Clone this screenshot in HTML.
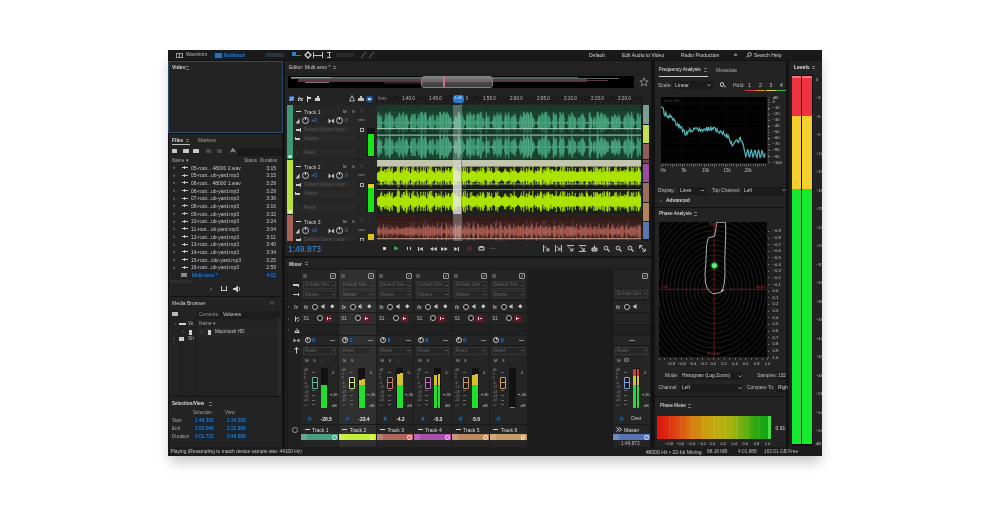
<!DOCTYPE html><html><head><meta charset="utf-8"><style>
html,body{margin:0;padding:0;background:#fff;width:991px;height:518px;overflow:hidden}
div{position:absolute}
.t{position:absolute;white-space:nowrap;font-family:"Liberation Sans",sans-serif}
</style></head><body>
<div id="app" style="left:0;top:0;width:991px;height:518px;will-change:transform;filter:blur(0.3px)"><div style="left:168.00px;top:50.00px;width:654.00px;height:406.00px;background:#121212;box-shadow:0 8px 12px -2px rgba(0,0,0,0.24), 0 0 0 0.8px rgba(255,255,255,0.9);"></div>
<div style="left:168.00px;top:50.00px;width:654.00px;height:10.00px;background:#1a1a1a;"></div>
<div style="left:168.00px;top:61.00px;width:115.00px;height:72.00px;background:#232323;border:1.3px solid #2e4a68;box-sizing:border-box;"></div>
<div style="left:169.00px;top:134.00px;width:113.00px;height:162.00px;background:#232323;"></div>
<div style="left:169.00px;top:297.00px;width:113.00px;height:99.00px;background:#232323;"></div>
<div style="left:169.00px;top:397.00px;width:113.00px;height:50.00px;background:#232323;"></div>
<div style="left:285.00px;top:61.00px;width:366.00px;height:195.00px;background:#232323;"></div>
<div style="left:285.00px;top:258.00px;width:366.00px;height:189.00px;background:#232323;"></div>
<div style="left:655.00px;top:61.00px;width:131.00px;height:146.00px;background:#232323;"></div>
<div style="left:655.00px;top:208.00px;width:131.00px;height:188.00px;background:#232323;"></div>
<div style="left:655.00px;top:397.00px;width:131.00px;height:50.00px;background:#232323;"></div>
<div style="left:789.00px;top:61.00px;width:33.00px;height:386.00px;background:#232323;"></div>
<div style="left:168.00px;top:447.00px;width:654.00px;height:9.00px;background:#1c1c1c;"></div>
<div style="left:176.00px;top:53.00px;width:7.00px;height:5.00px;background:transparent;border:1px solid #9a9a9a;box-sizing:border-box;"></div>
<div style="left:179.00px;top:53.00px;width:1.00px;height:5.00px;background:#9a9a9a;"></div>
<div class="t" style="left:186.00px;top:52.48px;font-size:4.7px;line-height:5.64px;color:#b8b8b8;">Waveform</div>
<div style="left:211.00px;top:51.00px;width:35.00px;height:8.00px;background:#0e2033;"></div>
<div style="left:215.00px;top:53.00px;width:7.00px;height:5.00px;background:#2f6fb3;"></div>
<div class="t" style="left:223.50px;top:52.30px;font-size:5px;line-height:6.00px;color:#3d8fe0;">Multitrack</div>
<div style="left:266.00px;top:53.00px;width:18.00px;height:4.00px;background:#2a3440;"></div>
<div style="left:292.00px;top:52.00px;width:4.00px;height:4.00px;background:#2f7fd0;"></div>
<div style="left:296.00px;top:55.00px;width:5.00px;height:1.00px;background:#2f7fd0;"></div>
<svg style="position:absolute;left:304px;top:51px" width="8" height="8"><path d="M1 4 L4 1 L7 4 L4 7 Z" fill="none" stroke="#d0d0d0" stroke-width="1.3"/></svg>
<div style="left:313.00px;top:52.00px;width:1.00px;height:6.00px;background:#c0c0c0;"></div>
<div style="left:322.00px;top:52.00px;width:1.00px;height:6.00px;background:#c0c0c0;"></div>
<div style="left:314.00px;top:55.00px;width:8.00px;height:1.00px;background:#c0c0c0;"></div>
<div style="left:328.50px;top:52.00px;width:1.00px;height:6.00px;background:#bdbdbd;"></div>
<div style="left:327.00px;top:52.00px;width:4.00px;height:1.00px;background:#bdbdbd;"></div>
<div style="left:327.00px;top:57.00px;width:4.00px;height:1.00px;background:#bdbdbd;"></div>
<div style="left:336.00px;top:53.00px;width:18.00px;height:4.00px;background:#2b2b2b;"></div>
<svg style="position:absolute;left:360px;top:51px" width="16" height="8"><path d="M1 7 L6 1 M9 7 L14 1" stroke="#4a4a4a" stroke-width="1.2"/></svg>
<div class="t" style="left:589.00px;top:52.00px;font-size:5px;line-height:6.00px;color:#d2d2d2;">Default</div>
<div class="t" style="left:622.00px;top:52.00px;font-size:5px;line-height:6.00px;color:#d2d2d2;">Edit Audio to Video</div>
<div class="t" style="left:681.00px;top:52.00px;font-size:5px;line-height:6.00px;color:#d2d2d2;">Radio Production</div>
<div class="t" style="left:733.80px;top:51.20px;font-size:6px;line-height:7.20px;color:#c8c8c8;font-weight:bold">&raquo;</div>
<svg style="position:absolute;left:746.00px;top:52.00px;overflow:visible" width="6" height="6" viewBox="0 0 6 6"><circle cx="3.6" cy="2.4" r="1.8" fill="none" stroke="#c8c8c8" stroke-width="0.9"/><path d="M2.3 3.7 L0.5 5.5" stroke="#c8c8c8" stroke-width="1"/></svg>
<div class="t" style="left:754.00px;top:52.00px;font-size:5px;line-height:6.00px;color:#d2d2d2;">Search Help</div>
<div class="t" style="left:172.00px;top:64.40px;font-size:5px;line-height:6.00px;color:#d8d8d8;font-weight:bold">Video</div>
<div style="left:186.00px;top:65.50px;width:3.00px;height:4.00px;background:transparent;border-top:1px solid #777;border-bottom:1px solid #777;box-sizing:border-box"></div>
<div class="t" style="left:172.00px;top:137.00px;font-size:5px;line-height:6.00px;color:#d8d8d8;font-weight:bold">Files</div>
<div style="left:172.00px;top:144.00px;width:18.00px;height:1.00px;background:#bdbdbd;"></div>
<div style="left:186.00px;top:138.50px;width:3.00px;height:3.50px;background:transparent;border-top:1px solid #777;border-bottom:1px solid #777;box-sizing:border-box"></div>
<div class="t" style="left:198.00px;top:137.00px;font-size:5px;line-height:6.00px;color:#a0a0a0;">Markers</div>
<div style="left:172.00px;top:149.20px;width:5.00px;height:3.80px;background:#c8c8c8;border-radius:0.5px"></div>
<div style="left:183.00px;top:149.20px;width:5.50px;height:3.80px;background:#c8c8c8;border-radius:0.5px"></div>
<div style="left:193.00px;top:149.20px;width:5.50px;height:3.80px;background:#c8c8c8;border-radius:0.5px"></div>
<div style="left:205.50px;top:149.20px;width:5.50px;height:3.80px;background:#4a4a4a;border-radius:0.5px"></div>
<div style="left:217.00px;top:149.20px;width:4.50px;height:3.80px;background:#4a4a4a;border-radius:0.5px"></div>
<svg style="position:absolute;left:230.00px;top:148.00px;overflow:visible" width="6" height="5" viewBox="0 0 6 5"><path d="M0.5 4.5 L3 0.5 L5.5 4.5 M1.5 3 H4.5" stroke="#bbb" stroke-width="0.9" fill="none"/></svg>
<div style="left:237.00px;top:147.50px;width:45.00px;height:8.00px;background:#1a1a1a;"></div>
<div class="t" style="left:172.00px;top:157.74px;font-size:4.6px;line-height:5.52px;color:#a8a8a8;">Name &#9662;</div>
<div class="t" style="left:244.00px;top:157.74px;font-size:4.6px;line-height:5.52px;color:#a8a8a8;">Status</div>
<div class="t" style="left:260.00px;top:157.74px;font-size:4.6px;line-height:5.52px;color:#a8a8a8;">Duration</div>
<div class="t" style="left:173.00px;top:163.90px;font-size:6px;line-height:7.20px;color:#c0c0c0;">&#8250;</div>
<div style="left:182.00px;top:167.10px;width:6.00px;height:0.90px;background:#c8c8c8;"></div>
<div style="left:183.50px;top:166.00px;width:0.90px;height:3.00px;background:#c8c8c8;"></div>
<div class="t" style="left:191.00px;top:164.50px;font-size:5.0px;line-height:6.00px;color:#c8c8c8;">05-root...  48000 2.wav</div>
<div class="t" style="left:266.30px;top:164.50px;font-size:5.0px;line-height:6.00px;color:#c8c8c8;">3:15</div>
<div class="t" style="left:173.00px;top:171.57px;font-size:6px;line-height:7.20px;color:#c0c0c0;">&#8250;</div>
<div style="left:182.00px;top:174.77px;width:6.00px;height:0.90px;background:#c8c8c8;"></div>
<div style="left:183.50px;top:173.67px;width:0.90px;height:3.00px;background:#c8c8c8;"></div>
<div class="t" style="left:191.00px;top:172.17px;font-size:5.0px;line-height:6.00px;color:#c8c8c8;">05-root...ub-yard.mp3</div>
<div class="t" style="left:266.30px;top:172.17px;font-size:5.0px;line-height:6.00px;color:#c8c8c8;">3:15</div>
<div class="t" style="left:173.00px;top:179.24px;font-size:6px;line-height:7.20px;color:#c0c0c0;">&#8250;</div>
<div style="left:182.00px;top:182.44px;width:6.00px;height:0.90px;background:#c8c8c8;"></div>
<div style="left:183.50px;top:181.34px;width:0.90px;height:3.00px;background:#c8c8c8;"></div>
<div class="t" style="left:191.00px;top:179.84px;font-size:5.0px;line-height:6.00px;color:#c8c8c8;">06-root...  48000 1.wav</div>
<div class="t" style="left:266.30px;top:179.84px;font-size:5.0px;line-height:6.00px;color:#c8c8c8;">3:29</div>
<div class="t" style="left:173.00px;top:186.91px;font-size:6px;line-height:7.20px;color:#c0c0c0;">&#8250;</div>
<div style="left:182.00px;top:190.11px;width:6.00px;height:0.90px;background:#c8c8c8;"></div>
<div style="left:183.50px;top:189.01px;width:0.90px;height:3.00px;background:#c8c8c8;"></div>
<div class="t" style="left:191.00px;top:187.51px;font-size:5.0px;line-height:6.00px;color:#c8c8c8;">06-root...ub-yard.mp3</div>
<div class="t" style="left:266.30px;top:187.51px;font-size:5.0px;line-height:6.00px;color:#c8c8c8;">3:29</div>
<div class="t" style="left:173.00px;top:194.58px;font-size:6px;line-height:7.20px;color:#c0c0c0;">&#8250;</div>
<div style="left:182.00px;top:197.78px;width:6.00px;height:0.90px;background:#c8c8c8;"></div>
<div style="left:183.50px;top:196.68px;width:0.90px;height:3.00px;background:#c8c8c8;"></div>
<div class="t" style="left:191.00px;top:195.18px;font-size:5.0px;line-height:6.00px;color:#c8c8c8;">07-root...ub-yard.mp3</div>
<div class="t" style="left:266.30px;top:195.18px;font-size:5.0px;line-height:6.00px;color:#c8c8c8;">3:36</div>
<div class="t" style="left:173.00px;top:202.25px;font-size:6px;line-height:7.20px;color:#c0c0c0;">&#8250;</div>
<div style="left:182.00px;top:205.45px;width:6.00px;height:0.90px;background:#c8c8c8;"></div>
<div style="left:183.50px;top:204.35px;width:0.90px;height:3.00px;background:#c8c8c8;"></div>
<div class="t" style="left:191.00px;top:202.85px;font-size:5.0px;line-height:6.00px;color:#c8c8c8;">08-root...ub-yard.mp3</div>
<div class="t" style="left:266.30px;top:202.85px;font-size:5.0px;line-height:6.00px;color:#c8c8c8;">3:16</div>
<div class="t" style="left:173.00px;top:209.92px;font-size:6px;line-height:7.20px;color:#c0c0c0;">&#8250;</div>
<div style="left:182.00px;top:213.12px;width:6.00px;height:0.90px;background:#c8c8c8;"></div>
<div style="left:183.50px;top:212.02px;width:0.90px;height:3.00px;background:#c8c8c8;"></div>
<div class="t" style="left:191.00px;top:210.52px;font-size:5.0px;line-height:6.00px;color:#c8c8c8;">09-root...ub-yard.mp3</div>
<div class="t" style="left:266.30px;top:210.52px;font-size:5.0px;line-height:6.00px;color:#c8c8c8;">3:32</div>
<div class="t" style="left:173.00px;top:217.59px;font-size:6px;line-height:7.20px;color:#c0c0c0;">&#8250;</div>
<div style="left:182.00px;top:220.79px;width:6.00px;height:0.90px;background:#c8c8c8;"></div>
<div style="left:183.50px;top:219.69px;width:0.90px;height:3.00px;background:#c8c8c8;"></div>
<div class="t" style="left:191.00px;top:218.19px;font-size:5.0px;line-height:6.00px;color:#c8c8c8;">10-root...ub-yard.mp3</div>
<div class="t" style="left:266.30px;top:218.19px;font-size:5.0px;line-height:6.00px;color:#c8c8c8;">3:24</div>
<div class="t" style="left:173.00px;top:225.26px;font-size:6px;line-height:7.20px;color:#c0c0c0;">&#8250;</div>
<div style="left:182.00px;top:228.46px;width:6.00px;height:0.90px;background:#c8c8c8;"></div>
<div style="left:183.50px;top:227.36px;width:0.90px;height:3.00px;background:#c8c8c8;"></div>
<div class="t" style="left:191.00px;top:225.86px;font-size:5.0px;line-height:6.00px;color:#c8c8c8;">11-root...ub-yard.mp3</div>
<div class="t" style="left:266.30px;top:225.86px;font-size:5.0px;line-height:6.00px;color:#c8c8c8;">3:04</div>
<div class="t" style="left:173.00px;top:232.93px;font-size:6px;line-height:7.20px;color:#c0c0c0;">&#8250;</div>
<div style="left:182.00px;top:236.13px;width:6.00px;height:0.90px;background:#c8c8c8;"></div>
<div style="left:183.50px;top:235.03px;width:0.90px;height:3.00px;background:#c8c8c8;"></div>
<div class="t" style="left:191.00px;top:233.53px;font-size:5.0px;line-height:6.00px;color:#c8c8c8;">12-root...ub-yard.mp3</div>
<div class="t" style="left:266.30px;top:233.53px;font-size:5.0px;line-height:6.00px;color:#c8c8c8;">3:11</div>
<div class="t" style="left:173.00px;top:240.60px;font-size:6px;line-height:7.20px;color:#c0c0c0;">&#8250;</div>
<div style="left:182.00px;top:243.80px;width:6.00px;height:0.90px;background:#c8c8c8;"></div>
<div style="left:183.50px;top:242.70px;width:0.90px;height:3.00px;background:#c8c8c8;"></div>
<div class="t" style="left:191.00px;top:241.20px;font-size:5.0px;line-height:6.00px;color:#c8c8c8;">13-root...ub-yard.mp3</div>
<div class="t" style="left:266.30px;top:241.20px;font-size:5.0px;line-height:6.00px;color:#c8c8c8;">3:40</div>
<div class="t" style="left:173.00px;top:248.27px;font-size:6px;line-height:7.20px;color:#c0c0c0;">&#8250;</div>
<div style="left:182.00px;top:251.47px;width:6.00px;height:0.90px;background:#c8c8c8;"></div>
<div style="left:183.50px;top:250.37px;width:0.90px;height:3.00px;background:#c8c8c8;"></div>
<div class="t" style="left:191.00px;top:248.87px;font-size:5.0px;line-height:6.00px;color:#c8c8c8;">14-root...ub-yard.mp3</div>
<div class="t" style="left:266.30px;top:248.87px;font-size:5.0px;line-height:6.00px;color:#c8c8c8;">3:34</div>
<div class="t" style="left:173.00px;top:255.94px;font-size:6px;line-height:7.20px;color:#c0c0c0;">&#8250;</div>
<div style="left:182.00px;top:259.14px;width:6.00px;height:0.90px;background:#c8c8c8;"></div>
<div style="left:183.50px;top:258.04px;width:0.90px;height:3.00px;background:#c8c8c8;"></div>
<div class="t" style="left:191.00px;top:256.54px;font-size:5.0px;line-height:6.00px;color:#c8c8c8;">15-root...ctic-yard.mp3</div>
<div class="t" style="left:266.30px;top:256.54px;font-size:5.0px;line-height:6.00px;color:#c8c8c8;">3:25</div>
<div class="t" style="left:173.00px;top:263.61px;font-size:6px;line-height:7.20px;color:#c0c0c0;">&#8250;</div>
<div style="left:182.00px;top:266.81px;width:6.00px;height:0.90px;background:#c8c8c8;"></div>
<div style="left:183.50px;top:265.71px;width:0.90px;height:3.00px;background:#c8c8c8;"></div>
<div class="t" style="left:191.00px;top:264.21px;font-size:5.0px;line-height:6.00px;color:#c8c8c8;">16-root...ub-yard.mp3</div>
<div class="t" style="left:266.30px;top:264.21px;font-size:5.0px;line-height:6.00px;color:#c8c8c8;">2:59</div>
<div style="left:181.00px;top:272.88px;width:6.00px;height:4.00px;background:#8a8a8a;"></div>
<div class="t" style="left:191.00px;top:271.88px;font-size:5.0px;line-height:6.00px;color:#3d8fe0;background:#10263d;padding:0 1px">Multi.sesx *</div>
<div class="t" style="left:265.50px;top:271.88px;font-size:5.0px;line-height:6.00px;color:#3d8fe0;background:#10263d;padding:0 1px">4:01</div>
<div style="left:170.00px;top:280.00px;width:22.00px;height:3.00px;background:#2e2e2e;"></div>
<div class="t" style="left:210.00px;top:286.60px;font-size:4px;line-height:4.80px;color:#555;">&#9654;</div>
<div style="left:221.00px;top:286.00px;width:6.00px;height:5.00px;background:transparent;border:1px solid #c8c8c8;border-top:none;box-sizing:border-box"></div>
<svg style="position:absolute;left:232px;top:285px" width="9" height="8"><path d="M1 3 H3 L6 0.5 V7.5 L3 5 H1 Z" fill="#d0d0d0"/><path d="M7 2 Q8.5 4 7 6" stroke="#d0d0d0" fill="none" stroke-width="0.8"/></svg>
<div class="t" style="left:172.00px;top:300.00px;font-size:5px;line-height:6.00px;color:#d0d0d0;">Media Browser</div>
<div style="left:270.00px;top:301.00px;width:4.00px;height:4.00px;background:#444;border-radius:50%"></div>
<div style="left:172.00px;top:312.00px;width:6.00px;height:4.00px;background:#b8b8b8;"></div>
<div style="left:197.00px;top:310.50px;width:83.00px;height:8.00px;background:#1d1d1d;"></div>
<div class="t" style="left:199.00px;top:311.68px;font-size:4.7px;line-height:5.64px;color:#9a9a9a;">Contents:</div>
<div class="t" style="left:223.00px;top:311.68px;font-size:4.7px;line-height:5.64px;color:#d0d0d0;">Volumes</div>
<div style="left:181.00px;top:318.00px;width:1.00px;height:78.00px;background:#1c1c1c;"></div>
<div style="left:195.00px;top:319.00px;width:1.00px;height:77.00px;background:#1c1c1c;"></div>
<div style="left:278.00px;top:318.00px;width:3.00px;height:78.00px;background:#2c2c2c;"></div>
<div class="t" style="left:173.00px;top:321.30px;font-size:4.5px;line-height:5.40px;color:#888;">&#8964;</div>
<div style="left:179.00px;top:323.00px;width:7.00px;height:2.00px;background:#cfcfcf;"></div>
<div class="t" style="left:188.00px;top:321.18px;font-size:4.7px;line-height:5.64px;color:#bbb;">Vo</div>
<div class="t" style="left:199.00px;top:321.18px;font-size:4.7px;line-height:5.64px;color:#a0a0a0;">Name &#9662;</div>
<div style="left:196.00px;top:328.00px;width:82.00px;height:8.00px;background:#262626;"></div>
<div class="t" style="left:182.00px;top:329.30px;font-size:4.5px;line-height:5.40px;color:#888;">&#8250;</div>
<div style="left:189.00px;top:330.00px;width:3.00px;height:5.00px;background:#d0d0d0;"></div>
<div class="t" style="left:201.00px;top:329.30px;font-size:4.5px;line-height:5.40px;color:#888;">&#8250;</div>
<div style="left:208.00px;top:330.00px;width:3.00px;height:5.00px;background:#d0d0d0;"></div>
<div class="t" style="left:215.00px;top:329.18px;font-size:4.7px;line-height:5.64px;color:#c4c4c4;">Macintosh HD</div>
<div class="t" style="left:173.00px;top:336.30px;font-size:4.5px;line-height:5.40px;color:#888;">&#8250;</div>
<div style="left:179.00px;top:337.00px;width:5.00px;height:4.00px;background:#c8c8c8;"></div>
<div class="t" style="left:188.00px;top:336.18px;font-size:4.7px;line-height:5.64px;color:#bbb;">Sh</div>
<div style="left:168.00px;top:396.00px;width:114.00px;height:1.00px;background:#151515;"></div>
<div class="t" style="left:172.00px;top:401.24px;font-size:4.6px;line-height:5.52px;color:#d8d8d8;font-weight:bold">Selection/View</div>
<div style="left:209.00px;top:402.20px;width:3.00px;height:3.50px;background:transparent;border-top:1px solid #777;border-bottom:1px solid #777;box-sizing:border-box"></div>
<div class="t" style="left:193.00px;top:410.24px;font-size:4.6px;line-height:5.52px;color:#a0a0a0;">Selection</div>
<div class="t" style="left:225.00px;top:410.24px;font-size:4.6px;line-height:5.52px;color:#a0a0a0;">View</div>
<div class="t" style="left:172.00px;top:417.74px;font-size:4.6px;line-height:5.52px;color:#a8a8a8;">Start</div>
<div class="t" style="left:194.00px;top:417.62px;font-size:4.8px;line-height:5.76px;color:#3d8fe0;background:#10263d;padding:0 1px">1:48.333</div>
<div class="t" style="left:226.00px;top:417.62px;font-size:4.8px;line-height:5.76px;color:#3d8fe0;background:#10263d;padding:0 1px">1:34.295</div>
<div class="t" style="left:172.00px;top:425.94px;font-size:4.6px;line-height:5.52px;color:#a8a8a8;">End</div>
<div class="t" style="left:194.00px;top:425.82px;font-size:4.8px;line-height:5.76px;color:#3d8fe0;background:#10263d;padding:0 1px">1:50.049</div>
<div class="t" style="left:226.00px;top:425.82px;font-size:4.8px;line-height:5.76px;color:#3d8fe0;background:#10263d;padding:0 1px">2:22.894</div>
<div class="t" style="left:172.00px;top:434.14px;font-size:4.6px;line-height:5.52px;color:#a8a8a8;">Duration</div>
<div class="t" style="left:194.00px;top:434.02px;font-size:4.8px;line-height:5.76px;color:#3d8fe0;background:#10263d;padding:0 1px">0:01.732</div>
<div class="t" style="left:226.00px;top:434.02px;font-size:4.8px;line-height:5.76px;color:#3d8fe0;background:#10263d;padding:0 1px">0:48.599</div>
<div class="t" style="left:170.50px;top:449.29px;font-size:4.85px;line-height:5.82px;color:#c8c8c8;">Playing (Resampling to match device sample rate: 44100 Hz)</div>
<div class="t" style="left:645.40px;top:448.88px;font-size:5.2px;line-height:6.24px;color:#c4c4c4;">48000 Hz &bull; 32-bit Mixing</div>
<div class="t" style="left:707.00px;top:449.12px;font-size:4.8px;line-height:5.76px;color:#bdbdbd;">88.18 MB</div>
<div class="t" style="left:738.00px;top:449.12px;font-size:4.8px;line-height:5.76px;color:#bdbdbd;">4:01.888</div>
<div class="t" style="left:764.00px;top:449.12px;font-size:4.8px;line-height:5.76px;color:#bdbdbd;">163.01 GB Free</div>
<div class="t" style="left:289.00px;top:64.30px;font-size:5px;line-height:6.00px;color:#c8c8c8;">Editor: Multi.sesx *</div>
<div style="left:333.00px;top:65.50px;width:3.00px;height:3.50px;background:transparent;border-top:1px solid #777;border-bottom:1px solid #777;box-sizing:border-box"></div>
<div style="left:285.00px;top:73.00px;width:366.00px;height:1.00px;background:#1c1c1c;"></div>
<div style="left:288.00px;top:76.00px;width:346.00px;height:12.00px;background:#000;"></div>
<div style="left:290.50px;top:77.00px;width:287.00px;height:2.40px;background:#56625a;"></div>
<div style="left:577.00px;top:77.60px;width:42.00px;height:1.00px;background:#5a645a;"></div>
<div style="left:298.00px;top:79.40px;width:289.00px;height:2.80px;background:#563a42;"></div>
<div style="left:587.00px;top:80.00px;width:21.00px;height:1.00px;background:#5a3a44;"></div>
<div style="left:291.00px;top:77.30px;width:40.00px;height:0.80px;background:#9a9a9a;"></div>
<div style="left:305.00px;top:82.20px;width:24.00px;height:0.90px;background:#8a7078;"></div>
<div style="left:384.00px;top:82.20px;width:40.00px;height:1.60px;background:#2a1a20;"></div>
<div style="left:421.00px;top:75.50px;width:72.00px;height:12.00px;background:linear-gradient(180deg,rgba(150,150,150,0.6),rgba(110,110,110,0.55));border:1px solid #808080;border-radius:3px;box-sizing:border-box"></div>
<div style="left:443.00px;top:76.00px;width:1.50px;height:11.00px;background:#d07080;"></div>
<svg style="position:absolute;left:639px;top:77px" width="10" height="10"><path d="M5 0.8 L6.2 3.8 L9.2 3.9 L6.8 5.9 L7.7 9 L5 7.3 L2.3 9 L3.2 5.9 L0.8 3.9 L3.8 3.8 Z" fill="none" stroke="#999" stroke-width="0.8"/></svg>
<div style="left:288.50px;top:95.80px;width:5.40px;height:5.60px;background:#1f5fa8;border-radius:1px"></div>
<svg style="position:absolute;left:288.50px;top:95.80px;overflow:visible" width="5.4" height="5.6" viewBox="0 0 5.4 5.6"><path d="M0.8 1.8 H4.6 M3.6 0.9 L4.6 1.8 L3.6 2.7 M4.6 3.8 H0.8 M1.8 2.9 L0.8 3.8 L1.8 4.7" stroke="#e8f0ff" stroke-width="0.7" fill="none"/></svg>
<div class="t" style="left:297.80px;top:94.78px;font-size:6.2px;line-height:7.44px;color:#e8e8e8;"><i><b>fx</b></i></div>
<div style="left:307.00px;top:96.00px;width:1.00px;height:6.00px;background:#d8d8d8;"></div>
<div style="left:308.00px;top:97.00px;width:3.00px;height:2.00px;background:#d8d8d8;"></div>
<div style="left:315.00px;top:98.00px;width:5.00px;height:3.00px;background:#d0d0d0;"></div>
<div style="left:317.00px;top:96.00px;width:2.00px;height:2.00px;background:#d0d0d0;"></div>
<svg style="position:absolute;left:349px;top:95px" width="6" height="7"><path d="M3 0.5 L5.5 6 H0.5 Z" fill="none" stroke="#bdbdbd" stroke-width="0.9"/></svg>
<div style="left:357.50px;top:98.00px;width:6.00px;height:3.00px;background:#bdbdbd;"></div>
<div style="left:359.50px;top:96.00px;width:2.00px;height:2.00px;background:#bdbdbd;"></div>
<div style="left:366.00px;top:95.50px;width:6.50px;height:6.50px;background:#1e5fa8;border-radius:50%"></div>
<div style="left:368.00px;top:97.50px;width:2.50px;height:2.50px;background:#e0e0e0;border-radius:50% 50% 0 0"></div>
<div style="left:376.00px;top:94.50px;width:266.00px;height:9.50px;background:#1d1d1d;"></div>
<div class="t" style="left:378.00px;top:96.30px;font-size:4.5px;line-height:5.40px;color:#9a9a9a;">hms</div>
<div class="t" style="left:402.00px;top:96.24px;font-size:4.6px;line-height:5.52px;color:#c0c0c0;">1:40.0</div>
<div class="t" style="left:429.00px;top:96.24px;font-size:4.6px;line-height:5.52px;color:#c0c0c0;">1:45.0</div>
<div class="t" style="left:483.00px;top:96.24px;font-size:4.6px;line-height:5.52px;color:#c0c0c0;">1:55.0</div>
<div class="t" style="left:510.00px;top:96.24px;font-size:4.6px;line-height:5.52px;color:#c0c0c0;">2:00.0</div>
<div class="t" style="left:537.00px;top:96.24px;font-size:4.6px;line-height:5.52px;color:#c0c0c0;">2:05.0</div>
<div class="t" style="left:564.00px;top:96.24px;font-size:4.6px;line-height:5.52px;color:#c0c0c0;">2:10.0</div>
<div class="t" style="left:591.00px;top:96.24px;font-size:4.6px;line-height:5.52px;color:#c0c0c0;">2:15.0</div>
<div class="t" style="left:618.00px;top:96.24px;font-size:4.6px;line-height:5.52px;color:#c0c0c0;">2:20.0</div>
<svg style="position:absolute;left:376px;top:101px" width="266" height="3"><rect x="3.0" y="0" width="0.6" height="3" fill="#3a3a3a"/><rect x="8.4" y="0" width="0.6" height="2" fill="#3a3a3a"/><rect x="13.8" y="0" width="0.6" height="2" fill="#3a3a3a"/><rect x="19.2" y="0" width="0.6" height="2" fill="#3a3a3a"/><rect x="24.6" y="0" width="0.6" height="2" fill="#3a3a3a"/><rect x="30.0" y="0" width="0.6" height="3" fill="#3a3a3a"/><rect x="35.4" y="0" width="0.6" height="2" fill="#3a3a3a"/><rect x="40.8" y="0" width="0.6" height="2" fill="#3a3a3a"/><rect x="46.2" y="0" width="0.6" height="2" fill="#3a3a3a"/><rect x="51.6" y="0" width="0.6" height="2" fill="#3a3a3a"/><rect x="57.0" y="0" width="0.6" height="3" fill="#3a3a3a"/><rect x="62.4" y="0" width="0.6" height="2" fill="#3a3a3a"/><rect x="67.8" y="0" width="0.6" height="2" fill="#3a3a3a"/><rect x="73.2" y="0" width="0.6" height="2" fill="#3a3a3a"/><rect x="78.6" y="0" width="0.6" height="2" fill="#3a3a3a"/><rect x="84.0" y="0" width="0.6" height="3" fill="#3a3a3a"/><rect x="89.4" y="0" width="0.6" height="2" fill="#3a3a3a"/><rect x="94.8" y="0" width="0.6" height="2" fill="#3a3a3a"/><rect x="100.2" y="0" width="0.6" height="2" fill="#3a3a3a"/><rect x="105.6" y="0" width="0.6" height="2" fill="#3a3a3a"/><rect x="111.0" y="0" width="0.6" height="3" fill="#3a3a3a"/><rect x="116.4" y="0" width="0.6" height="2" fill="#3a3a3a"/><rect x="121.8" y="0" width="0.6" height="2" fill="#3a3a3a"/><rect x="127.2" y="0" width="0.6" height="2" fill="#3a3a3a"/><rect x="132.6" y="0" width="0.6" height="2" fill="#3a3a3a"/><rect x="138.0" y="0" width="0.6" height="3" fill="#3a3a3a"/><rect x="143.4" y="0" width="0.6" height="2" fill="#3a3a3a"/><rect x="148.8" y="0" width="0.6" height="2" fill="#3a3a3a"/><rect x="154.2" y="0" width="0.6" height="2" fill="#3a3a3a"/><rect x="159.6" y="0" width="0.6" height="2" fill="#3a3a3a"/><rect x="165.0" y="0" width="0.6" height="3" fill="#3a3a3a"/><rect x="170.4" y="0" width="0.6" height="2" fill="#3a3a3a"/><rect x="175.8" y="0" width="0.6" height="2" fill="#3a3a3a"/><rect x="181.2" y="0" width="0.6" height="2" fill="#3a3a3a"/><rect x="186.6" y="0" width="0.6" height="2" fill="#3a3a3a"/><rect x="192.0" y="0" width="0.6" height="3" fill="#3a3a3a"/><rect x="197.4" y="0" width="0.6" height="2" fill="#3a3a3a"/><rect x="202.8" y="0" width="0.6" height="2" fill="#3a3a3a"/><rect x="208.2" y="0" width="0.6" height="2" fill="#3a3a3a"/><rect x="213.6" y="0" width="0.6" height="2" fill="#3a3a3a"/><rect x="219.0" y="0" width="0.6" height="3" fill="#3a3a3a"/><rect x="224.4" y="0" width="0.6" height="2" fill="#3a3a3a"/><rect x="229.8" y="0" width="0.6" height="2" fill="#3a3a3a"/><rect x="235.2" y="0" width="0.6" height="2" fill="#3a3a3a"/><rect x="240.6" y="0" width="0.6" height="2" fill="#3a3a3a"/><rect x="246.0" y="0" width="0.6" height="3" fill="#3a3a3a"/><rect x="251.4" y="0" width="0.6" height="2" fill="#3a3a3a"/><rect x="256.8" y="0" width="0.6" height="2" fill="#3a3a3a"/><rect x="262.2" y="0" width="0.6" height="2" fill="#3a3a3a"/></svg>
<div style="left:287.00px;top:104.50px;width:90.00px;height:54.00px;overflow:hidden;">
<div style="left:0.00px;top:0.00px;width:5.50px;height:54.00px;background:#3d9a75;"></div>
<div style="left:5.50px;top:0.00px;width:84.00px;height:54.00px;background:#262626;"></div>
<div style="left:9.00px;top:6.50px;width:5.00px;height:1.00px;background:#cfcfcf;"></div>
<div class="t" style="left:17.00px;top:4.00px;font-size:5px;line-height:6.00px;color:#d0d0d0;">Track 1</div>
<div class="t" style="left:56.00px;top:4.48px;font-size:4.2px;line-height:5.04px;color:#b0b0b0;">M</div>
<div class="t" style="left:65.00px;top:4.48px;font-size:4.2px;line-height:5.04px;color:#b0b0b0;">S</div>
<div class="t" style="left:73.00px;top:4.30px;font-size:4.5px;line-height:5.40px;color:#444;">R</div>
<div class="t" style="left:81.00px;top:4.30px;font-size:4.5px;line-height:5.40px;color:#444;">I</div>
<svg style="position:absolute;left:7.50px;top:13.00px;overflow:visible" width="5" height="6" viewBox="0 0 5 6"><path d="M0.5 5.5 L4.5 0.5 V5.5 Z" fill="#c8c8c8"/></svg>
<div style="left:14.60px;top:12.10px;width:7.80px;height:7.80px;background:transparent;border:1.4px solid #c4c4c4;border-radius:50%;box-sizing:border-box"></div>
<div style="left:18.10px;top:12.90px;width:0.90px;height:3.00px;background:#c8c8c8;"></div>
<div class="t" style="left:24.50px;top:13.12px;font-size:4.8px;line-height:5.76px;color:#3d8fe0;">+0</div>
<svg style="position:absolute;left:41.00px;top:13.00px;overflow:visible" width="6.5" height="6" viewBox="0 0 6.5 6"><path d="M0.5 0.5 L3.2 3 L0.5 5.5 Z M6 0.5 L3.3 3 L6 5.5 Z" fill="#c8c8c8"/></svg>
<div style="left:48.50px;top:12.10px;width:7.80px;height:7.80px;background:transparent;border:1.4px solid #c4c4c4;border-radius:50%;box-sizing:border-box"></div>
<div style="left:52.00px;top:12.90px;width:0.90px;height:3.00px;background:#c8c8c8;"></div>
<div class="t" style="left:58.00px;top:13.12px;font-size:4.8px;line-height:5.76px;color:#3d8fe0;">0</div>
<div class="t" style="left:71.00px;top:13.72px;font-size:3.8px;line-height:4.56px;color:#9a9a9a;">sets</div>
<div style="left:15.00px;top:21.80px;width:54.00px;height:7.00px;background:#292929;"></div>
<div style="left:8.50px;top:24.30px;width:4.50px;height:2.00px;background:#c8c8c8;"></div>
<div style="left:12.50px;top:23.50px;width:1.00px;height:3.60px;background:#c8c8c8;"></div>
<div class="t" style="left:17.00px;top:22.48px;font-size:4.7px;line-height:5.64px;color:#5a5a5a;">Default Stereo Input</div>
<div style="left:72.50px;top:23.10px;width:4.40px;height:4.40px;background:transparent;border:1px solid #aaa;box-sizing:border-box"></div>
<div style="left:15.00px;top:30.50px;width:54.00px;height:7.00px;background:#292929;"></div>
<div style="left:8.50px;top:33.00px;width:4.50px;height:2.00px;background:#c8c8c8;"></div>
<div style="left:8.00px;top:32.20px;width:1.00px;height:3.60px;background:#c8c8c8;"></div>
<div class="t" style="left:17.00px;top:31.18px;font-size:4.7px;line-height:5.64px;color:#5a5a5a;">Master</div>
<div style="left:15.00px;top:44.50px;width:54.00px;height:7.00px;background:#292929;"></div>
<div class="t" style="left:9.00px;top:45.30px;font-size:4.5px;line-height:5.40px;color:#666;">&#8250;</div>
<div class="t" style="left:17.00px;top:45.18px;font-size:4.7px;line-height:5.64px;color:#5a5a5a;">Read</div>
<div style="left:79.60px;top:23.50px;width:8.80px;height:29.00px;background:#151515;"></div>
<div style="left:81.00px;top:29.00px;width:6.00px;height:22.00px;background:#19e619;"></div>
</div>
<div style="left:287.00px;top:159.50px;width:90.00px;height:54.00px;overflow:hidden;">
<div style="left:0.00px;top:0.00px;width:5.50px;height:54.00px;background:#b5e23c;"></div>
<div style="left:5.50px;top:0.00px;width:84.00px;height:54.00px;background:#262626;"></div>
<div style="left:9.00px;top:6.50px;width:5.00px;height:1.00px;background:#cfcfcf;"></div>
<div class="t" style="left:17.00px;top:4.00px;font-size:5px;line-height:6.00px;color:#d0d0d0;">Track 2</div>
<div class="t" style="left:56.00px;top:4.48px;font-size:4.2px;line-height:5.04px;color:#b0b0b0;">M</div>
<div class="t" style="left:65.00px;top:4.48px;font-size:4.2px;line-height:5.04px;color:#b0b0b0;">S</div>
<div class="t" style="left:73.00px;top:4.30px;font-size:4.5px;line-height:5.40px;color:#444;">R</div>
<div class="t" style="left:81.00px;top:4.30px;font-size:4.5px;line-height:5.40px;color:#444;">I</div>
<svg style="position:absolute;left:7.50px;top:13.00px;overflow:visible" width="5" height="6" viewBox="0 0 5 6"><path d="M0.5 5.5 L4.5 0.5 V5.5 Z" fill="#c8c8c8"/></svg>
<div style="left:14.60px;top:12.10px;width:7.80px;height:7.80px;background:transparent;border:1.4px solid #c4c4c4;border-radius:50%;box-sizing:border-box"></div>
<div style="left:18.10px;top:12.90px;width:0.90px;height:3.00px;background:#c8c8c8;"></div>
<div class="t" style="left:24.50px;top:13.12px;font-size:4.8px;line-height:5.76px;color:#3d8fe0;">+0</div>
<svg style="position:absolute;left:41.00px;top:13.00px;overflow:visible" width="6.5" height="6" viewBox="0 0 6.5 6"><path d="M0.5 0.5 L3.2 3 L0.5 5.5 Z M6 0.5 L3.3 3 L6 5.5 Z" fill="#c8c8c8"/></svg>
<div style="left:48.50px;top:12.10px;width:7.80px;height:7.80px;background:transparent;border:1.4px solid #c4c4c4;border-radius:50%;box-sizing:border-box"></div>
<div style="left:52.00px;top:12.90px;width:0.90px;height:3.00px;background:#c8c8c8;"></div>
<div class="t" style="left:58.00px;top:13.12px;font-size:4.8px;line-height:5.76px;color:#3d8fe0;">0</div>
<div class="t" style="left:71.00px;top:13.72px;font-size:3.8px;line-height:4.56px;color:#9a9a9a;">sets</div>
<div style="left:15.00px;top:21.80px;width:54.00px;height:7.00px;background:#292929;"></div>
<div style="left:8.50px;top:24.30px;width:4.50px;height:2.00px;background:#c8c8c8;"></div>
<div style="left:12.50px;top:23.50px;width:1.00px;height:3.60px;background:#c8c8c8;"></div>
<div class="t" style="left:17.00px;top:22.48px;font-size:4.7px;line-height:5.64px;color:#5a5a5a;">Default Stereo Input</div>
<div style="left:72.50px;top:23.10px;width:4.40px;height:4.40px;background:transparent;border:1px solid #aaa;box-sizing:border-box"></div>
<div style="left:15.00px;top:30.50px;width:54.00px;height:7.00px;background:#292929;"></div>
<div style="left:8.50px;top:33.00px;width:4.50px;height:2.00px;background:#c8c8c8;"></div>
<div style="left:8.00px;top:32.20px;width:1.00px;height:3.60px;background:#c8c8c8;"></div>
<div class="t" style="left:17.00px;top:31.18px;font-size:4.7px;line-height:5.64px;color:#5a5a5a;">Master</div>
<div style="left:15.00px;top:44.50px;width:54.00px;height:7.00px;background:#292929;"></div>
<div class="t" style="left:9.00px;top:45.30px;font-size:4.5px;line-height:5.40px;color:#666;">&#8250;</div>
<div class="t" style="left:17.00px;top:45.18px;font-size:4.7px;line-height:5.64px;color:#5a5a5a;">Read</div>
<div style="left:79.60px;top:23.50px;width:8.80px;height:29.00px;background:#151515;"></div>
<div style="left:81.00px;top:24.00px;width:6.00px;height:4.00px;background:#e0d020;"></div>
<div style="left:81.00px;top:28.00px;width:6.00px;height:24.00px;background:#19e619;"></div>
</div>
<div style="left:287.00px;top:214.50px;width:90.00px;height:26.00px;overflow:hidden;">
<div style="left:0.00px;top:0.00px;width:5.50px;height:26.00px;background:#a8625a;"></div>
<div style="left:5.50px;top:0.00px;width:84.00px;height:26.00px;background:#262626;"></div>
<div style="left:9.00px;top:6.50px;width:5.00px;height:1.00px;background:#cfcfcf;"></div>
<div class="t" style="left:17.00px;top:4.00px;font-size:5px;line-height:6.00px;color:#d0d0d0;">Track 3</div>
<div class="t" style="left:56.00px;top:4.48px;font-size:4.2px;line-height:5.04px;color:#b0b0b0;">M</div>
<div class="t" style="left:65.00px;top:4.48px;font-size:4.2px;line-height:5.04px;color:#b0b0b0;">S</div>
<div class="t" style="left:73.00px;top:4.30px;font-size:4.5px;line-height:5.40px;color:#444;">R</div>
<div class="t" style="left:81.00px;top:4.30px;font-size:4.5px;line-height:5.40px;color:#444;">I</div>
<svg style="position:absolute;left:7.50px;top:13.00px;overflow:visible" width="5" height="6" viewBox="0 0 5 6"><path d="M0.5 5.5 L4.5 0.5 V5.5 Z" fill="#c8c8c8"/></svg>
<div style="left:14.60px;top:12.10px;width:7.80px;height:7.80px;background:transparent;border:1.4px solid #c4c4c4;border-radius:50%;box-sizing:border-box"></div>
<div style="left:18.10px;top:12.90px;width:0.90px;height:3.00px;background:#c8c8c8;"></div>
<div class="t" style="left:24.50px;top:13.12px;font-size:4.8px;line-height:5.76px;color:#3d8fe0;">+0</div>
<svg style="position:absolute;left:41.00px;top:13.00px;overflow:visible" width="6.5" height="6" viewBox="0 0 6.5 6"><path d="M0.5 0.5 L3.2 3 L0.5 5.5 Z M6 0.5 L3.3 3 L6 5.5 Z" fill="#c8c8c8"/></svg>
<div style="left:48.50px;top:12.10px;width:7.80px;height:7.80px;background:transparent;border:1.4px solid #c4c4c4;border-radius:50%;box-sizing:border-box"></div>
<div style="left:52.00px;top:12.90px;width:0.90px;height:3.00px;background:#c8c8c8;"></div>
<div class="t" style="left:58.00px;top:13.12px;font-size:4.8px;line-height:5.76px;color:#3d8fe0;">0</div>
<div class="t" style="left:71.00px;top:13.72px;font-size:3.8px;line-height:4.56px;color:#9a9a9a;">sets</div>
<div style="left:15.00px;top:21.80px;width:54.00px;height:7.00px;background:#292929;"></div>
<div style="left:8.50px;top:24.30px;width:4.50px;height:2.00px;background:#c8c8c8;"></div>
<div style="left:12.50px;top:23.50px;width:1.00px;height:3.60px;background:#c8c8c8;"></div>
<div class="t" style="left:17.00px;top:22.48px;font-size:4.7px;line-height:5.64px;color:#5a5a5a;">Default Stereo Input</div>
<div style="left:72.50px;top:23.10px;width:4.40px;height:4.40px;background:transparent;border:1px solid #aaa;box-sizing:border-box"></div>
<div style="left:15.00px;top:30.50px;width:54.00px;height:7.00px;background:#292929;"></div>
<div style="left:8.50px;top:33.00px;width:4.50px;height:2.00px;background:#c8c8c8;"></div>
<div style="left:8.00px;top:32.20px;width:1.00px;height:3.60px;background:#c8c8c8;"></div>
<div class="t" style="left:17.00px;top:31.18px;font-size:4.7px;line-height:5.64px;color:#5a5a5a;">Master</div>
<div style="left:79.60px;top:23.50px;width:8.80px;height:1.00px;background:#151515;"></div>
<div style="left:81.00px;top:19.00px;width:6.00px;height:6.00px;background:#e0c020;"></div>
</div>
<div style="left:288.00px;top:155.00px;width:3.50px;height:3.00px;background:#cfe8dc;border-radius:50%"></div>
<div style="left:288.00px;top:210.00px;width:3.50px;height:3.00px;background:#e8f0c0;border-radius:50%"></div>
<svg style="position:absolute;left:376.5px;top:104.5px" width="264.5" height="136" viewBox="0 0 264.5 136"><rect x="0" y="0" width="264.5" height="54.5" fill="#1b4231"/><path d="M0.25 13.2V22.4M0.75 9.8V25.8M1.25 10.1V25.5M1.75 7.4V28.2M2.25 12.5V23.1M2.75 13.3V22.3M3.25 10.4V25.2M3.75 12.1V23.5M4.25 11.0V24.6M4.75 11.6V24.0M5.25 17.1V18.5M5.75 17.1V18.5M6.25 17.1V18.5M6.75 17.1V18.5M7.25 17.1V18.5M7.75 14.3V21.3M8.25 9.2V26.4M8.75 11.0V24.6M9.25 7.6V28.0M9.75 10.6V25.0M10.25 13.3V22.3M10.75 9.7V25.9M11.25 10.7V24.9M11.75 8.5V27.1M12.25 7.8V27.8M12.75 6.4V29.2M13.25 10.9V24.7M13.75 10.2V25.4M14.25 12.8V22.8M14.75 10.1V25.5M15.25 11.0V24.6M15.75 10.8V24.8M16.25 13.4V22.2M16.75 16.2V19.4M17.25 17.1V18.5M17.75 17.1V18.5M18.25 13.5V22.1M18.75 13.3V22.3M19.25 12.6V23.0M19.75 11.5V24.1M20.25 14.1V21.5M20.75 12.4V23.2M21.25 11.5V24.1M21.75 8.7V26.9M22.25 7.6V28.0M22.75 8.9V26.7M23.25 11.4V24.2M23.75 12.5V23.1M24.25 11.7V23.9M24.75 10.1V25.5M25.25 8.8V26.8M25.75 10.7V24.9M26.25 6.4V29.2M26.75 7.5V28.1M27.25 11.2V24.4M27.75 12.1V23.5M28.25 12.1V23.5M28.75 10.5V25.1M29.25 9.2V26.4M29.75 9.3V26.3M30.25 11.2V24.4M30.75 13.3V22.3M31.25 15.2V20.4M31.75 17.1V18.5M32.25 17.1V18.5M32.75 17.1V18.5M33.25 17.1V18.5M33.75 12.9V22.7M34.25 11.6V24.0M34.75 8.9V26.7M35.25 8.9V26.7M35.75 10.6V25.0M36.25 13.3V22.3M36.75 9.5V26.1M37.25 9.1V26.5M37.75 8.8V26.8M38.25 8.8V26.8M38.75 13.3V22.3M39.25 15.5V20.1M39.75 17.1V18.5M40.25 13.4V22.2M40.75 13.2V22.4M41.25 9.0V26.6M41.75 8.9V26.7M42.25 11.6V24.0M42.75 12.9V22.7M43.25 10.5V25.1M43.75 7.8V27.8M44.25 6.4V29.2M44.75 8.0V27.6M45.25 6.4V29.2M45.75 10.0V25.6M46.25 10.6V25.0M46.75 10.1V25.5M47.25 7.7V27.9M47.75 8.3V27.3M48.25 8.3V27.3M48.75 7.1V28.5M49.25 10.6V25.0M49.75 12.7V22.9M50.25 15.3V20.3M50.75 17.1V18.5M51.25 17.1V18.5M51.75 14.3V21.3M52.25 11.6V24.0M52.75 12.9V22.7M53.25 10.5V25.1M53.75 11.9V23.7M54.25 13.1V22.5M54.75 11.8V23.8M55.25 9.2V26.4M55.75 10.2V25.4M56.25 10.4V25.2M56.75 12.8V22.8M57.25 14.9V20.7M57.75 17.1V18.5M58.25 17.1V18.5M58.75 15.5V20.1M59.25 11.3V24.3M59.75 9.9V25.7M60.25 10.2V25.4M60.75 12.2V23.4M61.25 13.3V22.3M61.75 12.3V23.3M62.25 10.1V25.5M62.75 6.9V28.7M63.25 6.4V29.2M63.75 8.6V27.0M64.25 9.5V26.1M64.75 9.7V25.9M65.25 12.1V23.5M65.75 9.8V25.8M66.25 6.8V28.8M66.75 6.4V29.2M67.25 6.4V29.2M67.75 9.1V26.5M68.25 8.0V27.6M68.75 9.6V26.0M69.25 9.0V26.6M69.75 7.5V28.1M70.25 6.4V29.2M70.75 9.4V26.2M71.25 11.2V24.4M71.75 9.1V26.5M72.25 12.6V23.0M72.75 12.6V23.0M73.25 13.8V21.8M73.75 12.3V23.3M74.25 14.2V21.4M74.75 17.1V18.5M75.25 17.1V18.5M75.75 17.1V18.5M76.25 17.1V18.5M76.75 17.1V18.5M77.25 15.9V19.7M77.75 13.3V22.3M78.25 11.6V24.0M78.75 10.5V25.1M79.25 12.1V23.5M79.75 13.1V22.5M80.25 13.3V22.3M80.75 9.7V25.9M81.25 6.7V28.9M81.75 6.4V29.2M82.25 7.3V28.3M82.75 10.5V25.1M83.25 11.6V24.0M83.75 11.1V24.5M84.25 10.9V24.7M84.75 10.4V25.2M85.25 8.0V27.6M85.75 12.1V23.5M86.25 12.4V23.2M86.75 14.2V21.4M87.25 15.0V20.6M87.75 15.1V20.5M88.25 17.1V18.5M88.75 17.1V18.5M89.25 13.9V21.7M89.75 10.0V25.6M90.25 8.5V27.1M90.75 10.3V25.3M91.25 11.8V23.8M91.75 11.1V24.5M92.25 10.5V25.1M92.75 9.9V25.7M93.25 6.4V29.2M93.75 8.6V27.0M94.25 10.0V25.6M94.75 9.9V25.7M95.25 11.2V24.4M95.75 11.0V24.6M96.25 8.9V26.7M96.75 8.8V26.8M97.25 9.3V26.3M97.75 11.4V24.2M98.25 15.6V20.0M98.75 17.1V18.5M99.25 15.4V20.2M99.75 10.0V25.6M100.25 10.0V25.6M100.75 8.6V27.0M101.25 9.1V26.5M101.75 9.6V26.0M102.25 12.9V22.7M102.75 9.4V26.2M103.25 6.4V29.2M103.75 6.4V29.2M104.25 7.4V28.2M104.75 10.0V25.6M105.25 13.2V22.4M105.75 12.5V23.1M106.25 13.1V22.5M106.75 14.0V21.6M107.25 17.1V18.5M107.75 17.1V18.5M108.25 14.3V21.3M108.75 11.9V23.7M109.25 7.6V28.0M109.75 11.6V24.0M110.25 12.9V22.7M110.75 11.6V24.0M111.25 12.4V23.2M111.75 12.7V22.9M112.25 10.6V25.0M112.75 17.1V18.5M113.25 17.1V18.5M113.75 17.1V18.5M114.25 17.1V18.5M114.75 17.1V18.5M115.25 17.1V18.5M115.75 15.2V20.4M116.25 11.3V24.3M116.75 10.9V24.7M117.25 9.0V26.6M117.75 13.4V22.2M118.25 13.9V21.7M118.75 10.8V24.8M119.25 11.8V23.8M119.75 9.6V26.0M120.25 6.9V28.7M120.75 8.8V26.8M121.25 9.9V25.7M121.75 11.0V24.6M122.25 11.2V24.4M122.75 10.0V25.6M123.25 7.6V28.0M123.75 8.1V27.5M124.25 10.5V25.1M124.75 10.6V25.0M125.25 14.9V20.7M125.75 16.0V19.6M126.25 17.1V18.5M126.75 17.1V18.5M127.25 17.1V18.5M127.75 12.6V23.0M128.25 9.7V25.9M128.75 9.3V26.3M129.25 10.7V24.9M129.75 10.4V25.2M130.25 11.9V23.7M130.75 10.4V25.2M131.25 8.1V27.5M131.75 6.4V29.2M132.25 10.5V25.1M132.75 17.1V18.5M133.25 17.1V18.5M133.75 13.0V22.6M134.25 12.6V23.0M134.75 11.5V24.1M135.25 10.5V25.1M135.75 12.2V23.4M136.25 14.2V21.4M136.75 10.8V24.8M137.25 9.4V26.2M137.75 9.7V25.9M138.25 8.7V26.9M138.75 12.7V22.9M139.25 14.5V21.1M139.75 17.1V18.5M140.25 17.1V18.5M140.75 17.1V18.5M141.25 17.1V18.5M141.75 17.1V18.5M142.25 14.8V20.8M142.75 13.0V22.6M143.25 11.0V24.6M143.75 9.4V26.2M144.25 11.8V23.8M144.75 12.7V22.9M145.25 12.5V23.1M145.75 11.5V24.1M146.25 6.4V29.2M146.75 7.8V27.8M147.25 9.7V25.9M147.75 8.2V27.4M148.25 9.7V25.9M148.75 12.4V23.2M149.25 10.2V25.4M149.75 7.8V27.8M150.25 6.4V29.2M150.75 7.3V28.3M151.25 8.7V26.9M151.75 9.2V26.4M152.25 13.4V22.2M152.75 10.3V25.3M153.25 9.1V26.5M153.75 7.0V28.6M154.25 6.4V29.2M154.75 9.4V26.2M155.25 9.9V25.7M155.75 12.4V23.2M156.25 13.3V22.3M156.75 14.0V21.6M157.25 14.0V21.6M157.75 17.1V18.5M158.25 17.1V18.5M158.75 17.1V18.5M159.25 17.1V18.5M159.75 17.1V18.5M160.25 17.1V18.5M160.75 15.1V20.5M161.25 12.3V23.3M161.75 12.2V23.4M162.25 10.2V25.4M162.75 11.0V24.6M163.25 11.6V24.0M163.75 12.0V23.6M164.25 9.5V26.1M164.75 9.0V26.6M165.25 6.4V29.2M165.75 9.4V26.2M166.25 9.2V26.4M166.75 10.2V25.4M167.25 11.4V24.2M167.75 8.2V27.4M168.25 7.3V28.3M168.75 6.4V29.2M169.25 8.0V27.6M169.75 6.7V28.9M170.25 10.2V25.4M170.75 13.8V21.8M171.25 12.2V23.4M171.75 10.4V25.2M172.25 11.6V24.0M172.75 13.3V22.3M173.25 13.7V21.9M173.75 17.1V18.5M174.25 17.1V18.5M174.75 17.1V18.5M175.25 17.1V18.5M175.75 14.7V20.9M176.25 7.6V28.0M176.75 8.2V27.4M177.25 10.5V25.1M177.75 9.4V26.2M178.25 11.2V24.4M178.75 9.5V26.1M179.25 8.7V26.9M179.75 12.0V23.6M180.25 17.1V18.5M180.75 17.1V18.5M181.25 17.1V18.5M181.75 17.1V18.5M182.25 13.3V22.3M182.75 11.7V23.9M183.25 6.4V29.2M183.75 9.6V26.0M184.25 10.4V25.2M184.75 10.6V25.0M185.25 8.5V27.1M185.75 7.8V27.8M186.25 7.7V27.9M186.75 10.9V24.7M187.25 12.2V23.4M187.75 17.1V18.5M188.25 17.1V18.5M188.75 17.1V18.5M189.25 17.1V18.5M189.75 17.1V18.5M190.25 17.1V18.5M190.75 15.7V19.9M191.25 12.4V23.2M191.75 10.6V25.0M192.25 9.2V26.4M192.75 12.5V23.1M193.25 11.5V24.1M193.75 12.1V23.5M194.25 10.3V25.3M194.75 7.0V28.6M195.25 9.3V26.3M195.75 8.0V27.6M196.25 11.2V24.4M196.75 10.8V24.8M197.25 12.3V23.3M197.75 13.3V22.3M198.25 12.1V23.5M198.75 13.4V22.2M199.25 17.1V18.5M199.75 17.1V18.5M200.25 17.1V18.5M200.75 15.2V20.4M201.25 12.0V23.6M201.75 12.1V23.5M202.25 12.7V22.9M202.75 13.1V22.5M203.25 12.8V22.8M203.75 10.1V25.5M204.25 11.3V24.3M204.75 9.7V25.9M205.25 8.5V27.1M205.75 8.3V27.3M206.25 10.5V25.1M206.75 12.3V23.3M207.25 12.5V23.1M207.75 12.4V23.2M208.25 14.4V21.2M208.75 17.1V18.5M209.25 17.1V18.5M209.75 17.1V18.5M210.25 17.1V18.5M210.75 17.1V18.5M211.25 17.1V18.5M211.75 17.1V18.5M212.25 8.9V26.7M212.75 9.3V26.3M213.25 6.4V29.2M213.75 11.8V23.8M214.25 13.3V22.3M214.75 12.8V22.8M215.25 17.1V18.5M215.75 17.1V18.5M216.25 15.0V20.6M216.75 13.8V21.8M217.25 11.1V24.5M217.75 13.2V22.4M218.25 13.3V22.3M218.75 14.0V21.6M219.25 13.2V22.4M219.75 9.8V25.8M220.25 6.4V29.2M220.75 6.4V29.2M221.25 8.0V27.6M221.75 11.9V23.7M222.25 12.3V23.3M222.75 12.2V23.4M223.25 11.0V24.6M223.75 8.1V27.5M224.25 8.7V26.9M224.75 8.2V27.4M225.25 8.8V26.8M225.75 13.4V22.2M226.25 13.6V22.0M226.75 11.2V24.4M227.25 10.4V25.2M227.75 9.3V26.3M228.25 10.2V25.4M228.75 10.8V24.8M229.25 13.0V22.6M229.75 13.1V22.5M230.25 13.9V21.7M230.75 12.4V23.2M231.25 12.4V23.2M231.75 15.2V20.4M232.25 17.1V18.5M232.75 17.1V18.5M233.25 17.1V18.5M233.75 17.1V18.5M234.25 13.5V22.1M234.75 10.9V24.7M235.25 12.2V23.4M235.75 11.7V23.9M236.25 11.9V23.7M236.75 12.7V22.9M237.25 12.1V23.5M237.75 9.5V26.1M238.25 9.5V26.1M238.75 10.8V24.8M239.25 12.1V23.5M239.75 12.3V23.3M240.25 13.8V21.8M240.75 13.7V21.9M241.25 9.9V25.7M241.75 11.4V24.2M242.25 11.5V24.1M242.75 11.4V24.2M243.25 13.9V21.7M243.75 15.7V19.9M244.25 17.1V18.5M244.75 17.1V18.5M245.25 17.1V18.5M245.75 17.1V18.5M246.25 17.1V18.5M246.75 13.6V22.0M247.25 12.4V23.2M247.75 12.2V23.4M248.25 10.8V24.8M248.75 12.7V22.9M249.25 13.1V22.5M249.75 10.3V25.3M250.25 8.0V27.6M250.75 9.4V26.2M251.25 6.4V29.2M251.75 10.2V25.4M252.25 9.8V25.8M252.75 12.5V23.1M253.25 12.0V23.6M253.75 12.0V23.6M254.25 10.8V24.8M254.75 6.4V29.2M255.25 9.4V26.2M255.75 11.9V23.7M256.25 13.2V22.4M256.75 13.8V21.8M257.25 15.6V20.0M257.75 17.1V18.5M258.25 17.1V18.5M258.75 17.1V18.5M259.25 17.1V18.5M259.75 14.5V21.1M260.25 9.2V26.4M260.75 8.0V27.6M261.25 8.1V27.5M261.75 12.1V23.5M262.25 11.1V24.5M262.75 12.6V23.0M263.25 9.6V26.0M263.75 9.4V26.2M264.25 10.2V25.4" stroke="#3f9b76" stroke-width="0.9" fill="none" opacity="1.0"/><path d="M0.25 37.4V46.6M0.75 34.0V50.0M1.25 34.3V49.7M1.75 31.6V52.4M2.25 36.7V47.3M2.75 37.5V46.5M3.25 34.6V49.4M3.75 36.3V47.7M4.25 35.2V48.8M4.75 35.8V48.2M5.25 41.3V42.7M5.75 41.3V42.7M6.25 41.3V42.7M6.75 41.3V42.7M7.25 41.3V42.7M7.75 38.5V45.5M8.25 33.4V50.6M8.75 35.2V48.8M9.25 31.8V52.2M9.75 34.8V49.2M10.25 37.5V46.5M10.75 33.9V50.1M11.25 34.9V49.1M11.75 32.7V51.3M12.25 32.0V52.0M12.75 30.6V53.4M13.25 35.1V48.9M13.75 34.4V49.6M14.25 37.0V47.0M14.75 34.3V49.7M15.25 35.2V48.8M15.75 35.0V49.0M16.25 37.6V46.4M16.75 40.4V43.6M17.25 41.3V42.7M17.75 41.3V42.7M18.25 37.7V46.3M18.75 37.5V46.5M19.25 36.8V47.2M19.75 35.7V48.3M20.25 38.3V45.7M20.75 36.6V47.4M21.25 35.7V48.3M21.75 32.9V51.1M22.25 31.8V52.2M22.75 33.1V50.9M23.25 35.6V48.4M23.75 36.7V47.3M24.25 35.9V48.1M24.75 34.3V49.7M25.25 33.0V51.0M25.75 34.9V49.1M26.25 30.6V53.4M26.75 31.7V52.3M27.25 35.4V48.6M27.75 36.3V47.7M28.25 36.3V47.7M28.75 34.7V49.3M29.25 33.4V50.6M29.75 33.5V50.5M30.25 35.4V48.6M30.75 37.5V46.5M31.25 39.4V44.6M31.75 41.3V42.7M32.25 41.3V42.7M32.75 41.3V42.7M33.25 41.3V42.7M33.75 37.1V46.9M34.25 35.8V48.2M34.75 33.1V50.9M35.25 33.1V50.9M35.75 34.8V49.2M36.25 37.5V46.5M36.75 33.7V50.3M37.25 33.3V50.7M37.75 33.0V51.0M38.25 33.0V51.0M38.75 37.5V46.5M39.25 39.7V44.3M39.75 41.3V42.7M40.25 37.6V46.4M40.75 37.4V46.6M41.25 33.2V50.8M41.75 33.1V50.9M42.25 35.8V48.2M42.75 37.1V46.9M43.25 34.7V49.3M43.75 32.0V52.0M44.25 30.6V53.4M44.75 32.2V51.8M45.25 30.6V53.4M45.75 34.2V49.8M46.25 34.8V49.2M46.75 34.3V49.7M47.25 31.9V52.1M47.75 32.5V51.5M48.25 32.5V51.5M48.75 31.3V52.7M49.25 34.8V49.2M49.75 36.9V47.1M50.25 39.5V44.5M50.75 41.3V42.7M51.25 41.3V42.7M51.75 38.5V45.5M52.25 35.8V48.2M52.75 37.1V46.9M53.25 34.7V49.3M53.75 36.1V47.9M54.25 37.3V46.7M54.75 36.0V48.0M55.25 33.4V50.6M55.75 34.4V49.6M56.25 34.6V49.4M56.75 37.0V47.0M57.25 39.1V44.9M57.75 41.3V42.7M58.25 41.3V42.7M58.75 39.7V44.3M59.25 35.5V48.5M59.75 34.1V49.9M60.25 34.4V49.6M60.75 36.4V47.6M61.25 37.5V46.5M61.75 36.5V47.5M62.25 34.3V49.7M62.75 31.1V52.9M63.25 30.6V53.4M63.75 32.8V51.2M64.25 33.7V50.3M64.75 33.9V50.1M65.25 36.3V47.7M65.75 34.0V50.0M66.25 31.0V53.0M66.75 30.6V53.4M67.25 30.6V53.4M67.75 33.3V50.7M68.25 32.2V51.8M68.75 33.8V50.2M69.25 33.2V50.8M69.75 31.7V52.3M70.25 30.6V53.4M70.75 33.6V50.4M71.25 35.4V48.6M71.75 33.3V50.7M72.25 36.8V47.2M72.75 36.8V47.2M73.25 38.0V46.0M73.75 36.5V47.5M74.25 38.4V45.6M74.75 41.3V42.7M75.25 41.3V42.7M75.75 41.3V42.7M76.25 41.3V42.7M76.75 41.3V42.7M77.25 40.1V43.9M77.75 37.5V46.5M78.25 35.8V48.2M78.75 34.7V49.3M79.25 36.3V47.7M79.75 37.3V46.7M80.25 37.5V46.5M80.75 33.9V50.1M81.25 30.9V53.1M81.75 30.6V53.4M82.25 31.5V52.5M82.75 34.7V49.3M83.25 35.8V48.2M83.75 35.3V48.7M84.25 35.1V48.9M84.75 34.6V49.4M85.25 32.2V51.8M85.75 36.3V47.7M86.25 36.6V47.4M86.75 38.4V45.6M87.25 39.2V44.8M87.75 39.3V44.7M88.25 41.3V42.7M88.75 41.3V42.7M89.25 38.1V45.9M89.75 34.2V49.8M90.25 32.7V51.3M90.75 34.5V49.5M91.25 36.0V48.0M91.75 35.3V48.7M92.25 34.7V49.3M92.75 34.1V49.9M93.25 30.6V53.4M93.75 32.8V51.2M94.25 34.2V49.8M94.75 34.1V49.9M95.25 35.4V48.6M95.75 35.2V48.8M96.25 33.1V50.9M96.75 33.0V51.0M97.25 33.5V50.5M97.75 35.6V48.4M98.25 39.8V44.2M98.75 41.3V42.7M99.25 39.6V44.4M99.75 34.2V49.8M100.25 34.2V49.8M100.75 32.8V51.2M101.25 33.3V50.7M101.75 33.8V50.2M102.25 37.1V46.9M102.75 33.6V50.4M103.25 30.6V53.4M103.75 30.6V53.4M104.25 31.6V52.4M104.75 34.2V49.8M105.25 37.4V46.6M105.75 36.7V47.3M106.25 37.3V46.7M106.75 38.2V45.8M107.25 41.3V42.7M107.75 41.3V42.7M108.25 38.5V45.5M108.75 36.1V47.9M109.25 31.8V52.2M109.75 35.8V48.2M110.25 37.1V46.9M110.75 35.8V48.2M111.25 36.6V47.4M111.75 36.9V47.1M112.25 34.8V49.2M112.75 41.3V42.7M113.25 41.3V42.7M113.75 41.3V42.7M114.25 41.3V42.7M114.75 41.3V42.7M115.25 41.3V42.7M115.75 39.4V44.6M116.25 35.5V48.5M116.75 35.1V48.9M117.25 33.2V50.8M117.75 37.6V46.4M118.25 38.1V45.9M118.75 35.0V49.0M119.25 36.0V48.0M119.75 33.8V50.2M120.25 31.1V52.9M120.75 33.0V51.0M121.25 34.1V49.9M121.75 35.2V48.8M122.25 35.4V48.6M122.75 34.2V49.8M123.25 31.8V52.2M123.75 32.3V51.7M124.25 34.7V49.3M124.75 34.8V49.2M125.25 39.1V44.9M125.75 40.2V43.8M126.25 41.3V42.7M126.75 41.3V42.7M127.25 41.3V42.7M127.75 36.8V47.2M128.25 33.9V50.1M128.75 33.5V50.5M129.25 34.9V49.1M129.75 34.6V49.4M130.25 36.1V47.9M130.75 34.6V49.4M131.25 32.3V51.7M131.75 30.6V53.4M132.25 34.7V49.3M132.75 41.3V42.7M133.25 41.3V42.7M133.75 37.2V46.8M134.25 36.8V47.2M134.75 35.7V48.3M135.25 34.7V49.3M135.75 36.4V47.6M136.25 38.4V45.6M136.75 35.0V49.0M137.25 33.6V50.4M137.75 33.9V50.1M138.25 32.9V51.1M138.75 36.9V47.1M139.25 38.7V45.3M139.75 41.3V42.7M140.25 41.3V42.7M140.75 41.3V42.7M141.25 41.3V42.7M141.75 41.3V42.7M142.25 39.0V45.0M142.75 37.2V46.8M143.25 35.2V48.8M143.75 33.6V50.4M144.25 36.0V48.0M144.75 36.9V47.1M145.25 36.7V47.3M145.75 35.7V48.3M146.25 30.6V53.4M146.75 32.0V52.0M147.25 33.9V50.1M147.75 32.4V51.6M148.25 33.9V50.1M148.75 36.6V47.4M149.25 34.4V49.6M149.75 32.0V52.0M150.25 30.6V53.4M150.75 31.5V52.5M151.25 32.9V51.1M151.75 33.4V50.6M152.25 37.6V46.4M152.75 34.5V49.5M153.25 33.3V50.7M153.75 31.2V52.8M154.25 30.6V53.4M154.75 33.6V50.4M155.25 34.1V49.9M155.75 36.6V47.4M156.25 37.5V46.5M156.75 38.2V45.8M157.25 38.2V45.8M157.75 41.3V42.7M158.25 41.3V42.7M158.75 41.3V42.7M159.25 41.3V42.7M159.75 41.3V42.7M160.25 41.3V42.7M160.75 39.3V44.7M161.25 36.5V47.5M161.75 36.4V47.6M162.25 34.4V49.6M162.75 35.2V48.8M163.25 35.8V48.2M163.75 36.2V47.8M164.25 33.7V50.3M164.75 33.2V50.8M165.25 30.6V53.4M165.75 33.6V50.4M166.25 33.4V50.6M166.75 34.4V49.6M167.25 35.6V48.4M167.75 32.4V51.6M168.25 31.5V52.5M168.75 30.6V53.4M169.25 32.2V51.8M169.75 30.9V53.1M170.25 34.4V49.6M170.75 38.0V46.0M171.25 36.4V47.6M171.75 34.6V49.4M172.25 35.8V48.2M172.75 37.5V46.5M173.25 37.9V46.1M173.75 41.3V42.7M174.25 41.3V42.7M174.75 41.3V42.7M175.25 41.3V42.7M175.75 38.9V45.1M176.25 31.8V52.2M176.75 32.4V51.6M177.25 34.7V49.3M177.75 33.6V50.4M178.25 35.4V48.6M178.75 33.7V50.3M179.25 32.9V51.1M179.75 36.2V47.8M180.25 41.3V42.7M180.75 41.3V42.7M181.25 41.3V42.7M181.75 41.3V42.7M182.25 37.5V46.5M182.75 35.9V48.1M183.25 30.6V53.4M183.75 33.8V50.2M184.25 34.6V49.4M184.75 34.8V49.2M185.25 32.7V51.3M185.75 32.0V52.0M186.25 31.9V52.1M186.75 35.1V48.9M187.25 36.4V47.6M187.75 41.3V42.7M188.25 41.3V42.7M188.75 41.3V42.7M189.25 41.3V42.7M189.75 41.3V42.7M190.25 41.3V42.7M190.75 39.9V44.1M191.25 36.6V47.4M191.75 34.8V49.2M192.25 33.4V50.6M192.75 36.7V47.3M193.25 35.7V48.3M193.75 36.3V47.7M194.25 34.5V49.5M194.75 31.2V52.8M195.25 33.5V50.5M195.75 32.2V51.8M196.25 35.4V48.6M196.75 35.0V49.0M197.25 36.5V47.5M197.75 37.5V46.5M198.25 36.3V47.7M198.75 37.6V46.4M199.25 41.3V42.7M199.75 41.3V42.7M200.25 41.3V42.7M200.75 39.4V44.6M201.25 36.2V47.8M201.75 36.3V47.7M202.25 36.9V47.1M202.75 37.3V46.7M203.25 37.0V47.0M203.75 34.3V49.7M204.25 35.5V48.5M204.75 33.9V50.1M205.25 32.7V51.3M205.75 32.5V51.5M206.25 34.7V49.3M206.75 36.5V47.5M207.25 36.7V47.3M207.75 36.6V47.4M208.25 38.6V45.4M208.75 41.3V42.7M209.25 41.3V42.7M209.75 41.3V42.7M210.25 41.3V42.7M210.75 41.3V42.7M211.25 41.3V42.7M211.75 41.3V42.7M212.25 33.1V50.9M212.75 33.5V50.5M213.25 30.6V53.4M213.75 36.0V48.0M214.25 37.5V46.5M214.75 37.0V47.0M215.25 41.3V42.7M215.75 41.3V42.7M216.25 39.2V44.8M216.75 38.0V46.0M217.25 35.3V48.7M217.75 37.4V46.6M218.25 37.5V46.5M218.75 38.2V45.8M219.25 37.4V46.6M219.75 34.0V50.0M220.25 30.6V53.4M220.75 30.6V53.4M221.25 32.2V51.8M221.75 36.1V47.9M222.25 36.5V47.5M222.75 36.4V47.6M223.25 35.2V48.8M223.75 32.3V51.7M224.25 32.9V51.1M224.75 32.4V51.6M225.25 33.0V51.0M225.75 37.6V46.4M226.25 37.8V46.2M226.75 35.4V48.6M227.25 34.6V49.4M227.75 33.5V50.5M228.25 34.4V49.6M228.75 35.0V49.0M229.25 37.2V46.8M229.75 37.3V46.7M230.25 38.1V45.9M230.75 36.6V47.4M231.25 36.6V47.4M231.75 39.4V44.6M232.25 41.3V42.7M232.75 41.3V42.7M233.25 41.3V42.7M233.75 41.3V42.7M234.25 37.7V46.3M234.75 35.1V48.9M235.25 36.4V47.6M235.75 35.9V48.1M236.25 36.1V47.9M236.75 36.9V47.1M237.25 36.3V47.7M237.75 33.7V50.3M238.25 33.7V50.3M238.75 35.0V49.0M239.25 36.3V47.7M239.75 36.5V47.5M240.25 38.0V46.0M240.75 37.9V46.1M241.25 34.1V49.9M241.75 35.6V48.4M242.25 35.7V48.3M242.75 35.6V48.4M243.25 38.1V45.9M243.75 39.9V44.1M244.25 41.3V42.7M244.75 41.3V42.7M245.25 41.3V42.7M245.75 41.3V42.7M246.25 41.3V42.7M246.75 37.8V46.2M247.25 36.6V47.4M247.75 36.4V47.6M248.25 35.0V49.0M248.75 36.9V47.1M249.25 37.3V46.7M249.75 34.5V49.5M250.25 32.2V51.8M250.75 33.6V50.4M251.25 30.6V53.4M251.75 34.4V49.6M252.25 34.0V50.0M252.75 36.7V47.3M253.25 36.2V47.8M253.75 36.2V47.8M254.25 35.0V49.0M254.75 30.6V53.4M255.25 33.6V50.4M255.75 36.1V47.9M256.25 37.4V46.6M256.75 38.0V46.0M257.25 39.8V44.2M257.75 41.3V42.7M258.25 41.3V42.7M258.75 41.3V42.7M259.25 41.3V42.7M259.75 38.7V45.3M260.25 33.4V50.6M260.75 32.2V51.8M261.25 32.3V51.7M261.75 36.3V47.7M262.25 35.3V48.7M262.75 36.8V47.2M263.25 33.8V50.2M263.75 33.6V50.4M264.25 34.4V49.6" stroke="#3f9b76" stroke-width="0.9" fill="none" opacity="1.0"/><path d="M0.25 17.8V17.8M2.35 10.2V25.4M4.45 17.8V17.8M6.55 17.8V17.8M8.65 17.8V17.8M10.75 17.8V17.8M12.85 6.2V29.4M14.95 17.8V17.8M17.05 17.8V17.8M19.15 17.8V17.8M21.25 17.8V17.8M23.35 17.8V17.8M25.45 17.8V17.8M27.55 17.8V17.8M29.65 9.5V26.1M31.75 17.8V17.8M33.85 11.8V23.8M35.95 17.8V17.8M38.05 17.8V17.8M40.15 17.8V17.8M42.25 17.8V17.8M44.35 6.2V29.4M46.45 17.8V17.8M48.55 6.4V29.2M50.65 17.8V17.8M52.75 10.2V25.4M54.85 17.8V17.8M56.95 17.8V17.8M59.05 17.8V17.8M61.15 17.8V17.8M63.25 6.2V29.4M65.35 10.0V25.6M67.45 17.8V17.8M69.55 8.4V27.2M71.65 9.4V26.2M73.75 11.8V23.8M75.85 17.8V17.8M77.95 11.8V23.8M80.05 12.6V23.0M82.15 6.8V28.8M84.25 10.7V24.9M86.35 17.8V17.8M88.45 17.8V17.8M90.55 8.2V27.4M92.65 6.2V29.4M94.75 17.8V17.8M96.85 17.8V17.8M98.95 17.8V17.8M101.05 8.4V27.2M103.15 17.8V17.8M105.25 17.8V17.8M107.35 17.8V17.8M109.45 7.4V28.2M111.55 17.8V17.8M113.65 17.8V17.8M115.75 15.5V20.1M117.85 11.6V24.0M119.95 17.8V17.8M122.05 11.7V23.9M124.15 17.8V17.8M126.25 17.8V17.8M128.35 6.2V29.4M130.45 17.8V17.8M132.55 17.8V17.8M134.65 17.8V17.8M136.75 11.3V24.3M138.85 12.5V23.1M140.95 17.8V17.8M143.05 17.8V17.8M145.15 11.9V23.7M147.25 6.2V29.4M149.35 7.9V27.7M151.45 7.8V27.8M153.55 6.6V29.0M155.65 12.7V22.9M157.75 17.8V17.8M159.85 17.8V17.8M161.95 9.8V25.8M164.05 17.8V17.8M166.15 17.8V17.8M168.25 6.2V29.4M170.35 17.8V17.8M172.45 17.8V17.8M174.55 17.8V17.8M176.65 6.2V29.4M178.75 10.4V25.2M180.85 17.8V17.8M182.95 7.0V28.6M185.05 10.0V25.6M187.15 17.8V17.8M189.25 17.8V17.8M191.35 17.8V17.8M193.45 12.0V23.6M195.55 17.8V17.8M197.65 12.5V23.1M199.75 17.8V17.8M201.85 17.8V17.8M203.95 17.8V17.8M206.05 9.1V26.5M208.15 17.8V17.8M210.25 17.8V17.8M212.35 7.7V27.9M214.45 12.2V23.4M216.55 13.2V22.4M218.65 17.8V17.8M220.75 6.3V29.3M222.85 10.7V24.9M224.95 7.0V28.6M227.05 9.1V26.5M229.15 11.7V23.9M231.25 17.8V17.8M233.35 17.8V17.8M235.45 11.2V24.4M237.55 9.4V26.2M239.65 11.1V24.5M241.75 9.2V26.4M243.85 17.8V17.8M245.95 17.8V17.8M248.05 9.7V25.9M250.15 17.8V17.8M252.25 17.8V17.8M254.35 6.5V29.1M256.45 14.0V21.6M258.55 17.8V17.8M260.65 17.8V17.8M262.75 17.8V17.8" stroke="#7cc9a6" stroke-width="0.5" fill="none" opacity="0.7"/><path d="M0.25 42.0V42.0M2.35 34.4V49.6M4.45 42.0V42.0M6.55 42.0V42.0M8.65 42.0V42.0M10.75 42.0V42.0M12.85 30.4V53.6M14.95 42.0V42.0M17.05 42.0V42.0M19.15 42.0V42.0M21.25 42.0V42.0M23.35 42.0V42.0M25.45 42.0V42.0M27.55 42.0V42.0M29.65 33.7V50.3M31.75 42.0V42.0M33.85 36.0V48.0M35.95 42.0V42.0M38.05 42.0V42.0M40.15 42.0V42.0M42.25 42.0V42.0M44.35 30.4V53.6M46.45 42.0V42.0M48.55 30.6V53.4M50.65 42.0V42.0M52.75 34.4V49.6M54.85 42.0V42.0M56.95 42.0V42.0M59.05 42.0V42.0M61.15 42.0V42.0M63.25 30.4V53.6M65.35 34.2V49.8M67.45 42.0V42.0M69.55 32.6V51.4M71.65 33.6V50.4M73.75 36.0V48.0M75.85 42.0V42.0M77.95 36.0V48.0M80.05 36.8V47.2M82.15 31.0V53.0M84.25 34.9V49.1M86.35 42.0V42.0M88.45 42.0V42.0M90.55 32.4V51.6M92.65 30.4V53.6M94.75 42.0V42.0M96.85 42.0V42.0M98.95 42.0V42.0M101.05 32.6V51.4M103.15 42.0V42.0M105.25 42.0V42.0M107.35 42.0V42.0M109.45 31.6V52.4M111.55 42.0V42.0M113.65 42.0V42.0M115.75 39.7V44.3M117.85 35.8V48.2M119.95 42.0V42.0M122.05 35.9V48.1M124.15 42.0V42.0M126.25 42.0V42.0M128.35 30.4V53.6M130.45 42.0V42.0M132.55 42.0V42.0M134.65 42.0V42.0M136.75 35.5V48.5M138.85 36.7V47.3M140.95 42.0V42.0M143.05 42.0V42.0M145.15 36.1V47.9M147.25 30.4V53.6M149.35 32.1V51.9M151.45 32.0V52.0M153.55 30.8V53.2M155.65 36.9V47.1M157.75 42.0V42.0M159.85 42.0V42.0M161.95 34.0V50.0M164.05 42.0V42.0M166.15 42.0V42.0M168.25 30.4V53.6M170.35 42.0V42.0M172.45 42.0V42.0M174.55 42.0V42.0M176.65 30.4V53.6M178.75 34.6V49.4M180.85 42.0V42.0M182.95 31.2V52.8M185.05 34.2V49.8M187.15 42.0V42.0M189.25 42.0V42.0M191.35 42.0V42.0M193.45 36.2V47.8M195.55 42.0V42.0M197.65 36.7V47.3M199.75 42.0V42.0M201.85 42.0V42.0M203.95 42.0V42.0M206.05 33.3V50.7M208.15 42.0V42.0M210.25 42.0V42.0M212.35 31.9V52.1M214.45 36.4V47.6M216.55 37.4V46.6M218.65 42.0V42.0M220.75 30.5V53.5M222.85 34.9V49.1M224.95 31.2V52.8M227.05 33.3V50.7M229.15 35.9V48.1M231.25 42.0V42.0M233.35 42.0V42.0M235.45 35.4V48.6M237.55 33.6V50.4M239.65 35.3V48.7M241.75 33.4V50.6M243.85 42.0V42.0M245.95 42.0V42.0M248.05 33.9V50.1M250.15 42.0V42.0M252.25 42.0V42.0M254.35 30.7V53.3M256.45 38.2V45.8M258.55 42.0V42.0M260.65 42.0V42.0M262.75 42.0V42.0" stroke="#7cc9a6" stroke-width="0.5" fill="none" opacity="0.7"/><rect x="0" y="0" width="264.5" height="6.5" fill="#183b2b"/><rect x="0" y="23.8" width="264.5" height="6.0" fill="#0f2a1e" opacity="0.45"/><rect x="0" y="17.5" width="264.5" height="0.6" fill="#7fc0a0" opacity="0.5"/><rect x="0" y="41.8" width="264.5" height="0.6" fill="#7fc0a0" opacity="0.5"/><rect x="0" y="23.1" width="264.5" height="1.0" fill="#a8d0b8"/><rect x="0" y="29.6" width="264.5" height="1.0" fill="#b0d4c0"/><rect x="0" y="55" width="264.5" height="54" fill="#1c2119"/><path d="M0.25 68.5V74.5M0.75 67.8V75.2M1.25 67.6V75.4M1.75 66.4V76.6M2.25 67.0V76.0M2.75 66.9V76.1M3.25 65.7V77.3M3.75 62.9V80.1M4.25 66.3V76.7M4.75 61.6V81.4M5.25 66.0V77.0M5.75 66.0V77.0M6.25 65.9V77.1M6.75 66.7V76.3M7.25 67.7V75.3M7.75 64.0V79.0M8.25 64.6V78.4M8.75 68.4V74.6M9.25 67.0V76.0M9.75 63.9V79.1M10.25 67.2V75.8M10.75 62.9V80.1M11.25 66.7V76.3M11.75 63.8V79.2M12.25 61.8V81.2M12.75 61.5V81.5M13.25 66.4V76.6M13.75 65.6V77.4M14.25 66.8V76.2M14.75 63.5V79.5M15.25 62.2V80.8M15.75 67.8V75.2M16.25 68.6V74.4M16.75 68.5V74.5M17.25 67.4V75.6M17.75 66.9V76.1M18.25 66.3V76.7M18.75 66.9V76.1M19.25 66.7V76.3M19.75 65.8V77.2M20.25 62.4V80.6M20.75 60.1V82.9M21.25 65.7V77.3M21.75 60.6V82.4M22.25 61.2V81.8M22.75 66.8V76.2M23.25 67.5V75.5M23.75 67.9V75.1M24.25 67.8V75.2M24.75 64.3V78.7M25.25 68.1V74.9M25.75 65.5V77.5M26.25 62.2V80.8M26.75 63.7V79.3M27.25 61.9V81.1M27.75 66.0V77.0M28.25 65.5V77.5M28.75 65.2V77.8M29.25 60.2V82.8M29.75 60.3V82.7M30.25 63.1V79.9M30.75 66.2V76.8M31.25 66.0V77.0M31.75 67.2V75.8M32.25 62.7V80.3M32.75 67.9V75.1M33.25 68.8V74.2M33.75 68.0V75.0M34.25 67.7V75.3M34.75 63.7V79.3M35.25 61.7V81.3M35.75 65.7V77.3M36.25 66.5V76.5M36.75 60.9V82.1M37.25 65.7V77.3M37.75 65.8V77.2M38.25 65.6V77.4M38.75 66.7V76.3M39.25 66.8V76.2M39.75 66.8V76.2M40.25 61.7V81.3M40.75 68.3V74.7M41.25 64.6V78.4M41.75 68.2V74.8M42.25 67.8V75.2M42.75 67.6V75.4M43.25 66.6V76.4M43.75 61.9V81.1M44.25 65.9V77.1M44.75 66.5V76.5M45.25 65.5V77.5M45.75 66.1V76.9M46.25 61.9V81.1M46.75 65.6V77.4M47.25 65.6V77.4M47.75 66.6V76.4M48.25 61.9V81.1M48.75 67.1V75.9M49.25 67.9V75.1M49.75 68.5V74.5M50.25 68.4V74.6M50.75 62.5V80.5M51.25 67.3V75.7M51.75 64.3V78.7M52.25 61.4V81.6M52.75 63.6V79.4M53.25 61.1V81.9M53.75 65.4V77.6M54.25 65.8V77.2M54.75 60.8V82.2M55.25 65.4V77.6M55.75 66.3V76.7M56.25 66.5V76.5M56.75 67.1V75.9M57.25 67.3V75.7M57.75 67.9V75.1M58.25 68.5V74.5M58.75 63.1V79.9M59.25 62.7V80.3M59.75 66.5V76.5M60.25 66.2V76.8M60.75 66.3V76.7M61.25 66.4V76.6M61.75 63.4V79.6M62.25 65.9V77.1M62.75 65.7V77.3M63.25 65.5V77.5M63.75 66.6V76.4M64.25 61.3V81.7M64.75 66.6V76.4M65.25 67.6V75.4M65.75 68.0V75.0M66.25 65.0V78.0M66.75 68.1V74.9M67.25 67.3V75.7M67.75 67.5V75.5M68.25 66.2V76.8M68.75 62.5V80.5M69.25 65.5V77.5M69.75 65.6V77.4M70.25 65.3V77.7M70.75 66.4V76.6M71.25 63.0V80.0M71.75 62.9V80.1M72.25 66.3V76.7M72.75 66.4V76.6M73.25 67.6V75.4M73.75 67.5V75.5M74.25 64.1V78.9M74.75 64.6V78.4M75.25 63.1V79.9M75.75 61.7V81.3M76.25 66.9V76.1M76.75 63.1V79.9M77.25 63.1V79.9M77.75 66.2V76.8M78.25 65.9V77.1M78.75 65.3V77.7M79.25 62.7V80.3M79.75 65.9V77.1M80.25 66.5V76.5M80.75 66.0V77.0M81.25 66.3V76.7M81.75 66.9V76.1M82.25 67.5V75.5M82.75 68.4V74.6M83.25 68.3V74.7M83.75 62.4V80.6M84.25 67.0V76.0M84.75 66.9V76.1M85.25 66.1V76.9M85.75 66.9V76.1M86.25 62.7V80.3M86.75 61.3V81.7M87.25 66.2V76.8M87.75 65.9V77.1M88.25 60.4V82.6M88.75 66.9V76.1M89.25 67.2V75.8M89.75 67.0V76.0M90.25 62.8V80.2M90.75 68.1V74.9M91.25 68.9V74.1M91.75 68.1V74.9M92.25 67.8V75.2M92.75 67.6V75.4M93.25 62.6V80.4M93.75 67.0V76.0M94.25 66.7V76.3M94.75 62.0V81.0M95.25 65.8V77.2M95.75 65.9V77.1M96.25 65.8V77.2M96.75 66.2V76.8M97.25 66.3V76.7M97.75 66.5V76.5M98.25 67.0V76.0M98.75 67.6V75.4M99.25 65.6V77.4M99.75 68.2V74.8M100.25 68.0V75.0M100.75 63.8V79.2M101.25 66.5V76.5M101.75 65.8V77.2M102.25 66.9V76.1M102.75 66.1V76.9M103.25 62.2V80.8M103.75 65.5V77.5M104.25 66.1V76.9M104.75 66.2V76.8M105.25 63.0V80.0M105.75 62.8V80.2M106.25 61.8V81.2M106.75 67.5V75.5M107.25 64.8V78.2M107.75 68.2V74.8M108.25 68.6V74.4M108.75 68.1V74.9M109.25 66.9V76.1M109.75 67.3V75.7M110.25 61.9V81.1M110.75 65.8V77.2M111.25 66.2V76.8M111.75 63.1V79.9M112.25 61.9V81.1M112.75 66.0V77.0M113.25 66.3V76.7M113.75 65.7V77.3M114.25 66.8V76.2M114.75 62.9V80.1M115.25 67.2V75.8M115.75 68.1V74.9M116.25 68.4V74.6M116.75 68.0V75.0M117.25 66.9V76.1M117.75 67.5V75.5M118.25 67.2V75.8M118.75 62.2V80.8M119.25 63.2V79.8M119.75 66.3V76.7M120.25 65.8V77.2M120.75 61.4V81.6M121.25 66.0V77.0M121.75 65.8V77.2M122.25 66.0V77.0M122.75 66.4V76.6M123.25 66.7V76.3M123.75 67.5V75.5M124.25 68.5V74.5M124.75 68.0V75.0M125.25 68.1V74.9M125.75 66.7V76.3M126.25 67.3V75.7M126.75 66.9V76.1M127.25 66.0V77.0M127.75 63.8V79.2M128.25 66.3V76.7M128.75 63.6V79.4M129.25 66.4V76.6M129.75 65.9V77.1M130.25 66.6V76.4M130.75 66.8V76.2M131.25 67.0V76.0M131.75 66.9V76.1M132.25 68.0V75.0M132.75 68.4V74.6M133.25 63.4V79.6M133.75 67.2V75.8M134.25 67.5V75.5M134.75 63.6V79.4M135.25 66.1V76.9M135.75 66.0V77.0M136.25 66.7V76.3M136.75 65.3V77.7M137.25 61.3V81.7M137.75 66.0V77.0M138.25 65.6V77.4M138.75 66.5V76.5M139.25 66.3V76.7M139.75 67.1V75.9M140.25 67.9V75.1M140.75 68.4V74.6M141.25 68.7V74.3M141.75 68.0V75.0M142.25 66.9V76.1M142.75 67.0V76.0M143.25 66.4V76.6M143.75 65.5V77.5M144.25 62.6V80.4M144.75 65.8V77.2M145.25 66.0V77.0M145.75 66.3V76.7M146.25 65.3V77.7M146.75 61.1V81.9M147.25 67.0V76.0M147.75 66.6V76.4M148.25 66.9V76.1M148.75 68.2V74.8M149.25 63.2V79.8M149.75 64.4V78.6M150.25 67.4V75.6M150.75 67.4V75.6M151.25 63.8V79.2M151.75 65.9V77.1M152.25 61.5V81.5M152.75 65.7V77.3M153.25 65.8V77.2M153.75 65.6V77.4M154.25 65.3V77.7M154.75 66.1V76.9M155.25 65.6V77.4M155.75 60.8V82.2M156.25 66.9V76.1M156.75 67.8V75.2M157.25 68.3V74.7M157.75 68.8V74.2M158.25 65.2V77.8M158.75 67.4V75.6M159.25 66.4V76.6M159.75 66.4V76.6M160.25 66.6V76.4M160.75 63.4V79.6M161.25 65.8V77.2M161.75 66.3V76.7M162.25 65.6V77.4M162.75 65.6V77.4M163.25 62.8V80.2M163.75 61.3V81.7M164.25 62.1V80.9M164.75 63.3V79.7M165.25 67.6V75.4M165.75 68.7V74.3M166.25 68.4V74.6M166.75 64.7V78.3M167.25 63.7V79.3M167.75 66.3V76.7M168.25 66.3V76.7M168.75 66.1V76.9M169.25 62.6V80.4M169.75 65.2V77.8M170.25 65.4V77.6M170.75 62.4V80.6M171.25 63.0V80.0M171.75 61.5V81.5M172.25 66.8V76.2M172.75 64.9V78.1M173.25 63.9V79.1M173.75 67.7V75.3M174.25 68.7V74.3M174.75 64.5V78.5M175.25 63.8V79.2M175.75 64.3V78.7M176.25 66.1V76.9M176.75 66.5V76.5M177.25 66.8V76.2M177.75 65.9V77.1M178.25 65.9V77.1M178.75 65.1V77.9M179.25 61.0V82.0M179.75 66.6V76.4M180.25 66.9V76.1M180.75 66.1V76.9M181.25 66.4V76.6M181.75 66.4V76.6M182.25 66.8V76.2M182.75 65.0V78.0M183.25 64.1V78.9M183.75 61.7V81.3M184.25 66.8V76.2M184.75 66.4V76.6M185.25 65.8V77.2M185.75 61.2V81.8M186.25 61.6V81.4M186.75 67.0V76.0M187.25 66.7V76.3M187.75 61.7V81.3M188.25 66.7V76.3M188.75 66.0V77.0M189.25 66.7V76.3M189.75 66.2V76.8M190.25 66.9V76.1M190.75 62.7V80.3M191.25 67.1V75.9M191.75 66.9V76.1M192.25 66.4V76.6M192.75 63.2V79.8M193.25 66.1V76.9M193.75 66.4V76.6M194.25 66.3V76.7M194.75 66.0V77.0M195.25 61.6V81.4M195.75 66.3V76.7M196.25 66.7V76.3M196.75 65.9V77.1M197.25 66.2V76.8M197.75 67.0V76.0M198.25 63.0V80.0M198.75 66.9V76.1M199.25 67.6V75.4M199.75 66.8V76.2M200.25 67.4V75.6M200.75 67.1V75.9M201.25 66.6V76.4M201.75 66.9V76.1M202.25 67.0V76.0M202.75 62.9V80.1M203.25 66.4V76.6M203.75 65.5V77.5M204.25 66.7V76.3M204.75 62.4V80.6M205.25 66.7V76.3M205.75 63.7V79.3M206.25 66.6V76.4M206.75 66.7V76.3M207.25 66.6V76.4M207.75 66.7V76.3M208.25 67.3V75.7M208.75 66.7V76.3M209.25 62.2V80.8M209.75 61.1V81.9M210.25 63.1V79.9M210.75 64.1V78.9M211.25 66.6V76.4M211.75 66.6V76.4M212.25 66.0V77.0M212.75 66.9V76.1M213.25 66.1V76.9M213.75 67.2V75.8M214.25 64.5V78.5M214.75 66.5V76.5M215.25 67.1V75.9M215.75 67.6V75.4M216.25 67.3V75.7M216.75 62.1V80.9M217.25 66.4V76.6M217.75 67.0V76.0M218.25 62.1V80.9M218.75 63.5V79.5M219.25 66.7V76.3M219.75 62.7V80.3M220.25 62.1V80.9M220.75 65.7V77.3M221.25 66.1V76.9M221.75 63.8V79.2M222.25 66.7V76.3M222.75 64.2V78.8M223.25 63.5V79.5M223.75 63.5V79.5M224.25 67.5V75.5M224.75 67.1V75.9M225.25 62.4V80.6M225.75 67.3V75.7M226.25 67.1V75.9M226.75 62.8V80.2M227.25 61.2V81.8M227.75 66.5V76.5M228.25 66.6V76.4M228.75 66.3V76.7M229.25 66.5V76.5M229.75 61.9V81.1M230.25 62.4V80.6M230.75 60.9V82.1M231.25 66.3V76.7M231.75 67.0V76.0M232.25 62.9V80.1M232.75 62.0V81.0M233.25 67.6V75.4M233.75 67.1V75.9M234.25 66.5V76.5M234.75 66.0V77.0M235.25 66.6V76.4M235.75 66.0V77.0M236.25 65.6V77.4M236.75 66.1V76.9M237.25 66.5V76.5M237.75 63.1V79.9M238.25 62.3V80.7M238.75 67.1V75.9M239.25 61.8V81.2M239.75 66.9V76.1M240.25 67.5V75.5M240.75 64.5V78.5M241.25 66.6V76.4M241.75 67.2V75.8M242.25 66.9V76.1M242.75 66.1V76.9M243.25 62.6V80.4M243.75 65.9V77.1M244.25 66.0V77.0M244.75 67.0V76.0M245.25 65.6V77.4M245.75 66.4V76.6M246.25 65.8V77.2M246.75 66.2V76.8M247.25 64.1V78.9M247.75 67.3V75.7M248.25 66.9V76.1M248.75 64.8V78.2M249.25 64.7V78.3M249.75 66.6V76.4M250.25 61.9V81.1M250.75 64.6V78.4M251.25 60.7V82.3M251.75 67.0V76.0M252.25 66.2V76.8M252.75 66.6V76.4M253.25 66.5V76.5M253.75 66.9V76.1M254.25 62.2V80.8M254.75 65.7V77.3M255.25 62.8V80.2M255.75 66.8V76.2M256.25 66.6V76.4M256.75 62.2V80.8M257.25 67.2V75.8M257.75 67.4V75.6M258.25 67.4V75.6M258.75 66.4V76.6M259.25 62.2V80.8M259.75 67.2V75.8M260.25 65.9V77.1M260.75 65.9V77.1M261.25 61.8V81.2M261.75 61.4V81.6M262.25 65.7V77.3M262.75 63.3V79.7M263.25 66.3V76.7M263.75 66.4V76.6M264.25 66.2V76.8" stroke="#b6f000" stroke-width="0.9" fill="none" opacity="1.0"/><path d="M0.25 93.5V99.5M0.75 92.8V100.2M1.25 92.6V100.4M1.75 91.4V101.6M2.25 92.0V101.0M2.75 91.9V101.1M3.25 90.7V102.3M3.75 87.9V105.1M4.25 91.3V101.7M4.75 86.6V106.4M5.25 91.0V102.0M5.75 91.0V102.0M6.25 90.9V102.1M6.75 91.7V101.3M7.25 92.7V100.3M7.75 89.0V104.0M8.25 89.6V103.4M8.75 93.4V99.6M9.25 92.0V101.0M9.75 88.9V104.1M10.25 92.2V100.8M10.75 87.9V105.1M11.25 91.7V101.3M11.75 88.8V104.2M12.25 86.8V106.2M12.75 86.5V106.5M13.25 91.4V101.6M13.75 90.6V102.4M14.25 91.8V101.2M14.75 88.5V104.5M15.25 87.2V105.8M15.75 92.8V100.2M16.25 93.6V99.4M16.75 93.5V99.5M17.25 92.4V100.6M17.75 91.9V101.1M18.25 91.3V101.7M18.75 91.9V101.1M19.25 91.7V101.3M19.75 90.8V102.2M20.25 87.4V105.6M20.75 85.1V107.9M21.25 90.7V102.3M21.75 85.6V107.4M22.25 86.2V106.8M22.75 91.8V101.2M23.25 92.5V100.5M23.75 92.9V100.1M24.25 92.8V100.2M24.75 89.3V103.7M25.25 93.1V99.9M25.75 90.5V102.5M26.25 87.2V105.8M26.75 88.7V104.3M27.25 86.9V106.1M27.75 91.0V102.0M28.25 90.5V102.5M28.75 90.2V102.8M29.25 85.2V107.8M29.75 85.3V107.7M30.25 88.1V104.9M30.75 91.2V101.8M31.25 91.0V102.0M31.75 92.2V100.8M32.25 87.7V105.3M32.75 92.9V100.1M33.25 93.8V99.2M33.75 93.0V100.0M34.25 92.7V100.3M34.75 88.7V104.3M35.25 86.7V106.3M35.75 90.7V102.3M36.25 91.5V101.5M36.75 85.9V107.1M37.25 90.7V102.3M37.75 90.8V102.2M38.25 90.6V102.4M38.75 91.7V101.3M39.25 91.8V101.2M39.75 91.8V101.2M40.25 86.7V106.3M40.75 93.3V99.7M41.25 89.6V103.4M41.75 93.2V99.8M42.25 92.8V100.2M42.75 92.6V100.4M43.25 91.6V101.4M43.75 86.9V106.1M44.25 90.9V102.1M44.75 91.5V101.5M45.25 90.5V102.5M45.75 91.1V101.9M46.25 86.9V106.1M46.75 90.6V102.4M47.25 90.6V102.4M47.75 91.6V101.4M48.25 86.9V106.1M48.75 92.1V100.9M49.25 92.9V100.1M49.75 93.5V99.5M50.25 93.4V99.6M50.75 87.5V105.5M51.25 92.3V100.7M51.75 89.3V103.7M52.25 86.4V106.6M52.75 88.6V104.4M53.25 86.1V106.9M53.75 90.4V102.6M54.25 90.8V102.2M54.75 85.8V107.2M55.25 90.4V102.6M55.75 91.3V101.7M56.25 91.5V101.5M56.75 92.1V100.9M57.25 92.3V100.7M57.75 92.9V100.1M58.25 93.5V99.5M58.75 88.1V104.9M59.25 87.7V105.3M59.75 91.5V101.5M60.25 91.2V101.8M60.75 91.3V101.7M61.25 91.4V101.6M61.75 88.4V104.6M62.25 90.9V102.1M62.75 90.7V102.3M63.25 90.5V102.5M63.75 91.6V101.4M64.25 86.3V106.7M64.75 91.6V101.4M65.25 92.6V100.4M65.75 93.0V100.0M66.25 90.0V103.0M66.75 93.1V99.9M67.25 92.3V100.7M67.75 92.5V100.5M68.25 91.2V101.8M68.75 87.5V105.5M69.25 90.5V102.5M69.75 90.6V102.4M70.25 90.3V102.7M70.75 91.4V101.6M71.25 88.0V105.0M71.75 87.9V105.1M72.25 91.3V101.7M72.75 91.4V101.6M73.25 92.6V100.4M73.75 92.5V100.5M74.25 89.1V103.9M74.75 89.6V103.4M75.25 88.1V104.9M75.75 86.7V106.3M76.25 91.9V101.1M76.75 88.1V104.9M77.25 88.1V104.9M77.75 91.2V101.8M78.25 90.9V102.1M78.75 90.3V102.7M79.25 87.7V105.3M79.75 90.9V102.1M80.25 91.5V101.5M80.75 91.0V102.0M81.25 91.3V101.7M81.75 91.9V101.1M82.25 92.5V100.5M82.75 93.4V99.6M83.25 93.3V99.7M83.75 87.4V105.6M84.25 92.0V101.0M84.75 91.9V101.1M85.25 91.1V101.9M85.75 91.9V101.1M86.25 87.7V105.3M86.75 86.3V106.7M87.25 91.2V101.8M87.75 90.9V102.1M88.25 85.4V107.6M88.75 91.9V101.1M89.25 92.2V100.8M89.75 92.0V101.0M90.25 87.8V105.2M90.75 93.1V99.9M91.25 93.9V99.1M91.75 93.1V99.9M92.25 92.8V100.2M92.75 92.6V100.4M93.25 87.6V105.4M93.75 92.0V101.0M94.25 91.7V101.3M94.75 87.0V106.0M95.25 90.8V102.2M95.75 90.9V102.1M96.25 90.8V102.2M96.75 91.2V101.8M97.25 91.3V101.7M97.75 91.5V101.5M98.25 92.0V101.0M98.75 92.6V100.4M99.25 90.6V102.4M99.75 93.2V99.8M100.25 93.0V100.0M100.75 88.8V104.2M101.25 91.5V101.5M101.75 90.8V102.2M102.25 91.9V101.1M102.75 91.1V101.9M103.25 87.2V105.8M103.75 90.5V102.5M104.25 91.1V101.9M104.75 91.2V101.8M105.25 88.0V105.0M105.75 87.8V105.2M106.25 86.8V106.2M106.75 92.5V100.5M107.25 89.8V103.2M107.75 93.2V99.8M108.25 93.6V99.4M108.75 93.1V99.9M109.25 91.9V101.1M109.75 92.3V100.7M110.25 86.9V106.1M110.75 90.8V102.2M111.25 91.2V101.8M111.75 88.1V104.9M112.25 86.9V106.1M112.75 91.0V102.0M113.25 91.3V101.7M113.75 90.7V102.3M114.25 91.8V101.2M114.75 87.9V105.1M115.25 92.2V100.8M115.75 93.1V99.9M116.25 93.4V99.6M116.75 93.0V100.0M117.25 91.9V101.1M117.75 92.5V100.5M118.25 92.2V100.8M118.75 87.2V105.8M119.25 88.2V104.8M119.75 91.3V101.7M120.25 90.8V102.2M120.75 86.4V106.6M121.25 91.0V102.0M121.75 90.8V102.2M122.25 91.0V102.0M122.75 91.4V101.6M123.25 91.7V101.3M123.75 92.5V100.5M124.25 93.5V99.5M124.75 93.0V100.0M125.25 93.1V99.9M125.75 91.7V101.3M126.25 92.3V100.7M126.75 91.9V101.1M127.25 91.0V102.0M127.75 88.8V104.2M128.25 91.3V101.7M128.75 88.6V104.4M129.25 91.4V101.6M129.75 90.9V102.1M130.25 91.6V101.4M130.75 91.8V101.2M131.25 92.0V101.0M131.75 91.9V101.1M132.25 93.0V100.0M132.75 93.4V99.6M133.25 88.4V104.6M133.75 92.2V100.8M134.25 92.5V100.5M134.75 88.6V104.4M135.25 91.1V101.9M135.75 91.0V102.0M136.25 91.7V101.3M136.75 90.3V102.7M137.25 86.3V106.7M137.75 91.0V102.0M138.25 90.6V102.4M138.75 91.5V101.5M139.25 91.3V101.7M139.75 92.1V100.9M140.25 92.9V100.1M140.75 93.4V99.6M141.25 93.7V99.3M141.75 93.0V100.0M142.25 91.9V101.1M142.75 92.0V101.0M143.25 91.4V101.6M143.75 90.5V102.5M144.25 87.6V105.4M144.75 90.8V102.2M145.25 91.0V102.0M145.75 91.3V101.7M146.25 90.3V102.7M146.75 86.1V106.9M147.25 92.0V101.0M147.75 91.6V101.4M148.25 91.9V101.1M148.75 93.2V99.8M149.25 88.2V104.8M149.75 89.4V103.6M150.25 92.4V100.6M150.75 92.4V100.6M151.25 88.8V104.2M151.75 90.9V102.1M152.25 86.5V106.5M152.75 90.7V102.3M153.25 90.8V102.2M153.75 90.6V102.4M154.25 90.3V102.7M154.75 91.1V101.9M155.25 90.6V102.4M155.75 85.8V107.2M156.25 91.9V101.1M156.75 92.8V100.2M157.25 93.3V99.7M157.75 93.8V99.2M158.25 90.2V102.8M158.75 92.4V100.6M159.25 91.4V101.6M159.75 91.4V101.6M160.25 91.6V101.4M160.75 88.4V104.6M161.25 90.8V102.2M161.75 91.3V101.7M162.25 90.6V102.4M162.75 90.6V102.4M163.25 87.8V105.2M163.75 86.3V106.7M164.25 87.1V105.9M164.75 88.3V104.7M165.25 92.6V100.4M165.75 93.7V99.3M166.25 93.4V99.6M166.75 89.7V103.3M167.25 88.7V104.3M167.75 91.3V101.7M168.25 91.3V101.7M168.75 91.1V101.9M169.25 87.6V105.4M169.75 90.2V102.8M170.25 90.4V102.6M170.75 87.4V105.6M171.25 88.0V105.0M171.75 86.5V106.5M172.25 91.8V101.2M172.75 89.9V103.1M173.25 88.9V104.1M173.75 92.7V100.3M174.25 93.7V99.3M174.75 89.5V103.5M175.25 88.8V104.2M175.75 89.3V103.7M176.25 91.1V101.9M176.75 91.5V101.5M177.25 91.8V101.2M177.75 90.9V102.1M178.25 90.9V102.1M178.75 90.1V102.9M179.25 86.0V107.0M179.75 91.6V101.4M180.25 91.9V101.1M180.75 91.1V101.9M181.25 91.4V101.6M181.75 91.4V101.6M182.25 91.8V101.2M182.75 90.0V103.0M183.25 89.1V103.9M183.75 86.7V106.3M184.25 91.8V101.2M184.75 91.4V101.6M185.25 90.8V102.2M185.75 86.2V106.8M186.25 86.6V106.4M186.75 92.0V101.0M187.25 91.7V101.3M187.75 86.7V106.3M188.25 91.7V101.3M188.75 91.0V102.0M189.25 91.7V101.3M189.75 91.2V101.8M190.25 91.9V101.1M190.75 87.7V105.3M191.25 92.1V100.9M191.75 91.9V101.1M192.25 91.4V101.6M192.75 88.2V104.8M193.25 91.1V101.9M193.75 91.4V101.6M194.25 91.3V101.7M194.75 91.0V102.0M195.25 86.6V106.4M195.75 91.3V101.7M196.25 91.7V101.3M196.75 90.9V102.1M197.25 91.2V101.8M197.75 92.0V101.0M198.25 88.0V105.0M198.75 91.9V101.1M199.25 92.6V100.4M199.75 91.8V101.2M200.25 92.4V100.6M200.75 92.1V100.9M201.25 91.6V101.4M201.75 91.9V101.1M202.25 92.0V101.0M202.75 87.9V105.1M203.25 91.4V101.6M203.75 90.5V102.5M204.25 91.7V101.3M204.75 87.4V105.6M205.25 91.7V101.3M205.75 88.7V104.3M206.25 91.6V101.4M206.75 91.7V101.3M207.25 91.6V101.4M207.75 91.7V101.3M208.25 92.3V100.7M208.75 91.7V101.3M209.25 87.2V105.8M209.75 86.1V106.9M210.25 88.1V104.9M210.75 89.1V103.9M211.25 91.6V101.4M211.75 91.6V101.4M212.25 91.0V102.0M212.75 91.9V101.1M213.25 91.1V101.9M213.75 92.2V100.8M214.25 89.5V103.5M214.75 91.5V101.5M215.25 92.1V100.9M215.75 92.6V100.4M216.25 92.3V100.7M216.75 87.1V105.9M217.25 91.4V101.6M217.75 92.0V101.0M218.25 87.1V105.9M218.75 88.5V104.5M219.25 91.7V101.3M219.75 87.7V105.3M220.25 87.1V105.9M220.75 90.7V102.3M221.25 91.1V101.9M221.75 88.8V104.2M222.25 91.7V101.3M222.75 89.2V103.8M223.25 88.5V104.5M223.75 88.5V104.5M224.25 92.5V100.5M224.75 92.1V100.9M225.25 87.4V105.6M225.75 92.3V100.7M226.25 92.1V100.9M226.75 87.8V105.2M227.25 86.2V106.8M227.75 91.5V101.5M228.25 91.6V101.4M228.75 91.3V101.7M229.25 91.5V101.5M229.75 86.9V106.1M230.25 87.4V105.6M230.75 85.9V107.1M231.25 91.3V101.7M231.75 92.0V101.0M232.25 87.9V105.1M232.75 87.0V106.0M233.25 92.6V100.4M233.75 92.1V100.9M234.25 91.5V101.5M234.75 91.0V102.0M235.25 91.6V101.4M235.75 91.0V102.0M236.25 90.6V102.4M236.75 91.1V101.9M237.25 91.5V101.5M237.75 88.1V104.9M238.25 87.3V105.7M238.75 92.1V100.9M239.25 86.8V106.2M239.75 91.9V101.1M240.25 92.5V100.5M240.75 89.5V103.5M241.25 91.6V101.4M241.75 92.2V100.8M242.25 91.9V101.1M242.75 91.1V101.9M243.25 87.6V105.4M243.75 90.9V102.1M244.25 91.0V102.0M244.75 92.0V101.0M245.25 90.6V102.4M245.75 91.4V101.6M246.25 90.8V102.2M246.75 91.2V101.8M247.25 89.1V103.9M247.75 92.3V100.7M248.25 91.9V101.1M248.75 89.8V103.2M249.25 89.7V103.3M249.75 91.6V101.4M250.25 86.9V106.1M250.75 89.6V103.4M251.25 85.7V107.3M251.75 92.0V101.0M252.25 91.2V101.8M252.75 91.6V101.4M253.25 91.5V101.5M253.75 91.9V101.1M254.25 87.2V105.8M254.75 90.7V102.3M255.25 87.8V105.2M255.75 91.8V101.2M256.25 91.6V101.4M256.75 87.2V105.8M257.25 92.2V100.8M257.75 92.4V100.6M258.25 92.4V100.6M258.75 91.4V101.6M259.25 87.2V105.8M259.75 92.2V100.8M260.25 90.9V102.1M260.75 90.9V102.1M261.25 86.8V106.2M261.75 86.4V106.6M262.25 90.7V102.3M262.75 88.3V104.7M263.25 91.3V101.7M263.75 91.4V101.6M264.25 91.2V101.8" stroke="#b6f000" stroke-width="0.9" fill="none" opacity="1.0"/><rect x="0" y="55" width="264.5" height="6.6" fill="#c2c6ad"/><rect x="0" y="79.2" width="264.5" height="5.0" fill="#14180f" opacity="0.55"/><rect x="0" y="78.6" width="264.5" height="0.8" fill="#c8d8a8" opacity="0.8"/><rect x="0" y="84.2" width="264.5" height="0.8" fill="#8a9aa8" opacity="0.9"/><rect x="0" y="110" width="264.5" height="25" fill="#3a201e"/><rect x="0" y="110" width="264.5" height="6" fill="#331b1a"/><path d="M0.25 123.7V129.3M0.75 123.7V129.3M1.25 123.9V129.1M1.75 122.1V130.9M2.25 123.3V129.7M2.75 124.8V128.2M3.25 123.2V129.8M3.75 126.0V127.0M4.25 124.5V128.5M4.75 125.5V127.5M5.25 123.5V129.5M5.75 122.4V130.6M6.25 119.2V133.8M6.75 121.7V131.3M7.25 124.1V128.9M7.75 125.6V127.4M8.25 122.3V130.7M8.75 124.4V128.6M9.25 122.3V130.7M9.75 125.3V127.7M10.25 123.9V129.1M10.75 120.3V132.7M11.25 124.6V128.4M11.75 125.7V127.3M12.25 124.5V128.5M12.75 123.2V129.8M13.25 124.4V128.6M13.75 125.2V127.8M14.25 124.4V128.6M14.75 124.7V128.3M15.25 122.0V131.0M15.75 122.8V130.2M16.25 124.7V128.3M16.75 125.4V127.6M17.25 122.3V130.7M17.75 125.1V127.9M18.25 125.1V127.9M18.75 124.4V128.6M19.25 123.7V129.3M19.75 120.7V132.3M20.25 123.8V129.2M20.75 123.0V130.0M21.25 125.4V127.6M21.75 123.0V130.0M22.25 123.4V129.6M22.75 125.7V127.3M23.25 124.9V128.1M23.75 123.9V129.1M24.25 122.8V130.2M24.75 124.0V129.0M25.25 123.0V130.0M25.75 124.9V128.1M26.25 123.0V130.0M26.75 123.2V129.8M27.25 124.1V128.9M27.75 123.4V129.6M28.25 122.0V131.0M28.75 122.0V131.0M29.25 121.5V131.5M29.75 122.7V130.3M30.25 123.2V129.8M30.75 123.3V129.7M31.25 122.2V130.8M31.75 123.9V129.1M32.25 123.7V129.3M32.75 122.0V131.0M33.25 120.8V132.2M33.75 124.2V128.8M34.25 124.2V128.8M34.75 123.1V129.9M35.25 122.5V130.5M35.75 122.5V130.5M36.25 125.8V127.2M36.75 122.4V130.6M37.25 122.7V130.3M37.75 122.4V130.6M38.25 124.0V129.0M38.75 124.4V128.6M39.25 124.4V128.6M39.75 123.6V129.4M40.25 122.3V130.7M40.75 124.9V128.1M41.25 125.2V127.8M41.75 121.8V131.2M42.25 120.7V132.3M42.75 123.0V130.0M43.25 125.3V127.7M43.75 123.2V129.8M44.25 123.1V129.9M44.75 125.8V127.2M45.25 122.1V130.9M45.75 125.5V127.5M46.25 121.6V131.4M46.75 118.6V134.4M47.25 122.7V130.3M47.75 125.2V127.8M48.25 123.5V129.5M48.75 121.8V131.2M49.25 122.4V130.6M49.75 121.7V131.3M50.25 125.6V127.4M50.75 120.0V133.0M51.25 119.4V133.6M51.75 122.2V130.8M52.25 122.7V130.3M52.75 124.9V128.1M53.25 121.8V131.2M53.75 121.8V131.2M54.25 125.3V127.7M54.75 122.2V130.8M55.25 123.5V129.5M55.75 119.8V133.2M56.25 123.3V129.7M56.75 122.6V130.4M57.25 121.6V131.4M57.75 121.6V131.4M58.25 122.7V130.3M58.75 123.0V130.0M59.25 124.6V128.4M59.75 123.9V129.1M60.25 117.7V135.3M60.75 122.0V131.0M61.25 123.8V129.2M61.75 123.3V129.7M62.25 125.3V127.7M62.75 122.5V130.5M63.25 121.9V131.1M63.75 124.1V128.9M64.25 122.2V130.8M64.75 118.0V135.0M65.25 122.2V130.8M65.75 125.2V127.8M66.25 125.2V127.8M66.75 125.1V127.9M67.25 124.8V128.2M67.75 124.1V128.9M68.25 124.7V128.3M68.75 123.3V129.7M69.25 117.6V135.4M69.75 120.4V132.6M70.25 121.6V131.4M70.75 124.5V128.5M71.25 124.9V128.1M71.75 124.7V128.3M72.25 123.0V130.0M72.75 122.2V130.8M73.25 123.4V129.6M73.75 119.3V133.7M74.25 122.6V130.4M74.75 120.9V132.1M75.25 124.8V128.2M75.75 121.9V131.1M76.25 122.9V130.1M76.75 124.9V128.1M77.25 124.2V128.8M77.75 122.2V130.8M78.25 119.9V133.1M78.75 120.4V132.6M79.25 122.4V130.6M79.75 123.0V130.0M80.25 124.0V129.0M80.75 121.9V131.1M81.25 121.4V131.6M81.75 121.9V131.1M82.25 120.9V132.1M82.75 121.2V131.8M83.25 120.6V132.4M83.75 121.1V131.9M84.25 125.1V127.9M84.75 123.4V129.6M85.25 125.0V128.0M85.75 124.9V128.1M86.25 123.9V129.1M86.75 122.8V130.2M87.25 120.5V132.5M87.75 123.5V129.5M88.25 120.9V132.1M88.75 125.9V127.1M89.25 124.8V128.2M89.75 123.1V129.9M90.25 122.6V130.4M90.75 123.3V129.7M91.25 124.1V128.9M91.75 118.1V134.9M92.25 121.8V131.2M92.75 124.7V128.3M93.25 123.4V129.6M93.75 125.9V127.1M94.25 125.9V127.1M94.75 123.1V129.9M95.25 122.9V130.1M95.75 121.7V131.3M96.25 118.2V134.8M96.75 121.6V131.4M97.25 122.8V130.2M97.75 122.3V130.7M98.25 122.7V130.3M98.75 125.2V127.8M99.25 124.9V128.1M99.75 124.7V128.3M100.25 122.6V130.4M100.75 118.8V134.2M101.25 120.2V132.8M101.75 121.0V132.0M102.25 124.8V128.2M102.75 123.3V129.7M103.25 122.8V130.2M103.75 122.3V130.7M104.25 123.5V129.5M104.75 122.6V130.4M105.25 120.0V133.0M105.75 120.4V132.6M106.25 123.2V129.8M106.75 123.5V129.5M107.25 123.7V129.3M107.75 121.3V131.7M108.25 124.6V128.4M108.75 124.6V128.4M109.25 121.1V131.9M109.75 120.4V132.6M110.25 123.1V129.9M110.75 122.1V130.9M111.25 125.5V127.5M111.75 124.5V128.5M112.25 124.7V128.3M112.75 123.2V129.8M113.25 123.7V129.3M113.75 120.0V133.0M114.25 118.9V134.1M114.75 121.9V131.1M115.25 121.7V131.3M115.75 122.7V130.3M116.25 121.5V131.5M116.75 122.9V130.1M117.25 124.6V128.4M117.75 124.7V128.3M118.25 124.6V128.4M118.75 117.5V135.5M119.25 123.0V130.0M119.75 123.9V129.1M120.25 122.9V130.1M120.75 123.6V129.4M121.25 125.3V127.7M121.75 125.0V128.0M122.25 121.6V131.4M122.75 120.6V132.4M123.25 116.6V136.4M123.75 123.2V129.8M124.25 125.3V127.7M124.75 121.0V132.0M125.25 125.7V127.3M125.75 124.6V128.4M126.25 125.8V127.2M126.75 124.2V128.8M127.25 121.4V131.6M127.75 121.0V132.0M128.25 122.1V130.9M128.75 124.0V129.0M129.25 125.7V127.3M129.75 122.8V130.2M130.25 124.0V129.0M130.75 125.5V127.5M131.25 123.0V130.0M131.75 120.1V132.9M132.25 118.5V134.5M132.75 119.6V133.4M133.25 124.8V128.2M133.75 121.8V131.2M134.25 125.8V127.2M134.75 124.0V129.0M135.25 122.5V130.5M135.75 125.2V127.8M136.25 123.9V129.1M136.75 118.6V134.4M137.25 122.9V130.1M137.75 123.0V130.0M138.25 121.6V131.4M138.75 125.4V127.6M139.25 121.7V131.3M139.75 122.9V130.1M140.25 125.5V127.5M140.75 122.4V130.6M141.25 119.9V133.1M141.75 121.3V131.7M142.25 121.6V131.4M142.75 123.5V129.5M143.25 122.7V130.3M143.75 121.0V132.0M144.25 122.5V130.5M144.75 122.8V130.2M145.25 122.2V130.8M145.75 120.3V132.7M146.25 119.3V133.7M146.75 123.6V129.4M147.25 124.4V128.6M147.75 125.0V128.0M148.25 121.7V131.3M148.75 124.1V128.9M149.25 123.3V129.7M149.75 122.0V131.0M150.25 121.3V131.7M150.75 121.9V131.1M151.25 123.3V129.7M151.75 124.9V128.1M152.25 124.9V128.1M152.75 122.4V130.6M153.25 123.0V130.0M153.75 125.1V127.9M154.25 120.2V132.8M154.75 120.4V132.6M155.25 119.3V133.7M155.75 121.6V131.4M156.25 125.1V127.9M156.75 124.0V129.0M157.25 123.7V129.3M157.75 123.1V129.9M158.25 124.4V128.6M158.75 121.3V131.7M159.25 117.2V135.8M159.75 120.5V132.5M160.25 125.5V127.5M160.75 122.7V130.3M161.25 122.8V130.2M161.75 124.3V128.7M162.25 122.4V130.6M162.75 124.9V128.1M163.25 120.7V132.3M163.75 119.9V133.1M164.25 120.8V132.2M164.75 125.5V127.5M165.25 122.4V130.6M165.75 125.8V127.2M166.25 123.1V129.9M166.75 122.2V130.8M167.25 123.0V130.0M167.75 123.6V129.4M168.25 122.0V131.0M168.75 121.4V131.6M169.25 123.6V129.4M169.75 121.4V131.6M170.25 124.9V128.1M170.75 124.7V128.3M171.25 125.3V127.7M171.75 122.2V130.8M172.25 122.5V130.5M172.75 122.1V130.9M173.25 123.2V129.8M173.75 121.7V131.3M174.25 125.2V127.8M174.75 124.9V128.1M175.25 124.6V128.4M175.75 125.6V127.4M176.25 121.4V131.6M176.75 122.5V130.5M177.25 120.6V132.4M177.75 121.3V131.7M178.25 123.0V130.0M178.75 121.3V131.7M179.25 121.6V131.4M179.75 124.3V128.7M180.25 124.2V128.8M180.75 124.7V128.3M181.25 120.9V132.1M181.75 120.3V132.7M182.25 120.2V132.8M182.75 124.6V128.4M183.25 122.2V130.8M183.75 124.1V128.9M184.25 123.5V129.5M184.75 122.6V130.4M185.25 121.2V131.8M185.75 121.5V131.5M186.25 119.2V133.8M186.75 124.3V128.7M187.25 125.5V127.5M187.75 123.9V129.1M188.25 123.9V129.1M188.75 121.4V131.6M189.25 123.2V129.8M189.75 121.2V131.8M190.25 121.6V131.4M190.75 121.6V131.4M191.25 121.2V131.8M191.75 122.8V130.2M192.25 121.9V131.1M192.75 124.1V128.9M193.25 121.9V131.1M193.75 123.0V130.0M194.25 123.0V130.0M194.75 120.8V132.2M195.25 122.2V130.8M195.75 123.2V129.8M196.25 123.9V129.1M196.75 121.4V131.6M197.25 124.9V128.1M197.75 123.8V129.2M198.25 122.5V130.5M198.75 122.6V130.4M199.25 123.2V129.8M199.75 118.6V134.4M200.25 124.5V128.5M200.75 125.6V127.4M201.25 123.0V130.0M201.75 124.4V128.6M202.25 124.8V128.2M202.75 125.8V127.2M203.25 125.3V127.7M203.75 120.0V133.0M204.25 120.8V132.2M204.75 122.2V130.8M205.25 123.4V129.6M205.75 122.6V130.4M206.25 122.4V130.6M206.75 125.0V128.0M207.25 121.5V131.5M207.75 121.6V131.4M208.25 122.7V130.3M208.75 118.7V134.3M209.25 122.7V130.3M209.75 123.1V129.9M210.25 121.5V131.5M210.75 124.7V128.3M211.25 123.9V129.1M211.75 125.6V127.4M212.25 122.1V130.9M212.75 123.4V129.6M213.25 118.4V134.6M213.75 123.0V130.0M214.25 125.7V127.3M214.75 121.9V131.1M215.25 125.4V127.6M215.75 124.4V128.6M216.25 123.8V129.2M216.75 124.4V128.6M217.25 120.9V132.1M217.75 122.1V130.9M218.25 121.4V131.6M218.75 124.0V129.0M219.25 124.1V128.9M219.75 125.1V127.9M220.25 121.1V131.9M220.75 124.7V128.3M221.25 122.3V130.7M221.75 124.4V128.6M222.25 118.5V134.5M222.75 123.5V129.5M223.25 123.8V129.2M223.75 123.1V129.9M224.25 124.0V129.0M224.75 123.3V129.7M225.25 125.0V128.0M225.75 124.9V128.1M226.25 124.7V128.3M226.75 121.2V131.8M227.25 122.4V130.6M227.75 123.5V129.5M228.25 125.6V127.4M228.75 123.1V129.9M229.25 123.5V129.5M229.75 121.9V131.1M230.25 123.3V129.7M230.75 120.3V132.7M231.25 118.1V134.9M231.75 121.3V131.7M232.25 124.5V128.5M232.75 124.1V128.9M233.25 125.0V128.0M233.75 124.0V129.0M234.25 122.8V130.2M234.75 121.6V131.4M235.25 122.7V130.3M235.75 119.0V134.0M236.25 122.9V130.1M236.75 125.0V128.0M237.25 123.5V129.5M237.75 122.9V130.1M238.25 123.7V129.3M238.75 124.5V128.5M239.25 124.5V128.5M239.75 122.3V130.7M240.25 120.6V132.4M240.75 123.3V129.7M241.25 124.8V128.2M241.75 124.0V129.0M242.25 123.7V129.3M242.75 124.8V128.2M243.25 122.2V130.8M243.75 121.7V131.3M244.25 121.4V131.6M244.75 121.1V131.9M245.25 119.6V133.4M245.75 123.2V129.8M246.25 121.3V131.7M246.75 125.0V128.0M247.25 125.6V127.4M247.75 125.8V127.2M248.25 122.8V130.2M248.75 124.5V128.5M249.25 122.1V130.9M249.75 119.8V133.2M250.25 124.9V128.1M250.75 124.4V128.6M251.25 124.7V128.3M251.75 124.5V128.5M252.25 122.7V130.3M252.75 123.9V129.1M253.25 122.5V130.5M253.75 121.8V131.2M254.25 122.5V130.5M254.75 120.9V132.1M255.25 123.1V129.9M255.75 123.4V129.6M256.25 122.4V130.6M256.75 121.2V131.8M257.25 123.2V129.8M257.75 122.9V130.1M258.25 122.5V130.5M258.75 120.7V132.3M259.25 124.9V128.1M259.75 126.0V127.0M260.25 121.8V131.2M260.75 124.9V128.1M261.25 121.1V131.9M261.75 125.4V127.6M262.25 120.5V132.5M262.75 119.9V133.1M263.25 120.3V132.7M263.75 122.4V130.6M264.25 121.4V131.6" stroke="#a65a4f" stroke-width="0.9" fill="none" opacity="1.0"/><path d="M0.25 126.5V126.5M2.55 119.4V133.6M4.85 126.5V126.5M7.15 126.5V126.5M9.45 126.5V126.5M11.75 126.5V126.5M14.05 119.9V133.1M16.35 126.5V126.5M18.65 126.5V126.5M20.95 126.5V126.5M23.25 126.5V126.5M25.55 126.5V126.5M27.85 126.5V126.5M30.15 126.5V126.5M32.45 126.5V126.5M34.75 117.3V135.7M37.05 117.8V135.2M39.35 126.5V126.5M41.65 126.5V126.5M43.95 126.5V126.5M46.25 126.5V126.5M48.55 115.1V137.9M50.85 126.5V126.5M53.15 119.4V133.6M55.45 126.5V126.5M57.75 126.5V126.5M60.05 126.5V126.5M62.35 126.5V126.5M64.65 126.5V126.5M66.95 126.5V126.5M69.25 118.4V134.6M71.55 117.5V135.5M73.85 126.5V126.5M76.15 126.5V126.5M78.45 119.4V133.6M80.75 118.7V134.3M83.05 119.4V133.6M85.35 116.5V136.5M87.65 123.9V129.1M89.95 116.7V136.3M92.25 117.0V136.0M94.55 126.5V126.5M96.85 115.7V137.3M99.15 126.5V126.5M101.45 118.6V134.4M103.75 126.5V126.5M106.05 126.5V126.5M108.35 126.5V126.5M110.65 120.3V132.7M112.95 126.5V126.5M115.25 126.5V126.5M117.55 126.5V126.5M119.85 114.9V138.1M122.15 126.5V126.5M124.45 118.7V134.3M126.75 126.5V126.5M129.05 115.4V137.6M131.35 126.5V126.5M133.65 123.0V130.0M135.95 126.5V126.5M138.25 126.5V126.5M140.55 126.5V126.5M142.85 126.5V126.5M145.15 126.5V126.5M147.45 126.5V126.5M149.75 114.9V138.1M152.05 119.3V133.7M154.35 115.0V138.0M156.65 126.5V126.5M158.95 126.5V126.5M161.25 120.6V132.4M163.55 120.5V132.5M165.85 114.9V138.1M168.15 115.2V137.8M170.45 120.0V133.0M172.75 119.7V133.3M175.05 126.5V126.5M177.35 114.9V138.1M179.65 126.5V126.5M181.95 126.5V126.5M184.25 117.3V135.7M186.55 126.5V126.5M188.85 126.5V126.5M191.15 126.5V126.5M193.45 120.7V132.3M195.75 115.1V137.9M198.05 120.7V132.3M200.35 126.5V126.5M202.65 119.6V133.4M204.95 126.5V126.5M207.25 126.5V126.5M209.55 126.5V126.5M211.85 123.2V129.8M214.15 126.5V126.5M216.45 122.4V130.6M218.75 126.5V126.5M221.05 126.5V126.5M223.35 126.5V126.5M225.65 119.3V133.7M227.95 126.5V126.5M230.25 126.5V126.5M232.55 126.5V126.5M234.85 119.9V133.1M237.15 120.1V132.9M239.45 126.5V126.5M241.75 117.9V135.1M244.05 126.5V126.5M246.35 126.5V126.5M248.65 119.9V133.1M250.95 114.9V138.1M253.25 126.5V126.5M255.55 126.5V126.5M257.85 126.5V126.5M260.15 118.7V134.3M262.45 120.4V132.6" stroke="#d09888" stroke-width="0.5" fill="none" opacity="0.5"/><rect x="0" y="133.2" width="264.5" height="1.0" fill="#c8a090"/></svg>
<div style="left:452.50px;top:104.50px;width:9.50px;height:136.00px;background:rgba(230,230,230,0.3);"></div>
<div style="left:452.50px;top:166.00px;width:9.50px;height:47.50px;background:rgba(236,236,230,0.72);"></div>
<div style="left:460.80px;top:94.00px;width:0.70px;height:146.00px;background:rgba(190,60,60,0.6);"></div>
<div style="left:453.00px;top:95.00px;width:11.00px;height:7.50px;background:#2a7bd0;border-radius:3px"></div>
<div class="t" style="left:454.50px;top:96.40px;font-size:4px;line-height:4.80px;color:#cfe4f8;">1:49</div>
<div class="t" style="left:465.80px;top:96.30px;font-size:4.5px;line-height:5.40px;color:#a8a8a8;">0</div>
<div style="left:641.50px;top:104.50px;width:9.00px;height:136.00px;background:#1a1a1a;"></div>
<div style="left:642.70px;top:104.50px;width:6.30px;height:19.40px;background:#7d9d8e;"></div>
<div style="left:642.70px;top:124.50px;width:6.30px;height:18.90px;background:#c4e04c;"></div>
<div style="left:642.70px;top:144.00px;width:6.30px;height:15.40px;background:#8e5e5e;"></div>
<div style="left:642.70px;top:160.00px;width:6.30px;height:3.40px;background:#6a4a4a;"></div>
<div style="left:642.70px;top:164.00px;width:6.30px;height:18.40px;background:#9c4d9c;"></div>
<div style="left:642.70px;top:183.00px;width:6.30px;height:19.40px;background:#9a6e5c;"></div>
<div style="left:642.70px;top:203.00px;width:6.30px;height:18.40px;background:#b08460;"></div>
<div style="left:642.70px;top:222.00px;width:6.30px;height:17.40px;background:#5a78ae;"></div>
<div class="t" style="left:288.00px;top:243.90px;font-size:8.5px;line-height:10.20px;color:#3d8fe0;">1:49.873</div>
<div style="left:383.00px;top:246.90px;width:3.20px;height:3.20px;background:#cfcfcf;"></div>
<svg style="position:absolute;left:393.50px;top:246.30px;overflow:visible" width="5" height="4.4" viewBox="0 0 5 4.4"><path d="M0.3 0 L4.6 2.2 L0.3 4.4 Z" fill="#34c040"/></svg>
<div style="left:407.00px;top:246.70px;width:1.30px;height:3.60px;background:#cfcfcf;"></div>
<div style="left:409.60px;top:246.70px;width:1.30px;height:3.60px;background:#cfcfcf;"></div>
<svg style="position:absolute;left:418.00px;top:246.50px;overflow:visible" width="5" height="4" viewBox="0 0 5 4"><rect x="0" y="0" width="1.1" height="4" fill="#cfcfcf"/><path d="M4.8 0 L1.4 2 L4.8 4 Z" fill="#cfcfcf"/></svg>
<svg style="position:absolute;left:430.00px;top:246.50px;overflow:visible" width="7" height="4" viewBox="0 0 7 4"><path d="M3.3 0 L0 2 L3.3 4 Z M6.8 0 L3.5 2 L6.8 4 Z" fill="#cfcfcf"/></svg>
<svg style="position:absolute;left:441.00px;top:246.50px;overflow:visible" width="7" height="4" viewBox="0 0 7 4"><path d="M0 0 L3.3 2 L0 4 Z M3.5 0 L6.8 2 L3.5 4 Z" fill="#cfcfcf"/></svg>
<svg style="position:absolute;left:454.00px;top:246.50px;overflow:visible" width="5" height="4" viewBox="0 0 5 4"><path d="M0.2 0 L3.6 2 L0.2 4 Z" fill="#cfcfcf"/><rect x="3.9" y="0" width="1.1" height="4" fill="#cfcfcf"/></svg>
<div style="left:466.50px;top:246.00px;width:5.00px;height:5.00px;background:#5a2830;border-radius:50%"></div>
<svg style="position:absolute;left:477.50px;top:246.00px;overflow:visible" width="7" height="5" viewBox="0 0 7 5"><path d="M1 1 H6 V4 H1 Z" fill="none" stroke="#d0d0d0" stroke-width="1"/><rect x="2" y="0" width="3" height="1.5" fill="#d0d0d0"/></svg>
<div style="left:490.00px;top:248.00px;width:6.00px;height:1.00px;background:#444;"></div>
<svg style="position:absolute;left:543.00px;top:245.00px;overflow:visible" width="7" height="7" viewBox="0 0 7 7"><path d="M0.6 0 V7 M2 1.5 L5.5 5.5 M5.8 3 V5.8 H3" stroke="#c8c8c8" stroke-width="1" fill="none"/></svg>
<svg style="position:absolute;left:555.05px;top:245.00px;overflow:visible" width="7" height="7" viewBox="0 0 7 7"><path d="M0.6 0 V7 M6.4 0 V7 M2 1.5 L4.8 4.8 M5 2.8 V5 H2.8" stroke="#c8c8c8" stroke-width="1" fill="none"/></svg>
<svg style="position:absolute;left:567.10px;top:245.00px;overflow:visible" width="7" height="7" viewBox="0 0 7 7"><path d="M0 0.6 H7 M1.5 2 L5.5 5.8 M5.8 3 V5.8 H3" stroke="#c8c8c8" stroke-width="1" fill="none"/></svg>
<svg style="position:absolute;left:579.15px;top:245.00px;overflow:visible" width="7" height="7" viewBox="0 0 7 7"><path d="M0 0.6 H7 M0 6.4 H7 M1.5 2 L5 5 M5.2 3 V5.2 H3" stroke="#c8c8c8" stroke-width="1" fill="none"/></svg>
<svg style="position:absolute;left:591.20px;top:245.00px;overflow:visible" width="7" height="7" viewBox="0 0 7 7"><path d="M3.5 0.5 V3 M1 3 H6 V6 H1 Z" stroke="#c8c8c8" stroke-width="1" fill="#888"/></svg>
<svg style="position:absolute;left:603.25px;top:245.00px;overflow:visible" width="7" height="7" viewBox="0 0 7 7"><circle cx="3" cy="3" r="1.9" fill="none" stroke="#c8c8c8" stroke-width="1"/><path d="M4.4 4.4 L6.5 6.5" stroke="#c8c8c8" stroke-width="1.2"/></svg>
<svg style="position:absolute;left:615.30px;top:245.00px;overflow:visible" width="7" height="7" viewBox="0 0 7 7"><circle cx="3" cy="3" r="1.9" fill="none" stroke="#c8c8c8" stroke-width="1"/><path d="M4.4 4.4 L6.5 6.5" stroke="#c8c8c8" stroke-width="1.2"/></svg>
<svg style="position:absolute;left:627.35px;top:245.00px;overflow:visible" width="7" height="7" viewBox="0 0 7 7"><circle cx="3" cy="3" r="1.9" fill="none" stroke="#c8c8c8" stroke-width="1"/><path d="M4.4 4.4 L6.5 6.5" stroke="#c8c8c8" stroke-width="1.2"/></svg>
<svg style="position:absolute;left:639.40px;top:245.00px;overflow:visible" width="7" height="7" viewBox="0 0 7 7"><path d="M0.6 0.6 L6 6 M0.6 0.6 H3.5 M0.6 0.6 V3.5 M6.2 6.2 H3.5 M6.2 6.2 V3.5" stroke="#c8c8c8" stroke-width="1" fill="none"/></svg>
<div style="left:285.00px;top:256.00px;width:366.00px;height:2.00px;background:#121212;"></div>
<div class="t" style="left:289.00px;top:260.50px;font-size:5px;line-height:6.00px;color:#d0d0d0;font-weight:bold">Mixer</div>
<div style="left:305.00px;top:261.80px;width:3.00px;height:3.50px;background:transparent;border-top:1px solid #777;border-bottom:1px solid #777;box-sizing:border-box"></div>
<div style="left:285.00px;top:269.50px;width:366.00px;height:177.50px;background:#1c1c1c;"></div>
<div style="left:285.00px;top:267.80px;width:366.00px;height:1.60px;background:#181818;"></div>
<div style="left:611.50px;top:270.00px;width:1.50px;height:177.00px;background:#141414;"></div>
<div style="left:285.00px;top:270.00px;width:16.00px;height:177.00px;background:#202020;"></div>
<div style="left:286.50px;top:270.00px;width:0.80px;height:177.00px;background:#161616;"></div>
<div style="left:293.00px;top:284.20px;width:5.00px;height:1.60px;background:#c8c8c8;"></div>
<div style="left:297.50px;top:283.50px;width:1.00px;height:3.00px;background:#c8c8c8;"></div>
<div style="left:293.00px;top:293.60px;width:5.00px;height:1.60px;background:#c8c8c8;"></div>
<div style="left:297.50px;top:292.90px;width:1.00px;height:3.00px;background:#c8c8c8;"></div>
<div class="t" style="left:287.50px;top:304.00px;font-size:4.5px;line-height:5.40px;color:#888;">&#8250;</div>
<div class="t" style="left:287.50px;top:315.60px;font-size:4.5px;line-height:5.40px;color:#888;">&#8250;</div>
<div class="t" style="left:287.50px;top:327.30px;font-size:4.5px;line-height:5.40px;color:#888;">&#8250;</div>
<div class="t" style="left:294.00px;top:303.70px;font-size:5px;line-height:6.00px;color:#d0d0d0;"><i>fx</i></div>
<svg style="position:absolute;left:293.50px;top:315.50px;overflow:visible" width="6" height="6" viewBox="0 0 6 6"><path d="M1.5 0.5 V5.5 M1.5 3 L5 1.5 M3.5 5.5 L5.5 3.5" stroke="#c8c8c8" stroke-width="1" fill="none"/></svg>
<svg style="position:absolute;left:293.50px;top:327.50px;overflow:visible" width="6" height="5" viewBox="0 0 6 5"><path d="M0.5 4.5 H5.5 M1.5 4.5 V2.5 M3 4.5 V0.5 M4.5 4.5 V2" stroke="#c8c8c8" stroke-width="1" fill="none"/></svg>
<svg style="position:absolute;left:292.50px;top:337.50px;overflow:visible" width="7" height="5" viewBox="0 0 7 5"><path d="M0.5 0.5 L3.5 2.5 L0.5 4.5 Z M6.5 0.5 L3.5 2.5 L6.5 4.5 Z" fill="#aaa"/></svg>
<div class="t" style="left:288.00px;top:347.60px;font-size:4.5px;line-height:5.40px;color:#aaa;">&#8592;</div>
<svg style="position:absolute;left:294.00px;top:347.00px;overflow:visible" width="5" height="7" viewBox="0 0 5 7"><path d="M2.5 0.5 V6.5 M0.5 2.5 L2.5 0.5 L4.5 2.5" stroke="#d0d0d0" stroke-width="1" fill="none"/></svg>
<div style="left:292.00px;top:427.00px;width:5.50px;height:5.50px;background:transparent;border:1px solid #999;border-radius:50%;box-sizing:border-box"></div>
<div style="left:301.00px;top:270.00px;width:36.95px;height:177.00px;background:#252525;"></div>
<div style="left:303.00px;top:273.60px;width:4.00px;height:4.00px;background:#555;border-radius:0.5px"></div>
<div style="left:330.00px;top:272.80px;width:6.00px;height:6.00px;background:transparent;border:1px solid #999;border-radius:1px;box-sizing:border-box"></div>
<svg style="position:absolute;left:331.00px;top:273.80px;overflow:visible" width="4" height="4" viewBox="0 0 4 4"><path d="M0.5 3.5 L3.5 0.5" stroke="#aaa" stroke-width="0.8"/></svg>
<div style="left:303.00px;top:281.00px;width:32.75px;height:8.00px;background:#262626;border:0.8px solid #363636;box-sizing:border-box"></div>
<div class="t" style="left:305.00px;top:282.24px;font-size:4.6px;line-height:5.52px;color:#606060;">Default Ster</div>
<div style="left:331.75px;top:284.70px;width:2.50px;height:0.80px;background:#555;"></div>
<div style="left:303.00px;top:290.40px;width:32.75px;height:8.00px;background:#262626;border:0.8px solid #363636;box-sizing:border-box"></div>
<div class="t" style="left:305.00px;top:291.64px;font-size:4.6px;line-height:5.52px;color:#606060;">Master</div>
<div style="left:331.75px;top:294.10px;width:2.50px;height:0.80px;background:#555;"></div>
<div style="left:301.00px;top:300.30px;width:36.95px;height:0.80px;background:#1a1a1a;"></div>
<div class="t" style="left:304.00px;top:303.58px;font-size:5.2px;line-height:6.24px;color:#e0e0e0;"><i>fx</i></div>
<div style="left:311.80px;top:303.70px;width:6.00px;height:6.00px;background:#121212;border:1px solid #c0c0c0;border-radius:50%;box-sizing:border-box"></div>
<svg style="position:absolute;left:320.50px;top:304.20px;overflow:visible" width="5" height="5" viewBox="0 0 5 5"><path d="M0.3 2.5 L2.3 1 V4 Z M3.2 0.3 V4.7" stroke="#ccc" stroke-width="0.8" fill="#ccc"/></svg>
<svg style="position:absolute;left:329.50px;top:304.40px;overflow:visible" width="5" height="5" viewBox="0 0 5 5"><path d="M2.3 0.2 L4.4 2.3 L2.3 4.4 L0.2 2.3 Z" fill="#cfcfcf"/></svg>
<div style="left:301.00px;top:312.20px;width:36.95px;height:0.80px;background:#1a1a1a;"></div>
<div class="t" style="left:303.50px;top:315.54px;font-size:4.6px;line-height:5.52px;color:#bdbdbd;">S1</div>
<div style="left:317.00px;top:315.30px;width:6.00px;height:6.00px;background:#121212;border:1px solid #c0c0c0;border-radius:50%;box-sizing:border-box"></div>
<div style="left:325.00px;top:314.90px;width:7.00px;height:6.80px;background:#6e1626;border-radius:1.5px"></div>
<div style="left:327.00px;top:316.50px;width:1.00px;height:3.60px;background:#f0d0d0;"></div>
<div style="left:328.50px;top:317.50px;width:2.00px;height:1.60px;background:#f0d0d0;"></div>
<div style="left:301.00px;top:324.20px;width:36.95px;height:0.80px;background:#1a1a1a;"></div>
<div style="left:301.00px;top:325.00px;width:36.95px;height:10.30px;background:#212121;"></div>
<div style="left:301.00px;top:335.30px;width:36.95px;height:0.80px;background:#1a1a1a;"></div>
<div style="left:304.50px;top:337.30px;width:6.20px;height:6.20px;background:transparent;border:1.1px solid #c8c8c8;border-radius:50%;box-sizing:border-box"></div>
<div style="left:307.20px;top:337.90px;width:0.80px;height:2.40px;background:#c8c8c8;"></div>
<div style="left:311.50px;top:337.50px;width:4.00px;height:5.60px;background:#17324f;border-radius:1px"></div>
<div class="t" style="left:312.30px;top:337.60px;font-size:4.5px;line-height:5.40px;color:#3d8fe0;">0</div>
<div style="left:330.00px;top:339.70px;width:5.00px;height:1.20px;background:#888;"></div>
<div style="left:301.00px;top:345.30px;width:36.95px;height:0.80px;background:#1a1a1a;"></div>
<div style="left:303.00px;top:346.50px;width:32.75px;height:8.00px;background:#262626;border:0.8px solid #363636;box-sizing:border-box"></div>
<div class="t" style="left:305.00px;top:347.74px;font-size:4.6px;line-height:5.52px;color:#606060;">Read</div>
<div style="left:331.75px;top:350.20px;width:2.50px;height:0.80px;background:#555;"></div>
<div class="t" style="left:305.00px;top:357.72px;font-size:4.3px;line-height:5.16px;color:#aaa;">M</div>
<div class="t" style="left:313.00px;top:357.72px;font-size:4.3px;line-height:5.16px;color:#aaa;">S</div>
<div class="t" style="left:321.00px;top:357.72px;font-size:4.3px;line-height:5.16px;color:#3a3a3a;">R</div>
<div class="t" style="left:328.00px;top:357.72px;font-size:4.3px;line-height:5.16px;color:#3a3a3a;">I</div>
<div class="t" style="left:304.00px;top:368.58px;font-size:3.2px;line-height:3.84px;color:#8a8a8a;">dB</div>
<div class="t" style="left:304.00px;top:372.98px;font-size:3.2px;line-height:3.84px;color:#8a8a8a;">0</div>
<div class="t" style="left:304.00px;top:377.38px;font-size:3.2px;line-height:3.84px;color:#8a8a8a;">6</div>
<div class="t" style="left:304.00px;top:381.78px;font-size:3.2px;line-height:3.84px;color:#8a8a8a;">-6</div>
<div class="t" style="left:304.00px;top:386.18px;font-size:3.2px;line-height:3.84px;color:#8a8a8a;">-12</div>
<div class="t" style="left:304.00px;top:390.58px;font-size:3.2px;line-height:3.84px;color:#8a8a8a;">-18</div>
<div class="t" style="left:304.00px;top:394.98px;font-size:3.2px;line-height:3.84px;color:#8a8a8a;">-24</div>
<div class="t" style="left:304.00px;top:399.38px;font-size:3.2px;line-height:3.84px;color:#8a8a8a;">-42</div>
<div class="t" style="left:304.00px;top:403.78px;font-size:3.2px;line-height:3.84px;color:#8a8a8a;">-&infin;</div>
<div style="left:312.00px;top:372.00px;width:3.00px;height:0.50px;background:#666;"></div>
<div style="left:312.00px;top:376.60px;width:3.00px;height:0.50px;background:#666;"></div>
<div style="left:312.00px;top:381.20px;width:3.00px;height:0.50px;background:#666;"></div>
<div style="left:312.00px;top:385.80px;width:3.00px;height:0.50px;background:#666;"></div>
<div style="left:312.00px;top:390.40px;width:3.00px;height:0.50px;background:#666;"></div>
<div style="left:312.00px;top:395.00px;width:3.00px;height:0.50px;background:#666;"></div>
<div style="left:312.00px;top:399.60px;width:3.00px;height:0.50px;background:#666;"></div>
<div style="left:312.00px;top:404.20px;width:3.00px;height:0.50px;background:#666;"></div>
<div style="left:311.50px;top:376.50px;width:6.20px;height:12.20px;background:#1a1a1a;border:1px solid #5fb898;border-radius:1px;box-sizing:border-box"></div>
<div style="left:312.50px;top:382.30px;width:4.20px;height:0.70px;background:#5fb898;"></div>
<div style="left:320.70px;top:368.40px;width:7.00px;height:39.80px;background:#121212;"></div>
<div style="left:321.20px;top:385.00px;width:2.90px;height:23.00px;background:#1fe02c;"></div>
<div style="left:324.30px;top:384.50px;width:2.90px;height:23.50px;background:#1fe02c;"></div>
<div class="t" style="left:332.00px;top:370.42px;font-size:4.3px;line-height:5.16px;color:#b8b8b8;">0</div>
<div style="left:329.50px;top:394.30px;width:2.00px;height:0.60px;background:#999;"></div>
<div class="t" style="left:331.50px;top:391.92px;font-size:4.3px;line-height:5.16px;color:#b8b8b8;">-36</div>
<div class="t" style="left:331.50px;top:403.42px;font-size:4.3px;line-height:5.16px;color:#b8b8b8;">dB</div>
<div style="left:307.30px;top:415.60px;width:4.60px;height:6.00px;background:#173552;border-radius:50%"></div>
<div class="t" style="left:308.40px;top:416.02px;font-size:4.3px;line-height:5.16px;color:#5aa0e0;">0</div>
<div class="t" style="left:320.50px;top:415.60px;font-size:5px;line-height:6.00px;color:#e8e8e8;font-weight:bold">-20.5</div>
<div style="left:301.00px;top:423.80px;width:36.95px;height:0.80px;background:#181818;"></div>
<div style="left:304.50px;top:429.30px;width:5.00px;height:1.00px;background:#cfcfcf;"></div>
<div class="t" style="left:312.00px;top:426.80px;font-size:5px;line-height:6.00px;color:#dedede;">Track 1</div>
<div style="left:301.00px;top:434.30px;width:36.95px;height:5.80px;background:#4a9d82;"></div>
<div style="left:301.00px;top:434.30px;width:6.00px;height:5.80px;background:rgba(255,255,255,0.15);"></div>
<div style="left:331.95px;top:434.80px;width:4.80px;height:4.80px;background:#4a9d82;border-radius:50%;border:0.9px solid rgba(255,255,255,0.6);box-sizing:border-box;filter:saturate(1.5) brightness(1.1)"></div>
<div style="left:338.75px;top:270.00px;width:36.95px;height:177.00px;background:#303030;"></div>
<div style="left:340.75px;top:273.60px;width:4.00px;height:4.00px;background:#555;border-radius:0.5px"></div>
<div style="left:367.75px;top:272.80px;width:6.00px;height:6.00px;background:transparent;border:1px solid #999;border-radius:1px;box-sizing:border-box"></div>
<svg style="position:absolute;left:368.75px;top:273.80px;overflow:visible" width="4" height="4" viewBox="0 0 4 4"><path d="M0.5 3.5 L3.5 0.5" stroke="#aaa" stroke-width="0.8"/></svg>
<div style="left:340.75px;top:281.00px;width:32.75px;height:8.00px;background:#2a2a2a;border:0.8px solid #363636;box-sizing:border-box"></div>
<div class="t" style="left:342.75px;top:282.24px;font-size:4.6px;line-height:5.52px;color:#6a6a6a;">Default Ster</div>
<div style="left:369.50px;top:284.70px;width:2.50px;height:0.80px;background:#555;"></div>
<div style="left:340.75px;top:290.40px;width:32.75px;height:8.00px;background:#2a2a2a;border:0.8px solid #363636;box-sizing:border-box"></div>
<div class="t" style="left:342.75px;top:291.64px;font-size:4.6px;line-height:5.52px;color:#6a6a6a;">Master</div>
<div style="left:369.50px;top:294.10px;width:2.50px;height:0.80px;background:#555;"></div>
<div style="left:338.75px;top:300.30px;width:36.95px;height:0.80px;background:#1a1a1a;"></div>
<div class="t" style="left:341.75px;top:303.58px;font-size:5.2px;line-height:6.24px;color:#e0e0e0;"><i>fx</i></div>
<div style="left:349.55px;top:303.70px;width:6.00px;height:6.00px;background:#121212;border:1px solid #c0c0c0;border-radius:50%;box-sizing:border-box"></div>
<svg style="position:absolute;left:358.25px;top:304.20px;overflow:visible" width="5" height="5" viewBox="0 0 5 5"><path d="M0.3 2.5 L2.3 1 V4 Z M3.2 0.3 V4.7" stroke="#ccc" stroke-width="0.8" fill="#ccc"/></svg>
<svg style="position:absolute;left:367.25px;top:304.40px;overflow:visible" width="5" height="5" viewBox="0 0 5 5"><path d="M2.3 0.2 L4.4 2.3 L2.3 4.4 L0.2 2.3 Z" fill="#cfcfcf"/></svg>
<div style="left:338.75px;top:312.20px;width:36.95px;height:0.80px;background:#1a1a1a;"></div>
<div class="t" style="left:341.25px;top:315.54px;font-size:4.6px;line-height:5.52px;color:#bdbdbd;">S1</div>
<div style="left:354.75px;top:315.30px;width:6.00px;height:6.00px;background:#121212;border:1px solid #c0c0c0;border-radius:50%;box-sizing:border-box"></div>
<div style="left:362.75px;top:314.90px;width:7.00px;height:6.80px;background:#6e1626;border-radius:1.5px"></div>
<div style="left:364.75px;top:316.50px;width:1.00px;height:3.60px;background:#f0d0d0;"></div>
<div style="left:366.25px;top:317.50px;width:2.00px;height:1.60px;background:#f0d0d0;"></div>
<div style="left:338.75px;top:324.20px;width:36.95px;height:0.80px;background:#1a1a1a;"></div>
<div style="left:338.75px;top:325.00px;width:36.95px;height:10.30px;background:#2c2c2c;"></div>
<div style="left:338.75px;top:335.30px;width:36.95px;height:0.80px;background:#1a1a1a;"></div>
<div style="left:342.25px;top:337.30px;width:6.20px;height:6.20px;background:transparent;border:1.1px solid #c8c8c8;border-radius:50%;box-sizing:border-box"></div>
<div style="left:344.95px;top:337.90px;width:0.80px;height:2.40px;background:#c8c8c8;"></div>
<div style="left:349.25px;top:337.50px;width:4.00px;height:5.60px;background:#17324f;border-radius:1px"></div>
<div class="t" style="left:350.05px;top:337.60px;font-size:4.5px;line-height:5.40px;color:#3d8fe0;">0</div>
<div style="left:367.75px;top:339.70px;width:5.00px;height:1.20px;background:#888;"></div>
<div style="left:338.75px;top:345.30px;width:36.95px;height:0.80px;background:#1a1a1a;"></div>
<div style="left:340.75px;top:346.50px;width:32.75px;height:8.00px;background:#2a2a2a;border:0.8px solid #363636;box-sizing:border-box"></div>
<div class="t" style="left:342.75px;top:347.74px;font-size:4.6px;line-height:5.52px;color:#606060;">Read</div>
<div style="left:369.50px;top:350.20px;width:2.50px;height:0.80px;background:#555;"></div>
<div class="t" style="left:342.75px;top:357.72px;font-size:4.3px;line-height:5.16px;color:#aaa;">M</div>
<div class="t" style="left:350.75px;top:357.72px;font-size:4.3px;line-height:5.16px;color:#aaa;">S</div>
<div class="t" style="left:358.75px;top:357.72px;font-size:4.3px;line-height:5.16px;color:#3a3a3a;">R</div>
<div class="t" style="left:365.75px;top:357.72px;font-size:4.3px;line-height:5.16px;color:#3a3a3a;">I</div>
<div class="t" style="left:341.75px;top:368.58px;font-size:3.2px;line-height:3.84px;color:#8a8a8a;">dB</div>
<div class="t" style="left:341.75px;top:372.98px;font-size:3.2px;line-height:3.84px;color:#8a8a8a;">0</div>
<div class="t" style="left:341.75px;top:377.38px;font-size:3.2px;line-height:3.84px;color:#8a8a8a;">6</div>
<div class="t" style="left:341.75px;top:381.78px;font-size:3.2px;line-height:3.84px;color:#8a8a8a;">-6</div>
<div class="t" style="left:341.75px;top:386.18px;font-size:3.2px;line-height:3.84px;color:#8a8a8a;">-12</div>
<div class="t" style="left:341.75px;top:390.58px;font-size:3.2px;line-height:3.84px;color:#8a8a8a;">-18</div>
<div class="t" style="left:341.75px;top:394.98px;font-size:3.2px;line-height:3.84px;color:#8a8a8a;">-24</div>
<div class="t" style="left:341.75px;top:399.38px;font-size:3.2px;line-height:3.84px;color:#8a8a8a;">-42</div>
<div class="t" style="left:341.75px;top:403.78px;font-size:3.2px;line-height:3.84px;color:#8a8a8a;">-&infin;</div>
<div style="left:349.75px;top:372.00px;width:3.00px;height:0.50px;background:#666;"></div>
<div style="left:349.75px;top:376.60px;width:3.00px;height:0.50px;background:#666;"></div>
<div style="left:349.75px;top:381.20px;width:3.00px;height:0.50px;background:#666;"></div>
<div style="left:349.75px;top:385.80px;width:3.00px;height:0.50px;background:#666;"></div>
<div style="left:349.75px;top:390.40px;width:3.00px;height:0.50px;background:#666;"></div>
<div style="left:349.75px;top:395.00px;width:3.00px;height:0.50px;background:#666;"></div>
<div style="left:349.75px;top:399.60px;width:3.00px;height:0.50px;background:#666;"></div>
<div style="left:349.75px;top:404.20px;width:3.00px;height:0.50px;background:#666;"></div>
<div style="left:349.25px;top:376.50px;width:6.20px;height:12.20px;background:#1a1a1a;border:1px solid #d0e880;border-radius:1px;box-sizing:border-box"></div>
<div style="left:350.25px;top:382.30px;width:4.20px;height:0.70px;background:#d0e880;"></div>
<div style="left:358.45px;top:368.40px;width:7.00px;height:39.80px;background:#121212;"></div>
<div style="left:358.95px;top:380.00px;width:2.90px;height:28.00px;background:#1fe02c;"></div>
<div style="left:358.95px;top:380.00px;width:2.90px;height:5.00px;background:#d8c22a;"></div>
<div style="left:362.05px;top:379.00px;width:2.90px;height:29.00px;background:#1fe02c;"></div>
<div style="left:362.05px;top:379.00px;width:2.90px;height:6.00px;background:#d8c22a;"></div>
<div class="t" style="left:369.75px;top:370.42px;font-size:4.3px;line-height:5.16px;color:#b8b8b8;">0</div>
<div style="left:367.25px;top:394.30px;width:2.00px;height:0.60px;background:#999;"></div>
<div class="t" style="left:369.25px;top:391.92px;font-size:4.3px;line-height:5.16px;color:#b8b8b8;">-36</div>
<div class="t" style="left:369.25px;top:403.42px;font-size:4.3px;line-height:5.16px;color:#b8b8b8;">dB</div>
<div style="left:345.05px;top:415.60px;width:4.60px;height:6.00px;background:#173552;border-radius:50%"></div>
<div class="t" style="left:346.15px;top:416.02px;font-size:4.3px;line-height:5.16px;color:#5aa0e0;">0</div>
<div class="t" style="left:358.25px;top:415.60px;font-size:5px;line-height:6.00px;color:#e8e8e8;font-weight:bold">-23.4</div>
<div style="left:338.75px;top:423.80px;width:36.95px;height:0.80px;background:#181818;"></div>
<div style="left:342.25px;top:429.30px;width:5.00px;height:1.00px;background:#cfcfcf;"></div>
<div class="t" style="left:349.75px;top:426.80px;font-size:5px;line-height:6.00px;color:#dedede;">Track 2</div>
<div style="left:338.75px;top:434.30px;width:36.95px;height:5.80px;background:#c0ee3a;"></div>
<div style="left:338.75px;top:434.30px;width:6.00px;height:5.80px;background:rgba(255,255,255,0.15);"></div>
<div style="left:369.70px;top:434.80px;width:4.80px;height:4.80px;background:#c0ee3a;border-radius:50%;border:0.9px solid rgba(255,255,255,0.6);box-sizing:border-box;filter:saturate(1.5) brightness(1.1)"></div>
<div style="left:376.50px;top:270.00px;width:36.95px;height:177.00px;background:#252525;"></div>
<div style="left:378.50px;top:273.60px;width:4.00px;height:4.00px;background:#555;border-radius:0.5px"></div>
<div style="left:405.50px;top:272.80px;width:6.00px;height:6.00px;background:transparent;border:1px solid #999;border-radius:1px;box-sizing:border-box"></div>
<svg style="position:absolute;left:406.50px;top:273.80px;overflow:visible" width="4" height="4" viewBox="0 0 4 4"><path d="M0.5 3.5 L3.5 0.5" stroke="#aaa" stroke-width="0.8"/></svg>
<div style="left:378.50px;top:281.00px;width:32.75px;height:8.00px;background:#262626;border:0.8px solid #363636;box-sizing:border-box"></div>
<div class="t" style="left:380.50px;top:282.24px;font-size:4.6px;line-height:5.52px;color:#606060;">Default Ster</div>
<div style="left:407.25px;top:284.70px;width:2.50px;height:0.80px;background:#555;"></div>
<div style="left:378.50px;top:290.40px;width:32.75px;height:8.00px;background:#262626;border:0.8px solid #363636;box-sizing:border-box"></div>
<div class="t" style="left:380.50px;top:291.64px;font-size:4.6px;line-height:5.52px;color:#606060;">Master</div>
<div style="left:407.25px;top:294.10px;width:2.50px;height:0.80px;background:#555;"></div>
<div style="left:376.50px;top:300.30px;width:36.95px;height:0.80px;background:#1a1a1a;"></div>
<div class="t" style="left:379.50px;top:303.58px;font-size:5.2px;line-height:6.24px;color:#e0e0e0;"><i>fx</i></div>
<div style="left:387.30px;top:303.70px;width:6.00px;height:6.00px;background:#121212;border:1px solid #c0c0c0;border-radius:50%;box-sizing:border-box"></div>
<svg style="position:absolute;left:396.00px;top:304.20px;overflow:visible" width="5" height="5" viewBox="0 0 5 5"><path d="M0.3 2.5 L2.3 1 V4 Z M3.2 0.3 V4.7" stroke="#ccc" stroke-width="0.8" fill="#ccc"/></svg>
<svg style="position:absolute;left:405.00px;top:304.40px;overflow:visible" width="5" height="5" viewBox="0 0 5 5"><path d="M2.3 0.2 L4.4 2.3 L2.3 4.4 L0.2 2.3 Z" fill="#cfcfcf"/></svg>
<div style="left:376.50px;top:312.20px;width:36.95px;height:0.80px;background:#1a1a1a;"></div>
<div class="t" style="left:379.00px;top:315.54px;font-size:4.6px;line-height:5.52px;color:#bdbdbd;">S1</div>
<div style="left:392.50px;top:315.30px;width:6.00px;height:6.00px;background:#121212;border:1px solid #c0c0c0;border-radius:50%;box-sizing:border-box"></div>
<div style="left:400.50px;top:314.90px;width:7.00px;height:6.80px;background:#6e1626;border-radius:1.5px"></div>
<div style="left:402.50px;top:316.50px;width:1.00px;height:3.60px;background:#f0d0d0;"></div>
<div style="left:404.00px;top:317.50px;width:2.00px;height:1.60px;background:#f0d0d0;"></div>
<div style="left:376.50px;top:324.20px;width:36.95px;height:0.80px;background:#1a1a1a;"></div>
<div style="left:376.50px;top:325.00px;width:36.95px;height:10.30px;background:#212121;"></div>
<div style="left:376.50px;top:335.30px;width:36.95px;height:0.80px;background:#1a1a1a;"></div>
<div style="left:380.00px;top:337.30px;width:6.20px;height:6.20px;background:transparent;border:1.1px solid #c8c8c8;border-radius:50%;box-sizing:border-box"></div>
<div style="left:382.70px;top:337.90px;width:0.80px;height:2.40px;background:#c8c8c8;"></div>
<div style="left:387.00px;top:337.50px;width:4.00px;height:5.60px;background:#17324f;border-radius:1px"></div>
<div class="t" style="left:387.80px;top:337.60px;font-size:4.5px;line-height:5.40px;color:#3d8fe0;">0</div>
<div style="left:405.50px;top:339.70px;width:5.00px;height:1.20px;background:#888;"></div>
<div style="left:376.50px;top:345.30px;width:36.95px;height:0.80px;background:#1a1a1a;"></div>
<div style="left:378.50px;top:346.50px;width:32.75px;height:8.00px;background:#262626;border:0.8px solid #363636;box-sizing:border-box"></div>
<div class="t" style="left:380.50px;top:347.74px;font-size:4.6px;line-height:5.52px;color:#606060;">Read</div>
<div style="left:407.25px;top:350.20px;width:2.50px;height:0.80px;background:#555;"></div>
<div class="t" style="left:380.50px;top:357.72px;font-size:4.3px;line-height:5.16px;color:#aaa;">M</div>
<div class="t" style="left:388.50px;top:357.72px;font-size:4.3px;line-height:5.16px;color:#aaa;">S</div>
<div class="t" style="left:396.50px;top:357.72px;font-size:4.3px;line-height:5.16px;color:#3a3a3a;">R</div>
<div class="t" style="left:403.50px;top:357.72px;font-size:4.3px;line-height:5.16px;color:#3a3a3a;">I</div>
<div class="t" style="left:379.50px;top:368.58px;font-size:3.2px;line-height:3.84px;color:#8a8a8a;">dB</div>
<div class="t" style="left:379.50px;top:372.98px;font-size:3.2px;line-height:3.84px;color:#8a8a8a;">0</div>
<div class="t" style="left:379.50px;top:377.38px;font-size:3.2px;line-height:3.84px;color:#8a8a8a;">6</div>
<div class="t" style="left:379.50px;top:381.78px;font-size:3.2px;line-height:3.84px;color:#8a8a8a;">-6</div>
<div class="t" style="left:379.50px;top:386.18px;font-size:3.2px;line-height:3.84px;color:#8a8a8a;">-12</div>
<div class="t" style="left:379.50px;top:390.58px;font-size:3.2px;line-height:3.84px;color:#8a8a8a;">-18</div>
<div class="t" style="left:379.50px;top:394.98px;font-size:3.2px;line-height:3.84px;color:#8a8a8a;">-24</div>
<div class="t" style="left:379.50px;top:399.38px;font-size:3.2px;line-height:3.84px;color:#8a8a8a;">-42</div>
<div class="t" style="left:379.50px;top:403.78px;font-size:3.2px;line-height:3.84px;color:#8a8a8a;">-&infin;</div>
<div style="left:387.50px;top:372.00px;width:3.00px;height:0.50px;background:#666;"></div>
<div style="left:387.50px;top:376.60px;width:3.00px;height:0.50px;background:#666;"></div>
<div style="left:387.50px;top:381.20px;width:3.00px;height:0.50px;background:#666;"></div>
<div style="left:387.50px;top:385.80px;width:3.00px;height:0.50px;background:#666;"></div>
<div style="left:387.50px;top:390.40px;width:3.00px;height:0.50px;background:#666;"></div>
<div style="left:387.50px;top:395.00px;width:3.00px;height:0.50px;background:#666;"></div>
<div style="left:387.50px;top:399.60px;width:3.00px;height:0.50px;background:#666;"></div>
<div style="left:387.50px;top:404.20px;width:3.00px;height:0.50px;background:#666;"></div>
<div style="left:387.00px;top:376.50px;width:6.20px;height:12.20px;background:#1a1a1a;border:1px solid #c07a6c;border-radius:1px;box-sizing:border-box"></div>
<div style="left:388.00px;top:382.30px;width:4.20px;height:0.70px;background:#c07a6c;"></div>
<div style="left:396.20px;top:368.40px;width:7.00px;height:39.80px;background:#121212;"></div>
<div style="left:396.70px;top:374.00px;width:2.90px;height:34.00px;background:#1fe02c;"></div>
<div style="left:396.70px;top:374.00px;width:2.90px;height:11.00px;background:#d8c22a;"></div>
<div style="left:399.80px;top:373.00px;width:2.90px;height:35.00px;background:#1fe02c;"></div>
<div style="left:399.80px;top:373.00px;width:2.90px;height:12.00px;background:#d8c22a;"></div>
<div class="t" style="left:407.50px;top:370.42px;font-size:4.3px;line-height:5.16px;color:#b8b8b8;">0</div>
<div style="left:405.00px;top:394.30px;width:2.00px;height:0.60px;background:#999;"></div>
<div class="t" style="left:407.00px;top:391.92px;font-size:4.3px;line-height:5.16px;color:#b8b8b8;">-36</div>
<div class="t" style="left:407.00px;top:403.42px;font-size:4.3px;line-height:5.16px;color:#b8b8b8;">dB</div>
<div style="left:382.80px;top:415.60px;width:4.60px;height:6.00px;background:#173552;border-radius:50%"></div>
<div class="t" style="left:383.90px;top:416.02px;font-size:4.3px;line-height:5.16px;color:#5aa0e0;">0</div>
<div class="t" style="left:396.00px;top:415.60px;font-size:5px;line-height:6.00px;color:#e8e8e8;font-weight:bold">-4.2</div>
<div style="left:376.50px;top:423.80px;width:36.95px;height:0.80px;background:#181818;"></div>
<div style="left:380.00px;top:429.30px;width:5.00px;height:1.00px;background:#cfcfcf;"></div>
<div class="t" style="left:387.50px;top:426.80px;font-size:5px;line-height:6.00px;color:#dedede;">Track 3</div>
<div style="left:376.50px;top:434.30px;width:36.95px;height:5.80px;background:#b0665b;"></div>
<div style="left:376.50px;top:434.30px;width:6.00px;height:5.80px;background:rgba(255,255,255,0.15);"></div>
<div style="left:407.45px;top:434.80px;width:4.80px;height:4.80px;background:#b0665b;border-radius:50%;border:0.9px solid rgba(255,255,255,0.6);box-sizing:border-box;filter:saturate(1.5) brightness(1.1)"></div>
<div style="left:414.25px;top:270.00px;width:36.95px;height:177.00px;background:#252525;"></div>
<div style="left:416.25px;top:273.60px;width:4.00px;height:4.00px;background:#555;border-radius:0.5px"></div>
<div style="left:443.25px;top:272.80px;width:6.00px;height:6.00px;background:transparent;border:1px solid #999;border-radius:1px;box-sizing:border-box"></div>
<svg style="position:absolute;left:444.25px;top:273.80px;overflow:visible" width="4" height="4" viewBox="0 0 4 4"><path d="M0.5 3.5 L3.5 0.5" stroke="#aaa" stroke-width="0.8"/></svg>
<div style="left:416.25px;top:281.00px;width:32.75px;height:8.00px;background:#262626;border:0.8px solid #363636;box-sizing:border-box"></div>
<div class="t" style="left:418.25px;top:282.24px;font-size:4.6px;line-height:5.52px;color:#606060;">Default Ster</div>
<div style="left:445.00px;top:284.70px;width:2.50px;height:0.80px;background:#555;"></div>
<div style="left:416.25px;top:290.40px;width:32.75px;height:8.00px;background:#262626;border:0.8px solid #363636;box-sizing:border-box"></div>
<div class="t" style="left:418.25px;top:291.64px;font-size:4.6px;line-height:5.52px;color:#606060;">Master</div>
<div style="left:445.00px;top:294.10px;width:2.50px;height:0.80px;background:#555;"></div>
<div style="left:414.25px;top:300.30px;width:36.95px;height:0.80px;background:#1a1a1a;"></div>
<div class="t" style="left:417.25px;top:303.58px;font-size:5.2px;line-height:6.24px;color:#e0e0e0;"><i>fx</i></div>
<div style="left:425.05px;top:303.70px;width:6.00px;height:6.00px;background:#121212;border:1px solid #c0c0c0;border-radius:50%;box-sizing:border-box"></div>
<svg style="position:absolute;left:433.75px;top:304.20px;overflow:visible" width="5" height="5" viewBox="0 0 5 5"><path d="M0.3 2.5 L2.3 1 V4 Z M3.2 0.3 V4.7" stroke="#ccc" stroke-width="0.8" fill="#ccc"/></svg>
<svg style="position:absolute;left:442.75px;top:304.40px;overflow:visible" width="5" height="5" viewBox="0 0 5 5"><path d="M2.3 0.2 L4.4 2.3 L2.3 4.4 L0.2 2.3 Z" fill="#cfcfcf"/></svg>
<div style="left:414.25px;top:312.20px;width:36.95px;height:0.80px;background:#1a1a1a;"></div>
<div class="t" style="left:416.75px;top:315.54px;font-size:4.6px;line-height:5.52px;color:#bdbdbd;">S1</div>
<div style="left:430.25px;top:315.30px;width:6.00px;height:6.00px;background:#121212;border:1px solid #c0c0c0;border-radius:50%;box-sizing:border-box"></div>
<div style="left:438.25px;top:314.90px;width:7.00px;height:6.80px;background:#6e1626;border-radius:1.5px"></div>
<div style="left:440.25px;top:316.50px;width:1.00px;height:3.60px;background:#f0d0d0;"></div>
<div style="left:441.75px;top:317.50px;width:2.00px;height:1.60px;background:#f0d0d0;"></div>
<div style="left:414.25px;top:324.20px;width:36.95px;height:0.80px;background:#1a1a1a;"></div>
<div style="left:414.25px;top:325.00px;width:36.95px;height:10.30px;background:#212121;"></div>
<div style="left:414.25px;top:335.30px;width:36.95px;height:0.80px;background:#1a1a1a;"></div>
<div style="left:417.75px;top:337.30px;width:6.20px;height:6.20px;background:transparent;border:1.1px solid #c8c8c8;border-radius:50%;box-sizing:border-box"></div>
<div style="left:420.45px;top:337.90px;width:0.80px;height:2.40px;background:#c8c8c8;"></div>
<div style="left:424.75px;top:337.50px;width:4.00px;height:5.60px;background:#17324f;border-radius:1px"></div>
<div class="t" style="left:425.55px;top:337.60px;font-size:4.5px;line-height:5.40px;color:#3d8fe0;">0</div>
<div style="left:443.25px;top:339.70px;width:5.00px;height:1.20px;background:#888;"></div>
<div style="left:414.25px;top:345.30px;width:36.95px;height:0.80px;background:#1a1a1a;"></div>
<div style="left:416.25px;top:346.50px;width:32.75px;height:8.00px;background:#262626;border:0.8px solid #363636;box-sizing:border-box"></div>
<div class="t" style="left:418.25px;top:347.74px;font-size:4.6px;line-height:5.52px;color:#606060;">Read</div>
<div style="left:445.00px;top:350.20px;width:2.50px;height:0.80px;background:#555;"></div>
<div class="t" style="left:418.25px;top:357.72px;font-size:4.3px;line-height:5.16px;color:#aaa;">M</div>
<div class="t" style="left:426.25px;top:357.72px;font-size:4.3px;line-height:5.16px;color:#aaa;">S</div>
<div class="t" style="left:434.25px;top:357.72px;font-size:4.3px;line-height:5.16px;color:#3a3a3a;">R</div>
<div class="t" style="left:441.25px;top:357.72px;font-size:4.3px;line-height:5.16px;color:#3a3a3a;">I</div>
<div class="t" style="left:417.25px;top:368.58px;font-size:3.2px;line-height:3.84px;color:#8a8a8a;">dB</div>
<div class="t" style="left:417.25px;top:372.98px;font-size:3.2px;line-height:3.84px;color:#8a8a8a;">0</div>
<div class="t" style="left:417.25px;top:377.38px;font-size:3.2px;line-height:3.84px;color:#8a8a8a;">6</div>
<div class="t" style="left:417.25px;top:381.78px;font-size:3.2px;line-height:3.84px;color:#8a8a8a;">-6</div>
<div class="t" style="left:417.25px;top:386.18px;font-size:3.2px;line-height:3.84px;color:#8a8a8a;">-12</div>
<div class="t" style="left:417.25px;top:390.58px;font-size:3.2px;line-height:3.84px;color:#8a8a8a;">-18</div>
<div class="t" style="left:417.25px;top:394.98px;font-size:3.2px;line-height:3.84px;color:#8a8a8a;">-24</div>
<div class="t" style="left:417.25px;top:399.38px;font-size:3.2px;line-height:3.84px;color:#8a8a8a;">-42</div>
<div class="t" style="left:417.25px;top:403.78px;font-size:3.2px;line-height:3.84px;color:#8a8a8a;">-&infin;</div>
<div style="left:425.25px;top:372.00px;width:3.00px;height:0.50px;background:#666;"></div>
<div style="left:425.25px;top:376.60px;width:3.00px;height:0.50px;background:#666;"></div>
<div style="left:425.25px;top:381.20px;width:3.00px;height:0.50px;background:#666;"></div>
<div style="left:425.25px;top:385.80px;width:3.00px;height:0.50px;background:#666;"></div>
<div style="left:425.25px;top:390.40px;width:3.00px;height:0.50px;background:#666;"></div>
<div style="left:425.25px;top:395.00px;width:3.00px;height:0.50px;background:#666;"></div>
<div style="left:425.25px;top:399.60px;width:3.00px;height:0.50px;background:#666;"></div>
<div style="left:425.25px;top:404.20px;width:3.00px;height:0.50px;background:#666;"></div>
<div style="left:424.75px;top:376.50px;width:6.20px;height:12.20px;background:#1a1a1a;border:1px solid #c070c0;border-radius:1px;box-sizing:border-box"></div>
<div style="left:425.75px;top:382.30px;width:4.20px;height:0.70px;background:#c070c0;"></div>
<div style="left:433.95px;top:368.40px;width:7.00px;height:39.80px;background:#121212;"></div>
<div style="left:434.45px;top:375.00px;width:2.90px;height:33.00px;background:#1fe02c;"></div>
<div style="left:434.45px;top:375.00px;width:2.90px;height:10.00px;background:#d8c22a;"></div>
<div style="left:437.55px;top:374.00px;width:2.90px;height:34.00px;background:#1fe02c;"></div>
<div style="left:437.55px;top:374.00px;width:2.90px;height:11.00px;background:#d8c22a;"></div>
<div class="t" style="left:445.25px;top:370.42px;font-size:4.3px;line-height:5.16px;color:#b8b8b8;">0</div>
<div style="left:442.75px;top:394.30px;width:2.00px;height:0.60px;background:#999;"></div>
<div class="t" style="left:444.75px;top:391.92px;font-size:4.3px;line-height:5.16px;color:#b8b8b8;">-36</div>
<div class="t" style="left:444.75px;top:403.42px;font-size:4.3px;line-height:5.16px;color:#b8b8b8;">dB</div>
<div style="left:420.55px;top:415.60px;width:4.60px;height:6.00px;background:#173552;border-radius:50%"></div>
<div class="t" style="left:421.65px;top:416.02px;font-size:4.3px;line-height:5.16px;color:#5aa0e0;">0</div>
<div class="t" style="left:433.75px;top:415.60px;font-size:5px;line-height:6.00px;color:#e8e8e8;font-weight:bold">-5.3</div>
<div style="left:414.25px;top:423.80px;width:36.95px;height:0.80px;background:#181818;"></div>
<div style="left:417.75px;top:429.30px;width:5.00px;height:1.00px;background:#cfcfcf;"></div>
<div class="t" style="left:425.25px;top:426.80px;font-size:5px;line-height:6.00px;color:#dedede;">Track 4</div>
<div style="left:414.25px;top:434.30px;width:36.95px;height:5.80px;background:#a84fa8;"></div>
<div style="left:414.25px;top:434.30px;width:6.00px;height:5.80px;background:rgba(255,255,255,0.15);"></div>
<div style="left:445.20px;top:434.80px;width:4.80px;height:4.80px;background:#a84fa8;border-radius:50%;border:0.9px solid rgba(255,255,255,0.6);box-sizing:border-box;filter:saturate(1.5) brightness(1.1)"></div>
<div style="left:452.00px;top:270.00px;width:36.95px;height:177.00px;background:#252525;"></div>
<div style="left:454.00px;top:273.60px;width:4.00px;height:4.00px;background:#555;border-radius:0.5px"></div>
<div style="left:481.00px;top:272.80px;width:6.00px;height:6.00px;background:transparent;border:1px solid #999;border-radius:1px;box-sizing:border-box"></div>
<svg style="position:absolute;left:482.00px;top:273.80px;overflow:visible" width="4" height="4" viewBox="0 0 4 4"><path d="M0.5 3.5 L3.5 0.5" stroke="#aaa" stroke-width="0.8"/></svg>
<div style="left:454.00px;top:281.00px;width:32.75px;height:8.00px;background:#262626;border:0.8px solid #363636;box-sizing:border-box"></div>
<div class="t" style="left:456.00px;top:282.24px;font-size:4.6px;line-height:5.52px;color:#606060;">Default Ster</div>
<div style="left:482.75px;top:284.70px;width:2.50px;height:0.80px;background:#555;"></div>
<div style="left:454.00px;top:290.40px;width:32.75px;height:8.00px;background:#262626;border:0.8px solid #363636;box-sizing:border-box"></div>
<div class="t" style="left:456.00px;top:291.64px;font-size:4.6px;line-height:5.52px;color:#606060;">Master</div>
<div style="left:482.75px;top:294.10px;width:2.50px;height:0.80px;background:#555;"></div>
<div style="left:452.00px;top:300.30px;width:36.95px;height:0.80px;background:#1a1a1a;"></div>
<div class="t" style="left:455.00px;top:303.58px;font-size:5.2px;line-height:6.24px;color:#e0e0e0;"><i>fx</i></div>
<div style="left:462.80px;top:303.70px;width:6.00px;height:6.00px;background:#121212;border:1px solid #c0c0c0;border-radius:50%;box-sizing:border-box"></div>
<svg style="position:absolute;left:471.50px;top:304.20px;overflow:visible" width="5" height="5" viewBox="0 0 5 5"><path d="M0.3 2.5 L2.3 1 V4 Z M3.2 0.3 V4.7" stroke="#ccc" stroke-width="0.8" fill="#ccc"/></svg>
<svg style="position:absolute;left:480.50px;top:304.40px;overflow:visible" width="5" height="5" viewBox="0 0 5 5"><path d="M2.3 0.2 L4.4 2.3 L2.3 4.4 L0.2 2.3 Z" fill="#cfcfcf"/></svg>
<div style="left:452.00px;top:312.20px;width:36.95px;height:0.80px;background:#1a1a1a;"></div>
<div class="t" style="left:454.50px;top:315.54px;font-size:4.6px;line-height:5.52px;color:#bdbdbd;">S1</div>
<div style="left:468.00px;top:315.30px;width:6.00px;height:6.00px;background:#121212;border:1px solid #c0c0c0;border-radius:50%;box-sizing:border-box"></div>
<div style="left:476.00px;top:314.90px;width:7.00px;height:6.80px;background:#6e1626;border-radius:1.5px"></div>
<div style="left:478.00px;top:316.50px;width:1.00px;height:3.60px;background:#f0d0d0;"></div>
<div style="left:479.50px;top:317.50px;width:2.00px;height:1.60px;background:#f0d0d0;"></div>
<div style="left:452.00px;top:324.20px;width:36.95px;height:0.80px;background:#1a1a1a;"></div>
<div style="left:452.00px;top:325.00px;width:36.95px;height:10.30px;background:#212121;"></div>
<div style="left:452.00px;top:335.30px;width:36.95px;height:0.80px;background:#1a1a1a;"></div>
<div style="left:455.50px;top:337.30px;width:6.20px;height:6.20px;background:transparent;border:1.1px solid #c8c8c8;border-radius:50%;box-sizing:border-box"></div>
<div style="left:458.20px;top:337.90px;width:0.80px;height:2.40px;background:#c8c8c8;"></div>
<div style="left:462.50px;top:337.50px;width:4.00px;height:5.60px;background:#17324f;border-radius:1px"></div>
<div class="t" style="left:463.30px;top:337.60px;font-size:4.5px;line-height:5.40px;color:#3d8fe0;">0</div>
<div style="left:481.00px;top:339.70px;width:5.00px;height:1.20px;background:#888;"></div>
<div style="left:452.00px;top:345.30px;width:36.95px;height:0.80px;background:#1a1a1a;"></div>
<div style="left:454.00px;top:346.50px;width:32.75px;height:8.00px;background:#262626;border:0.8px solid #363636;box-sizing:border-box"></div>
<div class="t" style="left:456.00px;top:347.74px;font-size:4.6px;line-height:5.52px;color:#606060;">Read</div>
<div style="left:482.75px;top:350.20px;width:2.50px;height:0.80px;background:#555;"></div>
<div class="t" style="left:456.00px;top:357.72px;font-size:4.3px;line-height:5.16px;color:#aaa;">M</div>
<div class="t" style="left:464.00px;top:357.72px;font-size:4.3px;line-height:5.16px;color:#aaa;">S</div>
<div class="t" style="left:472.00px;top:357.72px;font-size:4.3px;line-height:5.16px;color:#3a3a3a;">R</div>
<div class="t" style="left:479.00px;top:357.72px;font-size:4.3px;line-height:5.16px;color:#3a3a3a;">I</div>
<div class="t" style="left:455.00px;top:368.58px;font-size:3.2px;line-height:3.84px;color:#8a8a8a;">dB</div>
<div class="t" style="left:455.00px;top:372.98px;font-size:3.2px;line-height:3.84px;color:#8a8a8a;">0</div>
<div class="t" style="left:455.00px;top:377.38px;font-size:3.2px;line-height:3.84px;color:#8a8a8a;">6</div>
<div class="t" style="left:455.00px;top:381.78px;font-size:3.2px;line-height:3.84px;color:#8a8a8a;">-6</div>
<div class="t" style="left:455.00px;top:386.18px;font-size:3.2px;line-height:3.84px;color:#8a8a8a;">-12</div>
<div class="t" style="left:455.00px;top:390.58px;font-size:3.2px;line-height:3.84px;color:#8a8a8a;">-18</div>
<div class="t" style="left:455.00px;top:394.98px;font-size:3.2px;line-height:3.84px;color:#8a8a8a;">-24</div>
<div class="t" style="left:455.00px;top:399.38px;font-size:3.2px;line-height:3.84px;color:#8a8a8a;">-42</div>
<div class="t" style="left:455.00px;top:403.78px;font-size:3.2px;line-height:3.84px;color:#8a8a8a;">-&infin;</div>
<div style="left:463.00px;top:372.00px;width:3.00px;height:0.50px;background:#666;"></div>
<div style="left:463.00px;top:376.60px;width:3.00px;height:0.50px;background:#666;"></div>
<div style="left:463.00px;top:381.20px;width:3.00px;height:0.50px;background:#666;"></div>
<div style="left:463.00px;top:385.80px;width:3.00px;height:0.50px;background:#666;"></div>
<div style="left:463.00px;top:390.40px;width:3.00px;height:0.50px;background:#666;"></div>
<div style="left:463.00px;top:395.00px;width:3.00px;height:0.50px;background:#666;"></div>
<div style="left:463.00px;top:399.60px;width:3.00px;height:0.50px;background:#666;"></div>
<div style="left:463.00px;top:404.20px;width:3.00px;height:0.50px;background:#666;"></div>
<div style="left:462.50px;top:376.50px;width:6.20px;height:12.20px;background:#1a1a1a;border:1px solid #c8936a;border-radius:1px;box-sizing:border-box"></div>
<div style="left:463.50px;top:382.30px;width:4.20px;height:0.70px;background:#c8936a;"></div>
<div style="left:471.70px;top:368.40px;width:7.00px;height:39.80px;background:#121212;"></div>
<div style="left:472.20px;top:375.00px;width:2.90px;height:33.00px;background:#1fe02c;"></div>
<div style="left:472.20px;top:375.00px;width:2.90px;height:10.00px;background:#d8c22a;"></div>
<div style="left:475.30px;top:374.00px;width:2.90px;height:34.00px;background:#1fe02c;"></div>
<div style="left:475.30px;top:374.00px;width:2.90px;height:11.00px;background:#d8c22a;"></div>
<div class="t" style="left:483.00px;top:370.42px;font-size:4.3px;line-height:5.16px;color:#b8b8b8;">0</div>
<div style="left:480.50px;top:394.30px;width:2.00px;height:0.60px;background:#999;"></div>
<div class="t" style="left:482.50px;top:391.92px;font-size:4.3px;line-height:5.16px;color:#b8b8b8;">-36</div>
<div class="t" style="left:482.50px;top:403.42px;font-size:4.3px;line-height:5.16px;color:#b8b8b8;">dB</div>
<div style="left:458.30px;top:415.60px;width:4.60px;height:6.00px;background:#173552;border-radius:50%"></div>
<div class="t" style="left:459.40px;top:416.02px;font-size:4.3px;line-height:5.16px;color:#5aa0e0;">0</div>
<div class="t" style="left:471.50px;top:415.60px;font-size:5px;line-height:6.00px;color:#e8e8e8;font-weight:bold">-5.0</div>
<div style="left:452.00px;top:423.80px;width:36.95px;height:0.80px;background:#181818;"></div>
<div style="left:455.50px;top:429.30px;width:5.00px;height:1.00px;background:#cfcfcf;"></div>
<div class="t" style="left:463.00px;top:426.80px;font-size:5px;line-height:6.00px;color:#dedede;">Track 5</div>
<div style="left:452.00px;top:434.30px;width:36.95px;height:5.80px;background:#b88a5e;"></div>
<div style="left:452.00px;top:434.30px;width:6.00px;height:5.80px;background:rgba(255,255,255,0.15);"></div>
<div style="left:482.95px;top:434.80px;width:4.80px;height:4.80px;background:#b88a5e;border-radius:50%;border:0.9px solid rgba(255,255,255,0.6);box-sizing:border-box;filter:saturate(1.5) brightness(1.1)"></div>
<div style="left:489.75px;top:270.00px;width:36.95px;height:177.00px;background:#252525;"></div>
<div style="left:491.75px;top:273.60px;width:4.00px;height:4.00px;background:#555;border-radius:0.5px"></div>
<div style="left:518.75px;top:272.80px;width:6.00px;height:6.00px;background:transparent;border:1px solid #999;border-radius:1px;box-sizing:border-box"></div>
<svg style="position:absolute;left:519.75px;top:273.80px;overflow:visible" width="4" height="4" viewBox="0 0 4 4"><path d="M0.5 3.5 L3.5 0.5" stroke="#aaa" stroke-width="0.8"/></svg>
<div style="left:491.75px;top:281.00px;width:32.75px;height:8.00px;background:#262626;border:0.8px solid #363636;box-sizing:border-box"></div>
<div class="t" style="left:493.75px;top:282.24px;font-size:4.6px;line-height:5.52px;color:#606060;">Default Ster</div>
<div style="left:520.50px;top:284.70px;width:2.50px;height:0.80px;background:#555;"></div>
<div style="left:491.75px;top:290.40px;width:32.75px;height:8.00px;background:#262626;border:0.8px solid #363636;box-sizing:border-box"></div>
<div class="t" style="left:493.75px;top:291.64px;font-size:4.6px;line-height:5.52px;color:#606060;">Master</div>
<div style="left:520.50px;top:294.10px;width:2.50px;height:0.80px;background:#555;"></div>
<div style="left:489.75px;top:300.30px;width:36.95px;height:0.80px;background:#1a1a1a;"></div>
<div class="t" style="left:492.75px;top:303.58px;font-size:5.2px;line-height:6.24px;color:#e0e0e0;"><i>fx</i></div>
<div style="left:500.55px;top:303.70px;width:6.00px;height:6.00px;background:#121212;border:1px solid #c0c0c0;border-radius:50%;box-sizing:border-box"></div>
<svg style="position:absolute;left:509.25px;top:304.20px;overflow:visible" width="5" height="5" viewBox="0 0 5 5"><path d="M0.3 2.5 L2.3 1 V4 Z M3.2 0.3 V4.7" stroke="#ccc" stroke-width="0.8" fill="#ccc"/></svg>
<svg style="position:absolute;left:518.25px;top:304.40px;overflow:visible" width="5" height="5" viewBox="0 0 5 5"><path d="M2.3 0.2 L4.4 2.3 L2.3 4.4 L0.2 2.3 Z" fill="#cfcfcf"/></svg>
<div style="left:489.75px;top:312.20px;width:36.95px;height:0.80px;background:#1a1a1a;"></div>
<div class="t" style="left:492.25px;top:315.54px;font-size:4.6px;line-height:5.52px;color:#bdbdbd;">S1</div>
<div style="left:505.75px;top:315.30px;width:6.00px;height:6.00px;background:#121212;border:1px solid #c0c0c0;border-radius:50%;box-sizing:border-box"></div>
<div style="left:513.75px;top:314.90px;width:7.00px;height:6.80px;background:#6e1626;border-radius:1.5px"></div>
<div style="left:515.75px;top:316.50px;width:1.00px;height:3.60px;background:#f0d0d0;"></div>
<div style="left:517.25px;top:317.50px;width:2.00px;height:1.60px;background:#f0d0d0;"></div>
<div style="left:489.75px;top:324.20px;width:36.95px;height:0.80px;background:#1a1a1a;"></div>
<div style="left:489.75px;top:325.00px;width:36.95px;height:10.30px;background:#212121;"></div>
<div style="left:489.75px;top:335.30px;width:36.95px;height:0.80px;background:#1a1a1a;"></div>
<div style="left:493.25px;top:337.30px;width:6.20px;height:6.20px;background:transparent;border:1.1px solid #c8c8c8;border-radius:50%;box-sizing:border-box"></div>
<div style="left:495.95px;top:337.90px;width:0.80px;height:2.40px;background:#c8c8c8;"></div>
<div style="left:500.25px;top:337.50px;width:4.00px;height:5.60px;background:#17324f;border-radius:1px"></div>
<div class="t" style="left:501.05px;top:337.60px;font-size:4.5px;line-height:5.40px;color:#3d8fe0;">0</div>
<div style="left:518.75px;top:339.70px;width:5.00px;height:1.20px;background:#888;"></div>
<div style="left:489.75px;top:345.30px;width:36.95px;height:0.80px;background:#1a1a1a;"></div>
<div style="left:491.75px;top:346.50px;width:32.75px;height:8.00px;background:#262626;border:0.8px solid #363636;box-sizing:border-box"></div>
<div class="t" style="left:493.75px;top:347.74px;font-size:4.6px;line-height:5.52px;color:#606060;">Read</div>
<div style="left:520.50px;top:350.20px;width:2.50px;height:0.80px;background:#555;"></div>
<div class="t" style="left:493.75px;top:357.72px;font-size:4.3px;line-height:5.16px;color:#aaa;">M</div>
<div class="t" style="left:501.75px;top:357.72px;font-size:4.3px;line-height:5.16px;color:#aaa;">S</div>
<div class="t" style="left:509.75px;top:357.72px;font-size:4.3px;line-height:5.16px;color:#3a3a3a;">R</div>
<div class="t" style="left:516.75px;top:357.72px;font-size:4.3px;line-height:5.16px;color:#3a3a3a;">I</div>
<div class="t" style="left:492.75px;top:368.58px;font-size:3.2px;line-height:3.84px;color:#8a8a8a;">dB</div>
<div class="t" style="left:492.75px;top:372.98px;font-size:3.2px;line-height:3.84px;color:#8a8a8a;">0</div>
<div class="t" style="left:492.75px;top:377.38px;font-size:3.2px;line-height:3.84px;color:#8a8a8a;">6</div>
<div class="t" style="left:492.75px;top:381.78px;font-size:3.2px;line-height:3.84px;color:#8a8a8a;">-6</div>
<div class="t" style="left:492.75px;top:386.18px;font-size:3.2px;line-height:3.84px;color:#8a8a8a;">-12</div>
<div class="t" style="left:492.75px;top:390.58px;font-size:3.2px;line-height:3.84px;color:#8a8a8a;">-18</div>
<div class="t" style="left:492.75px;top:394.98px;font-size:3.2px;line-height:3.84px;color:#8a8a8a;">-24</div>
<div class="t" style="left:492.75px;top:399.38px;font-size:3.2px;line-height:3.84px;color:#8a8a8a;">-42</div>
<div class="t" style="left:492.75px;top:403.78px;font-size:3.2px;line-height:3.84px;color:#8a8a8a;">-&infin;</div>
<div style="left:500.75px;top:372.00px;width:3.00px;height:0.50px;background:#666;"></div>
<div style="left:500.75px;top:376.60px;width:3.00px;height:0.50px;background:#666;"></div>
<div style="left:500.75px;top:381.20px;width:3.00px;height:0.50px;background:#666;"></div>
<div style="left:500.75px;top:385.80px;width:3.00px;height:0.50px;background:#666;"></div>
<div style="left:500.75px;top:390.40px;width:3.00px;height:0.50px;background:#666;"></div>
<div style="left:500.75px;top:395.00px;width:3.00px;height:0.50px;background:#666;"></div>
<div style="left:500.75px;top:399.60px;width:3.00px;height:0.50px;background:#666;"></div>
<div style="left:500.75px;top:404.20px;width:3.00px;height:0.50px;background:#666;"></div>
<div style="left:500.25px;top:376.50px;width:6.20px;height:12.20px;background:#1a1a1a;border:1px solid #c8a070;border-radius:1px;box-sizing:border-box"></div>
<div style="left:501.25px;top:382.30px;width:4.20px;height:0.70px;background:#c8a070;"></div>
<div style="left:509.45px;top:368.40px;width:7.00px;height:39.80px;background:#121212;"></div>
<div style="left:510.45px;top:406.50px;width:5.00px;height:1.00px;background:#888;"></div>
<div class="t" style="left:520.75px;top:370.42px;font-size:4.3px;line-height:5.16px;color:#b8b8b8;">0</div>
<div style="left:518.25px;top:394.30px;width:2.00px;height:0.60px;background:#999;"></div>
<div class="t" style="left:520.25px;top:391.92px;font-size:4.3px;line-height:5.16px;color:#b8b8b8;">-36</div>
<div class="t" style="left:520.25px;top:403.42px;font-size:4.3px;line-height:5.16px;color:#b8b8b8;">dB</div>
<div style="left:496.05px;top:415.60px;width:4.60px;height:6.00px;background:#173552;border-radius:50%"></div>
<div class="t" style="left:497.15px;top:416.02px;font-size:4.3px;line-height:5.16px;color:#5aa0e0;">0</div>
<div style="left:489.75px;top:423.80px;width:36.95px;height:0.80px;background:#181818;"></div>
<div style="left:493.25px;top:429.30px;width:5.00px;height:1.00px;background:#cfcfcf;"></div>
<div class="t" style="left:500.75px;top:426.80px;font-size:5px;line-height:6.00px;color:#dedede;">Track 6</div>
<div style="left:489.75px;top:434.30px;width:36.95px;height:5.80px;background:#c39a68;"></div>
<div style="left:489.75px;top:434.30px;width:6.00px;height:5.80px;background:rgba(255,255,255,0.15);"></div>
<div style="left:520.70px;top:434.80px;width:4.80px;height:4.80px;background:#c39a68;border-radius:50%;border:0.9px solid rgba(255,255,255,0.6);box-sizing:border-box;filter:saturate(1.5) brightness(1.1)"></div>
<div style="left:613.00px;top:270.00px;width:36.95px;height:177.00px;background:#252525;"></div>
<div style="left:642.00px;top:272.80px;width:6.00px;height:6.00px;background:transparent;border:1px solid #999;border-radius:1px;box-sizing:border-box"></div>
<svg style="position:absolute;left:643.00px;top:273.80px;overflow:visible" width="4" height="4" viewBox="0 0 4 4"><path d="M0.5 3.5 L3.5 0.5" stroke="#aaa" stroke-width="0.8"/></svg>
<div style="left:615.00px;top:289.60px;width:32.75px;height:8.00px;background:#262626;border:0.8px solid #363636;box-sizing:border-box"></div>
<div class="t" style="left:617.00px;top:290.84px;font-size:4.6px;line-height:5.52px;color:#606060;">Default Ster</div>
<div style="left:643.75px;top:293.30px;width:2.50px;height:0.80px;background:#555;"></div>
<div style="left:613.00px;top:300.30px;width:36.95px;height:0.80px;background:#1a1a1a;"></div>
<div class="t" style="left:616.00px;top:303.58px;font-size:5.2px;line-height:6.24px;color:#e0e0e0;"><i>fx</i></div>
<div style="left:623.80px;top:303.70px;width:6.00px;height:6.00px;background:#121212;border:1px solid #c0c0c0;border-radius:50%;box-sizing:border-box"></div>
<svg style="position:absolute;left:632.50px;top:304.20px;overflow:visible" width="5" height="5" viewBox="0 0 5 5"><path d="M0.3 2.5 L2.3 1 V4 Z M3.2 0.3 V4.7" stroke="#ccc" stroke-width="0.8" fill="#ccc"/></svg>
<div style="left:613.00px;top:312.20px;width:36.95px;height:0.80px;background:#1a1a1a;"></div>
<div style="left:613.00px;top:324.20px;width:36.95px;height:0.80px;background:#1a1a1a;"></div>
<div style="left:613.00px;top:325.00px;width:36.95px;height:10.30px;background:#212121;"></div>
<div style="left:613.00px;top:335.30px;width:36.95px;height:0.80px;background:#1a1a1a;"></div>
<div style="left:629.00px;top:339.70px;width:6.00px;height:1.20px;background:#888;"></div>
<div style="left:613.00px;top:345.30px;width:36.95px;height:0.80px;background:#1a1a1a;"></div>
<div style="left:615.00px;top:346.50px;width:32.75px;height:8.00px;background:#262626;border:0.8px solid #363636;box-sizing:border-box"></div>
<div class="t" style="left:617.00px;top:347.74px;font-size:4.6px;line-height:5.52px;color:#606060;">Read</div>
<div style="left:643.75px;top:350.20px;width:2.50px;height:0.80px;background:#555;"></div>
<div class="t" style="left:617.00px;top:357.72px;font-size:4.3px;line-height:5.16px;color:#aaa;">M</div>
<div style="left:623.50px;top:358.30px;width:5.00px;height:4.00px;background:transparent;border:0.8px solid #999;border-radius:50%;box-sizing:border-box"></div>
<div class="t" style="left:616.00px;top:368.58px;font-size:3.2px;line-height:3.84px;color:#8a8a8a;">dB</div>
<div class="t" style="left:616.00px;top:372.98px;font-size:3.2px;line-height:3.84px;color:#8a8a8a;">0</div>
<div class="t" style="left:616.00px;top:377.38px;font-size:3.2px;line-height:3.84px;color:#8a8a8a;">6</div>
<div class="t" style="left:616.00px;top:381.78px;font-size:3.2px;line-height:3.84px;color:#8a8a8a;">-6</div>
<div class="t" style="left:616.00px;top:386.18px;font-size:3.2px;line-height:3.84px;color:#8a8a8a;">-12</div>
<div class="t" style="left:616.00px;top:390.58px;font-size:3.2px;line-height:3.84px;color:#8a8a8a;">-18</div>
<div class="t" style="left:616.00px;top:394.98px;font-size:3.2px;line-height:3.84px;color:#8a8a8a;">-24</div>
<div class="t" style="left:616.00px;top:399.38px;font-size:3.2px;line-height:3.84px;color:#8a8a8a;">-42</div>
<div class="t" style="left:616.00px;top:403.78px;font-size:3.2px;line-height:3.84px;color:#8a8a8a;">-&infin;</div>
<div style="left:624.00px;top:372.00px;width:3.00px;height:0.50px;background:#666;"></div>
<div style="left:624.00px;top:376.60px;width:3.00px;height:0.50px;background:#666;"></div>
<div style="left:624.00px;top:381.20px;width:3.00px;height:0.50px;background:#666;"></div>
<div style="left:624.00px;top:385.80px;width:3.00px;height:0.50px;background:#666;"></div>
<div style="left:624.00px;top:390.40px;width:3.00px;height:0.50px;background:#666;"></div>
<div style="left:624.00px;top:395.00px;width:3.00px;height:0.50px;background:#666;"></div>
<div style="left:624.00px;top:399.60px;width:3.00px;height:0.50px;background:#666;"></div>
<div style="left:624.00px;top:404.20px;width:3.00px;height:0.50px;background:#666;"></div>
<div style="left:623.50px;top:376.50px;width:6.20px;height:12.20px;background:#1a1a1a;border:1px solid #7aa0e0;border-radius:1px;box-sizing:border-box"></div>
<div style="left:624.50px;top:382.30px;width:4.20px;height:0.70px;background:#7aa0e0;"></div>
<div style="left:632.70px;top:368.40px;width:7.00px;height:39.80px;background:#121212;"></div>
<div style="left:633.20px;top:369.00px;width:6.00px;height:7.00px;background:#e03a3a;"></div>
<div style="left:633.20px;top:376.00px;width:6.00px;height:9.00px;background:#d8c22a;"></div>
<div style="left:633.20px;top:385.00px;width:6.00px;height:23.00px;background:#1fe02c;"></div>
<div style="left:636.00px;top:369.00px;width:0.40px;height:39.00px;background:#111;"></div>
<div class="t" style="left:644.00px;top:370.42px;font-size:4.3px;line-height:5.16px;color:#b8b8b8;">0</div>
<div style="left:641.50px;top:394.30px;width:2.00px;height:0.60px;background:#999;"></div>
<div class="t" style="left:643.50px;top:391.92px;font-size:4.3px;line-height:5.16px;color:#b8b8b8;">-36</div>
<div class="t" style="left:643.50px;top:403.42px;font-size:4.3px;line-height:5.16px;color:#b8b8b8;">dB</div>
<div style="left:619.30px;top:415.60px;width:4.60px;height:6.00px;background:#173552;border-radius:50%"></div>
<div class="t" style="left:620.40px;top:416.02px;font-size:4.3px;line-height:5.16px;color:#5aa0e0;">0</div>
<div class="t" style="left:631.00px;top:415.72px;font-size:4.8px;line-height:5.76px;color:#d0d0d0;">Over</div>
<div style="left:613.00px;top:423.80px;width:36.95px;height:0.80px;background:#181818;"></div>
<svg style="position:absolute;left:616.00px;top:427.30px;overflow:visible" width="6" height="5" viewBox="0 0 6 5"><path d="M0.5 0.5 L3 2.5 L0.5 4.5 M3 0.5 L5.5 2.5 L3 4.5" stroke="#d0d0d0" stroke-width="1" fill="none"/></svg>
<div class="t" style="left:624.00px;top:426.80px;font-size:5px;line-height:6.00px;color:#dedede;">Master</div>
<div style="left:613.00px;top:434.30px;width:36.95px;height:5.80px;background:#5674b4;"></div>
<div style="left:613.00px;top:434.30px;width:6.00px;height:5.80px;background:rgba(255,255,255,0.15);"></div>
<div style="left:643.95px;top:434.80px;width:4.80px;height:4.80px;background:#5674b4;border-radius:50%;border:0.9px solid rgba(255,255,255,0.6);box-sizing:border-box;filter:saturate(1.5) brightness(1.1)"></div>
<div class="t" style="left:621.00px;top:441.12px;font-size:4.8px;line-height:5.76px;color:#bdbdbd;">1:49.873</div>
<div style="left:650.00px;top:270.00px;width:1.00px;height:177.00px;background:#181818;"></div>
<div class="t" style="left:659.00px;top:67.12px;font-size:4.8px;line-height:5.76px;color:#ececec;">Frequency Analysis</div>
<div style="left:704.00px;top:68.20px;width:3.00px;height:3.50px;background:transparent;border-top:1px solid #777;border-bottom:1px solid #777;box-sizing:border-box"></div>
<div class="t" style="left:716.00px;top:67.00px;font-size:5px;line-height:6.00px;color:#a8a8a8;">Metadata</div>
<div style="left:659.00px;top:76.00px;width:49.00px;height:1.00px;background:#cfcfcf;"></div>
<div class="t" style="left:658.00px;top:82.00px;font-size:5px;line-height:6.00px;color:#bdbdbd;">Scale:</div>
<div style="left:673.00px;top:81.00px;width:40.00px;height:8.00px;background:#1b1b1b;"></div>
<div class="t" style="left:675.00px;top:82.00px;font-size:5px;line-height:6.00px;color:#d0d0d0;">Linear</div>
<svg style="position:absolute;left:707.00px;top:84.00px;overflow:visible" width="4" height="2.5" viewBox="0 0 4 2.5"><path d="M0.3 0.3 L2 2 L3.7 0.3" stroke="#aaa" stroke-width="0.8" fill="none"/></svg>
<div style="left:719.50px;top:82.00px;width:4.50px;height:4.50px;background:transparent;border:1px solid #c8c8c8;border-radius:50%;box-sizing:border-box"></div>
<div style="left:723.50px;top:86.00px;width:1.80px;height:0.90px;background:#c8c8c8;transform:rotate(45deg)"></div>
<div class="t" style="left:733.00px;top:82.00px;font-size:5px;line-height:6.00px;color:#bdbdbd;">Hold:</div>
<div class="t" style="left:748.30px;top:82.00px;font-size:5px;line-height:6.00px;color:#cfcfcf;">1</div>
<div style="left:744.50px;top:89.80px;width:10.20px;height:1.60px;background:#d03a3a;border-radius:1px"></div>
<div class="t" style="left:758.90px;top:82.00px;font-size:5px;line-height:6.00px;color:#cfcfcf;">2</div>
<div style="left:755.10px;top:89.80px;width:10.20px;height:1.60px;background:#e09a30;border-radius:1px"></div>
<div class="t" style="left:769.50px;top:82.00px;font-size:5px;line-height:6.00px;color:#cfcfcf;">3</div>
<div style="left:765.70px;top:89.80px;width:10.20px;height:1.60px;background:#e0d040;border-radius:1px"></div>
<div class="t" style="left:780.10px;top:82.00px;font-size:5px;line-height:6.00px;color:#cfcfcf;">4</div>
<div style="left:776.30px;top:89.80px;width:10.20px;height:1.60px;background:#40c040;border-radius:1px"></div>
<div style="left:661.00px;top:96.80px;width:106.00px;height:66.70px;background:#020202;"></div>
<svg style="position:absolute;left:661.00px;top:96.80px;overflow:visible" width="106" height="66.7" viewBox="0 0 106 66.7"><rect x="0" y="6.7" width="106" height="0.4" fill="#141414"/><rect x="0" y="13.3" width="106" height="0.4" fill="#141414"/><rect x="0" y="20.0" width="106" height="0.4" fill="#141414"/><rect x="0" y="26.7" width="106" height="0.4" fill="#141414"/><rect x="0" y="33.4" width="106" height="0.4" fill="#141414"/><rect x="0" y="40.0" width="106" height="0.4" fill="#141414"/><rect x="0" y="46.7" width="106" height="0.4" fill="#141414"/><rect x="0" y="53.4" width="106" height="0.4" fill="#141414"/><rect x="0" y="60.0" width="106" height="0.4" fill="#141414"/><rect x="21.3" y="0" width="0.4" height="66.7" fill="#141414"/><rect x="42.6" y="0" width="0.4" height="66.7" fill="#141414"/><rect x="63.9" y="0" width="0.4" height="66.7" fill="#141414"/><rect x="85.2" y="0" width="0.4" height="66.7" fill="#141414"/></svg>
<div class="t" style="left:664.00px;top:98.42px;font-size:4.3px;line-height:5.16px;color:#555;">Live CH</div>
<svg style="position:absolute;left:661.00px;top:96.80px;overflow:visible" width="106" height="66.7" viewBox="0 0 106 66.7"><path d="M0.0,9.6 L0.8,10.3 L1.6,10.8 L2.4,11.6 L3.2,17.7 L4.0,18.9 L4.8,15.3 L5.6,17.6 L6.4,20.2 L7.2,19.3 L8.0,20.8 L8.8,17.7 L9.6,19.7 L10.4,19.1 L11.2,21.3 L12.0,23.1 L12.8,21.7 L13.6,23.4 L14.4,24.5 L15.2,28.2 L16.0,28.4 L16.8,26.5 L17.6,30.1 L18.4,28.0 L19.2,31.0 L20.0,29.7 L20.8,30.0 L21.6,34.7 L22.4,32.6 L23.2,33.5 L24.0,37.8 L24.8,38.2 L25.6,34.7 L26.4,36.8 L27.2,34.1 L28.0,33.8 L28.8,31.5 L29.6,34.7 L30.4,33.4 L31.2,34.5 L32.0,34.0 L32.8,31.1 L33.6,31.6 L34.4,30.9 L35.2,31.1 L36.0,30.9 L36.8,32.2 L37.6,33.8 L38.4,31.2 L39.2,34.1 L40.0,32.4 L40.8,32.2 L41.6,34.3 L42.4,32.7 L43.2,31.8 L44.0,32.4 L44.8,33.3 L45.6,30.2 L46.4,34.2 L47.2,29.8 L48.0,33.0 L48.8,33.3 L49.6,29.4 L50.4,32.9 L51.2,31.2 L52.0,32.4 L52.8,30.1 L53.6,30.4 L54.4,31.3 L55.2,35.0 L56.0,31.8 L56.8,34.6 L57.6,35.7 L58.4,36.2 L59.2,33.9 L60.0,34.3 L60.8,35.5 L61.6,37.0 L62.4,34.5 L63.2,37.9 L64.0,38.7 L64.8,39.5 L65.6,36.3 L66.4,41.1 L67.2,38.5 L68.0,40.9 L68.8,43.5 L69.6,46.1 L70.4,44.8 L71.2,48.8 L72.0,48.1 L72.8,46.3 L73.6,45.5 L74.4,44.1 L75.2,43.0 L76.0,42.8 L76.8,44.7 L77.6,45.6 L78.4,41.3 L79.2,40.3 L80.0,44.0 L80.8,43.9 L81.6,46.0 L82.4,48.0 L83.2,52.3 L84.0,56.1 L84.8,59.6 L85.6,58.0 L86.4,52.8 L87.2,53.1 L88.0,59.3 L88.8,59.9 L89.6,54.9 L90.4,53.1 L91.2,56.3 L92.0,60.7 L92.8,57.7 L93.6,53.5 L94.4,53.8 L95.2,58.5 L96.0,60.6 L96.8,55.5 L97.6,52.7 L98.4,56.4 L99.2,61.0 L100.0,58.5 L100.8,53.8 L101.6,54.8 L102.4,59.7 L103.2,60.2 L104.0,56.0" fill="none" stroke="#53c4b4" stroke-width="1.1"/><path d="M0.0,10.4 L0.8,11.0 L1.6,11.4 L2.4,12.0 L3.2,18.4 L4.0,19.3 L4.8,16.9 L5.6,18.7 L6.4,20.6 L7.2,20.1 L8.0,21.3 L8.8,19.2 L9.6,20.7 L10.4,20.4 L11.2,22.3 L12.0,24.0 L12.8,23.4 L13.6,24.8 L14.4,25.8 L15.2,28.7 L16.0,29.0 L16.8,27.9 L17.6,30.7 L18.4,29.5 L19.2,31.9 L20.0,31.2 L20.8,31.6 L21.6,35.2 L22.4,34.0 L23.2,34.9 L24.0,38.2 L24.8,38.7 L25.6,36.0 L26.4,37.2 L27.2,35.0 L28.0,34.6 L28.8,32.9 L29.6,35.1 L30.4,34.1 L31.2,34.8 L32.0,34.4 L32.8,32.4 L33.6,32.7 L34.4,32.4 L35.2,32.5 L36.0,32.5 L36.8,33.5 L37.6,34.7 L38.4,32.9 L39.2,34.9 L40.0,33.7 L40.8,33.4 L41.6,34.9 L42.4,33.7 L43.2,33.1 L44.0,33.4 L44.8,34.0 L45.6,31.8 L46.4,34.6 L47.2,31.5 L48.0,33.6 L48.8,33.8 L49.6,31.0 L50.4,33.5 L51.2,32.4 L52.0,33.3 L52.8,31.7 L53.6,32.1 L54.4,32.7 L55.2,35.4 L56.0,33.2 L56.8,35.2 L57.6,36.2 L58.4,36.6 L59.2,35.1 L60.0,35.5 L60.8,36.5 L61.6,37.7 L62.4,36.0 L63.2,38.6 L64.0,39.3 L64.8,40.0 L65.6,38.0 L66.4,41.5 L67.2,40.1 L68.0,42.2 L68.8,44.3 L69.6,46.6 L70.4,46.1 L71.2,49.2 L72.0,49.0 L72.8,47.5 L73.6,46.8 L74.4,45.6 L75.2,44.5 L76.0,44.3 L76.8,45.5 L77.6,45.9 L78.4,42.8 L79.2,41.9 L80.0,44.4 L80.8,44.8 L81.6,47.2 L82.4,49.4 L83.2,53.2 L84.0,56.7 L84.8,59.6 L85.6,58.4 L86.4,54.8 L87.2,55.0 L88.0,59.4 L88.8,59.8 L89.6,56.3 L90.4,55.0 L91.2,57.3 L92.0,60.4 L92.8,58.3 L93.6,55.4 L94.4,55.6 L95.2,58.9 L96.0,60.4 L96.8,56.9 L97.6,54.9 L98.4,57.5 L99.2,60.8 L100.0,59.0 L100.8,55.7 L101.6,56.4 L102.4,59.8 L103.2,60.2 L104.0,57.3" fill="none" stroke="#5a8ad8" stroke-width="0.6" opacity="0.7"/></svg>
<div class="t" style="left:773.00px;top:94.88px;font-size:4.2px;line-height:5.04px;color:#c4c4c4;">dB</div>
<div style="left:767.50px;top:101.60px;width:2.00px;height:0.50px;background:#888;"></div>
<div class="t" style="left:772.50px;top:99.08px;font-size:4.2px;line-height:5.04px;color:#c4c4c4;">0</div>
<div style="left:767.50px;top:107.65px;width:2.00px;height:0.50px;background:#888;"></div>
<div class="t" style="left:772.50px;top:105.13px;font-size:4.2px;line-height:5.04px;color:#c4c4c4;">&minus;10</div>
<div style="left:767.50px;top:113.70px;width:2.00px;height:0.50px;background:#888;"></div>
<div class="t" style="left:772.50px;top:111.18px;font-size:4.2px;line-height:5.04px;color:#c4c4c4;">&minus;20</div>
<div style="left:767.50px;top:119.75px;width:2.00px;height:0.50px;background:#888;"></div>
<div class="t" style="left:772.50px;top:117.23px;font-size:4.2px;line-height:5.04px;color:#c4c4c4;">&minus;30</div>
<div style="left:767.50px;top:125.80px;width:2.00px;height:0.50px;background:#888;"></div>
<div class="t" style="left:772.50px;top:123.28px;font-size:4.2px;line-height:5.04px;color:#c4c4c4;">&minus;40</div>
<div style="left:767.50px;top:131.85px;width:2.00px;height:0.50px;background:#888;"></div>
<div class="t" style="left:772.50px;top:129.33px;font-size:4.2px;line-height:5.04px;color:#c4c4c4;">&minus;50</div>
<div style="left:767.50px;top:137.90px;width:2.00px;height:0.50px;background:#888;"></div>
<div class="t" style="left:772.50px;top:135.38px;font-size:4.2px;line-height:5.04px;color:#c4c4c4;">&minus;60</div>
<div style="left:767.50px;top:143.95px;width:2.00px;height:0.50px;background:#888;"></div>
<div class="t" style="left:772.50px;top:141.43px;font-size:4.2px;line-height:5.04px;color:#c4c4c4;">&minus;70</div>
<div style="left:767.50px;top:150.00px;width:2.00px;height:0.50px;background:#888;"></div>
<div class="t" style="left:772.50px;top:147.48px;font-size:4.2px;line-height:5.04px;color:#c4c4c4;">&minus;80</div>
<div style="left:767.50px;top:156.05px;width:2.00px;height:0.50px;background:#888;"></div>
<div class="t" style="left:772.50px;top:153.53px;font-size:4.2px;line-height:5.04px;color:#c4c4c4;">&minus;90</div>
<div style="left:767.50px;top:162.10px;width:2.00px;height:0.50px;background:#888;"></div>
<div class="t" style="left:772.50px;top:159.58px;font-size:4.2px;line-height:5.04px;color:#c4c4c4;">&minus;100</div>
<div style="left:767.50px;top:97.00px;width:1.00px;height:0.40px;background:#555;"></div>
<div style="left:767.50px;top:98.67px;width:1.00px;height:0.40px;background:#555;"></div>
<div style="left:767.50px;top:100.34px;width:1.00px;height:0.40px;background:#555;"></div>
<div style="left:767.50px;top:102.01px;width:1.00px;height:0.40px;background:#555;"></div>
<div style="left:767.50px;top:103.68px;width:1.00px;height:0.40px;background:#555;"></div>
<div style="left:767.50px;top:105.35px;width:1.00px;height:0.40px;background:#555;"></div>
<div style="left:767.50px;top:107.02px;width:1.00px;height:0.40px;background:#555;"></div>
<div style="left:767.50px;top:108.69px;width:1.00px;height:0.40px;background:#555;"></div>
<div style="left:767.50px;top:110.36px;width:1.00px;height:0.40px;background:#555;"></div>
<div style="left:767.50px;top:112.03px;width:1.00px;height:0.40px;background:#555;"></div>
<div style="left:767.50px;top:113.70px;width:1.00px;height:0.40px;background:#555;"></div>
<div style="left:767.50px;top:115.37px;width:1.00px;height:0.40px;background:#555;"></div>
<div style="left:767.50px;top:117.04px;width:1.00px;height:0.40px;background:#555;"></div>
<div style="left:767.50px;top:118.71px;width:1.00px;height:0.40px;background:#555;"></div>
<div style="left:767.50px;top:120.38px;width:1.00px;height:0.40px;background:#555;"></div>
<div style="left:767.50px;top:122.05px;width:1.00px;height:0.40px;background:#555;"></div>
<div style="left:767.50px;top:123.72px;width:1.00px;height:0.40px;background:#555;"></div>
<div style="left:767.50px;top:125.39px;width:1.00px;height:0.40px;background:#555;"></div>
<div style="left:767.50px;top:127.06px;width:1.00px;height:0.40px;background:#555;"></div>
<div style="left:767.50px;top:128.73px;width:1.00px;height:0.40px;background:#555;"></div>
<div style="left:767.50px;top:130.40px;width:1.00px;height:0.40px;background:#555;"></div>
<div style="left:767.50px;top:132.07px;width:1.00px;height:0.40px;background:#555;"></div>
<div style="left:767.50px;top:133.74px;width:1.00px;height:0.40px;background:#555;"></div>
<div style="left:767.50px;top:135.41px;width:1.00px;height:0.40px;background:#555;"></div>
<div style="left:767.50px;top:137.08px;width:1.00px;height:0.40px;background:#555;"></div>
<div style="left:767.50px;top:138.75px;width:1.00px;height:0.40px;background:#555;"></div>
<div style="left:767.50px;top:140.42px;width:1.00px;height:0.40px;background:#555;"></div>
<div style="left:767.50px;top:142.09px;width:1.00px;height:0.40px;background:#555;"></div>
<div style="left:767.50px;top:143.76px;width:1.00px;height:0.40px;background:#555;"></div>
<div style="left:767.50px;top:145.43px;width:1.00px;height:0.40px;background:#555;"></div>
<div style="left:767.50px;top:147.10px;width:1.00px;height:0.40px;background:#555;"></div>
<div style="left:767.50px;top:148.77px;width:1.00px;height:0.40px;background:#555;"></div>
<div style="left:767.50px;top:150.44px;width:1.00px;height:0.40px;background:#555;"></div>
<div style="left:767.50px;top:152.11px;width:1.00px;height:0.40px;background:#555;"></div>
<div style="left:767.50px;top:153.78px;width:1.00px;height:0.40px;background:#555;"></div>
<div style="left:767.50px;top:155.45px;width:1.00px;height:0.40px;background:#555;"></div>
<div style="left:767.50px;top:157.12px;width:1.00px;height:0.40px;background:#555;"></div>
<div style="left:767.50px;top:158.79px;width:1.00px;height:0.40px;background:#555;"></div>
<div style="left:767.50px;top:160.46px;width:1.00px;height:0.40px;background:#555;"></div>
<div style="left:767.50px;top:162.13px;width:1.00px;height:0.40px;background:#555;"></div>
<div class="t" style="left:660.60px;top:167.70px;font-size:4.5px;line-height:5.40px;color:#bdbdbd;">Hz</div>
<div class="t" style="left:681.80px;top:167.70px;font-size:4.5px;line-height:5.40px;color:#bdbdbd;">5k</div>
<div class="t" style="left:702.00px;top:167.70px;font-size:4.5px;line-height:5.40px;color:#bdbdbd;">10k</div>
<div class="t" style="left:723.50px;top:167.70px;font-size:4.5px;line-height:5.40px;color:#bdbdbd;">15k</div>
<div class="t" style="left:744.60px;top:167.70px;font-size:4.5px;line-height:5.40px;color:#bdbdbd;">20k</div>
<div style="left:661.00px;top:164.00px;width:0.40px;height:2.50px;background:#666;"></div>
<div style="left:663.13px;top:164.00px;width:0.40px;height:1.60px;background:#666;"></div>
<div style="left:665.26px;top:164.00px;width:0.40px;height:1.60px;background:#666;"></div>
<div style="left:667.39px;top:164.00px;width:0.40px;height:1.60px;background:#666;"></div>
<div style="left:669.52px;top:164.00px;width:0.40px;height:1.60px;background:#666;"></div>
<div style="left:671.65px;top:164.00px;width:0.40px;height:2.50px;background:#666;"></div>
<div style="left:673.78px;top:164.00px;width:0.40px;height:1.60px;background:#666;"></div>
<div style="left:675.91px;top:164.00px;width:0.40px;height:1.60px;background:#666;"></div>
<div style="left:678.04px;top:164.00px;width:0.40px;height:1.60px;background:#666;"></div>
<div style="left:680.17px;top:164.00px;width:0.40px;height:1.60px;background:#666;"></div>
<div style="left:682.30px;top:164.00px;width:0.40px;height:2.50px;background:#666;"></div>
<div style="left:684.43px;top:164.00px;width:0.40px;height:1.60px;background:#666;"></div>
<div style="left:686.56px;top:164.00px;width:0.40px;height:1.60px;background:#666;"></div>
<div style="left:688.69px;top:164.00px;width:0.40px;height:1.60px;background:#666;"></div>
<div style="left:690.82px;top:164.00px;width:0.40px;height:1.60px;background:#666;"></div>
<div style="left:692.95px;top:164.00px;width:0.40px;height:2.50px;background:#666;"></div>
<div style="left:695.08px;top:164.00px;width:0.40px;height:1.60px;background:#666;"></div>
<div style="left:697.21px;top:164.00px;width:0.40px;height:1.60px;background:#666;"></div>
<div style="left:699.34px;top:164.00px;width:0.40px;height:1.60px;background:#666;"></div>
<div style="left:701.47px;top:164.00px;width:0.40px;height:1.60px;background:#666;"></div>
<div style="left:703.60px;top:164.00px;width:0.40px;height:2.50px;background:#666;"></div>
<div style="left:705.73px;top:164.00px;width:0.40px;height:1.60px;background:#666;"></div>
<div style="left:707.86px;top:164.00px;width:0.40px;height:1.60px;background:#666;"></div>
<div style="left:709.99px;top:164.00px;width:0.40px;height:1.60px;background:#666;"></div>
<div style="left:712.12px;top:164.00px;width:0.40px;height:1.60px;background:#666;"></div>
<div style="left:714.25px;top:164.00px;width:0.40px;height:2.50px;background:#666;"></div>
<div style="left:716.38px;top:164.00px;width:0.40px;height:1.60px;background:#666;"></div>
<div style="left:718.51px;top:164.00px;width:0.40px;height:1.60px;background:#666;"></div>
<div style="left:720.64px;top:164.00px;width:0.40px;height:1.60px;background:#666;"></div>
<div style="left:722.77px;top:164.00px;width:0.40px;height:1.60px;background:#666;"></div>
<div style="left:724.90px;top:164.00px;width:0.40px;height:2.50px;background:#666;"></div>
<div style="left:727.03px;top:164.00px;width:0.40px;height:1.60px;background:#666;"></div>
<div style="left:729.16px;top:164.00px;width:0.40px;height:1.60px;background:#666;"></div>
<div style="left:731.29px;top:164.00px;width:0.40px;height:1.60px;background:#666;"></div>
<div style="left:733.42px;top:164.00px;width:0.40px;height:1.60px;background:#666;"></div>
<div style="left:735.55px;top:164.00px;width:0.40px;height:2.50px;background:#666;"></div>
<div style="left:737.68px;top:164.00px;width:0.40px;height:1.60px;background:#666;"></div>
<div style="left:739.81px;top:164.00px;width:0.40px;height:1.60px;background:#666;"></div>
<div style="left:741.94px;top:164.00px;width:0.40px;height:1.60px;background:#666;"></div>
<div style="left:744.07px;top:164.00px;width:0.40px;height:1.60px;background:#666;"></div>
<div style="left:746.20px;top:164.00px;width:0.40px;height:2.50px;background:#666;"></div>
<div style="left:748.33px;top:164.00px;width:0.40px;height:1.60px;background:#666;"></div>
<div style="left:750.46px;top:164.00px;width:0.40px;height:1.60px;background:#666;"></div>
<div style="left:752.59px;top:164.00px;width:0.40px;height:1.60px;background:#666;"></div>
<div style="left:754.72px;top:164.00px;width:0.40px;height:1.60px;background:#666;"></div>
<div style="left:756.85px;top:164.00px;width:0.40px;height:2.50px;background:#666;"></div>
<div style="left:758.98px;top:164.00px;width:0.40px;height:1.60px;background:#666;"></div>
<div style="left:761.11px;top:164.00px;width:0.40px;height:1.60px;background:#666;"></div>
<div style="left:763.24px;top:164.00px;width:0.40px;height:1.60px;background:#666;"></div>
<div style="left:765.37px;top:164.00px;width:0.40px;height:1.60px;background:#666;"></div>
<div class="t" style="left:658.00px;top:187.52px;font-size:4.8px;line-height:5.76px;color:#bdbdbd;">Display:</div>
<div style="left:678.00px;top:186.50px;width:28.00px;height:8.00px;background:#1b1b1b;"></div>
<div class="t" style="left:680.00px;top:187.52px;font-size:4.8px;line-height:5.76px;color:#d0d0d0;">Lines</div>
<div style="left:701.00px;top:190.00px;width:2.50px;height:0.80px;background:#999;"></div>
<div class="t" style="left:712.00px;top:187.52px;font-size:4.8px;line-height:5.76px;color:#bdbdbd;">Top Channel:</div>
<div style="left:742.00px;top:186.50px;width:44.00px;height:8.00px;background:#1b1b1b;"></div>
<div class="t" style="left:744.00px;top:187.52px;font-size:4.8px;line-height:5.76px;color:#d0d0d0;">Left</div>
<svg style="position:absolute;left:782.00px;top:189.20px;overflow:visible" width="4" height="2.5" viewBox="0 0 4 2.5"><path d="M0.3 0.3 L2 2 L3.7 0.3" stroke="#aaa" stroke-width="0.8" fill="none"/></svg>
<div style="left:655.00px;top:194.00px;width:131.00px;height:0.80px;background:#1a1a1a;"></div>
<div class="t" style="left:660.00px;top:197.00px;font-size:5px;line-height:6.00px;color:#aaa;">&#8250;</div>
<div class="t" style="left:666.00px;top:197.00px;font-size:5px;line-height:6.00px;color:#d8d8d8;font-weight:bold">Advanced</div>
<div class="t" style="left:659.00px;top:211.12px;font-size:4.8px;line-height:5.76px;color:#ececec;">Phase Analysis</div>
<div style="left:694.00px;top:212.20px;width:3.00px;height:3.50px;background:transparent;border-top:1px solid #777;border-bottom:1px solid #777;box-sizing:border-box"></div>
<div style="left:658.70px;top:222.30px;width:108.00px;height:134.90px;background:#020202;"></div>
<svg style="position:absolute;left:658.70px;top:222.30px;overflow:hidden" width="108" height="134.9" viewBox="0 0 108 134.9"><ellipse cx="55.09999999999991" cy="67.30000000000001" rx="4.0" ry="4.9" fill="none" stroke="#242424" stroke-width="0.8"/><ellipse cx="55.09999999999991" cy="67.30000000000001" rx="8.0" ry="9.8" fill="none" stroke="#242424" stroke-width="0.8"/><ellipse cx="55.09999999999991" cy="67.30000000000001" rx="12.0" ry="14.7" fill="none" stroke="#242424" stroke-width="0.8"/><ellipse cx="55.09999999999991" cy="67.30000000000001" rx="16.0" ry="19.6" fill="none" stroke="#242424" stroke-width="0.8"/><ellipse cx="55.09999999999991" cy="67.30000000000001" rx="20.0" ry="24.5" fill="none" stroke="#242424" stroke-width="0.8"/><ellipse cx="55.09999999999991" cy="67.30000000000001" rx="24.0" ry="29.4" fill="none" stroke="#242424" stroke-width="0.8"/><ellipse cx="55.09999999999991" cy="67.30000000000001" rx="28.0" ry="34.3" fill="none" stroke="#242424" stroke-width="0.8"/><ellipse cx="55.09999999999991" cy="67.30000000000001" rx="32.0" ry="39.2" fill="none" stroke="#242424" stroke-width="0.8"/><ellipse cx="55.09999999999991" cy="67.30000000000001" rx="36.0" ry="44.1" fill="none" stroke="#242424" stroke-width="0.8"/><ellipse cx="55.09999999999991" cy="67.30000000000001" rx="40.0" ry="49.0" fill="none" stroke="#242424" stroke-width="0.8"/><ellipse cx="55.09999999999991" cy="67.30000000000001" rx="44.0" ry="53.9" fill="none" stroke="#242424" stroke-width="0.8"/><ellipse cx="55.09999999999991" cy="67.30000000000001" rx="48.0" ry="58.8" fill="none" stroke="#242424" stroke-width="0.8"/><ellipse cx="55.09999999999991" cy="67.30000000000001" rx="52.0" ry="63.7" fill="none" stroke="#242424" stroke-width="0.8"/><ellipse cx="55.09999999999991" cy="67.30000000000001" rx="56.0" ry="68.6" fill="none" stroke="#242424" stroke-width="0.8"/><ellipse cx="55.09999999999991" cy="67.30000000000001" rx="60.0" ry="73.5" fill="none" stroke="#242424" stroke-width="0.8"/><ellipse cx="55.09999999999991" cy="67.30000000000001" rx="64.0" ry="78.4" fill="none" stroke="#242424" stroke-width="0.8"/><ellipse cx="55.09999999999991" cy="67.30000000000001" rx="68.0" ry="83.3" fill="none" stroke="#242424" stroke-width="0.8"/><ellipse cx="55.09999999999991" cy="67.30000000000001" rx="72.0" ry="88.2" fill="none" stroke="#242424" stroke-width="0.8"/><ellipse cx="55.09999999999991" cy="67.30000000000001" rx="76.0" ry="93.1" fill="none" stroke="#242424" stroke-width="0.8"/><ellipse cx="55.09999999999991" cy="67.30000000000001" rx="80.0" ry="98.0" fill="none" stroke="#242424" stroke-width="0.8"/><ellipse cx="55.09999999999991" cy="67.30000000000001" rx="84.0" ry="102.9" fill="none" stroke="#242424" stroke-width="0.8"/><ellipse cx="55.09999999999991" cy="67.30000000000001" rx="88.0" ry="107.8" fill="none" stroke="#242424" stroke-width="0.8"/><ellipse cx="55.09999999999991" cy="67.30000000000001" rx="92.0" ry="112.7" fill="none" stroke="#242424" stroke-width="0.8"/><ellipse cx="55.09999999999991" cy="67.30000000000001" rx="96.0" ry="117.6" fill="none" stroke="#242424" stroke-width="0.8"/><ellipse cx="55.09999999999991" cy="67.30000000000001" rx="100.0" ry="122.5" fill="none" stroke="#242424" stroke-width="0.8"/><rect x="54.59999999999991" y="0" width="1" height="134.9" fill="#5e161b"/><rect x="0" y="66.80000000000001" width="108" height="1" fill="#5e161b"/><rect x="53.59999999999991" y="11.2" width="3" height="0.5" fill="#7a1c22"/><rect x="9.0" y="65.80000000000001" width="0.5" height="3" fill="#7a1c22"/><rect x="53.59999999999991" y="22.4" width="3" height="0.5" fill="#7a1c22"/><rect x="18.0" y="65.80000000000001" width="0.5" height="3" fill="#7a1c22"/><rect x="53.59999999999991" y="33.6" width="3" height="0.5" fill="#7a1c22"/><rect x="27.0" y="65.80000000000001" width="0.5" height="3" fill="#7a1c22"/><rect x="53.59999999999991" y="44.8" width="3" height="0.5" fill="#7a1c22"/><rect x="36.0" y="65.80000000000001" width="0.5" height="3" fill="#7a1c22"/><rect x="53.59999999999991" y="56.0" width="3" height="0.5" fill="#7a1c22"/><rect x="45.0" y="65.80000000000001" width="0.5" height="3" fill="#7a1c22"/><rect x="53.59999999999991" y="67.2" width="3" height="0.5" fill="#7a1c22"/><rect x="54.0" y="65.80000000000001" width="0.5" height="3" fill="#7a1c22"/><rect x="53.59999999999991" y="78.4" width="3" height="0.5" fill="#7a1c22"/><rect x="63.0" y="65.80000000000001" width="0.5" height="3" fill="#7a1c22"/><rect x="53.59999999999991" y="89.6" width="3" height="0.5" fill="#7a1c22"/><rect x="72.0" y="65.80000000000001" width="0.5" height="3" fill="#7a1c22"/><rect x="53.59999999999991" y="100.8" width="3" height="0.5" fill="#7a1c22"/><rect x="81.0" y="65.80000000000001" width="0.5" height="3" fill="#7a1c22"/><rect x="53.59999999999991" y="112.0" width="3" height="0.5" fill="#7a1c22"/><rect x="90.0" y="65.80000000000001" width="0.5" height="3" fill="#7a1c22"/><rect x="53.59999999999991" y="123.2" width="3" height="0.5" fill="#7a1c22"/><rect x="99.0" y="65.80000000000001" width="0.5" height="3" fill="#7a1c22"/><path d="M57.5 0.3 L66.5 0.3 L66.8 10 L66.5 18 L65.8 38 L66 52 L65.5 60 L64 66.5 L62.2 69.5 L64.8 68 L61 70.5 L58 71.2 L54.3 71.8 L50.5 69.5 L48.5 66.8 L46.5 61 L46 52 L46.8 42 L47.3 30 L47.7 22.5 L49.3 16 L55.5 14.3 L56.8 8 Z" fill="none" stroke="#d8d8d8" stroke-width="0.8"/><circle cx="55.399999999999906" cy="43.5" r="4.2" fill="#3ae05a" opacity="0.3"/><circle cx="55.399999999999906" cy="43.5" r="2.6" fill="#5af07a"/></svg>
<div class="t" style="left:709.00px;top:222.40px;font-size:3.5px;line-height:4.20px;color:#a02a30;">Mono</div>
<div class="t" style="left:662.00px;top:285.22px;font-size:3.8px;line-height:4.56px;color:#a02a30;">Left</div>
<div class="t" style="left:756.00px;top:285.22px;font-size:3.8px;line-height:4.56px;color:#a02a30;">Right</div>
<div class="t" style="left:707.00px;top:351.90px;font-size:3.5px;line-height:4.20px;color:#a02a30;">Reverse</div>
<div style="left:767.50px;top:230.85px;width:1.50px;height:0.50px;background:#888;"></div>
<div class="t" style="left:772.50px;top:228.33px;font-size:4.2px;line-height:5.04px;color:#c4c4c4;">&minus;0.9</div>
<div style="left:767.50px;top:237.50px;width:1.50px;height:0.50px;background:#888;"></div>
<div class="t" style="left:772.50px;top:234.98px;font-size:4.2px;line-height:5.04px;color:#c4c4c4;">&minus;0.8</div>
<div style="left:767.50px;top:244.15px;width:1.50px;height:0.50px;background:#888;"></div>
<div class="t" style="left:772.50px;top:241.63px;font-size:4.2px;line-height:5.04px;color:#c4c4c4;">&minus;0.7</div>
<div style="left:767.50px;top:250.80px;width:1.50px;height:0.50px;background:#888;"></div>
<div class="t" style="left:772.50px;top:248.28px;font-size:4.2px;line-height:5.04px;color:#c4c4c4;">&minus;0.6</div>
<div style="left:767.50px;top:257.45px;width:1.50px;height:0.50px;background:#888;"></div>
<div class="t" style="left:772.50px;top:254.93px;font-size:4.2px;line-height:5.04px;color:#c4c4c4;">&minus;0.5</div>
<div style="left:767.50px;top:264.10px;width:1.50px;height:0.50px;background:#888;"></div>
<div class="t" style="left:772.50px;top:261.58px;font-size:4.2px;line-height:5.04px;color:#c4c4c4;">&minus;0.4</div>
<div style="left:767.50px;top:270.75px;width:1.50px;height:0.50px;background:#888;"></div>
<div class="t" style="left:772.50px;top:268.23px;font-size:4.2px;line-height:5.04px;color:#c4c4c4;">&minus;0.3</div>
<div style="left:767.50px;top:277.40px;width:1.50px;height:0.50px;background:#888;"></div>
<div class="t" style="left:772.50px;top:274.88px;font-size:4.2px;line-height:5.04px;color:#c4c4c4;">&minus;0.2</div>
<div style="left:767.50px;top:284.05px;width:1.50px;height:0.50px;background:#888;"></div>
<div class="t" style="left:772.50px;top:281.53px;font-size:4.2px;line-height:5.04px;color:#c4c4c4;">&minus;0.1</div>
<div style="left:767.50px;top:290.70px;width:1.50px;height:0.50px;background:#888;"></div>
<div class="t" style="left:772.50px;top:288.18px;font-size:4.2px;line-height:5.04px;color:#c4c4c4;">0.0</div>
<div style="left:767.50px;top:297.35px;width:1.50px;height:0.50px;background:#888;"></div>
<div class="t" style="left:772.50px;top:294.83px;font-size:4.2px;line-height:5.04px;color:#c4c4c4;">0.1</div>
<div style="left:767.50px;top:304.00px;width:1.50px;height:0.50px;background:#888;"></div>
<div class="t" style="left:772.50px;top:301.48px;font-size:4.2px;line-height:5.04px;color:#c4c4c4;">0.2</div>
<div style="left:767.50px;top:310.65px;width:1.50px;height:0.50px;background:#888;"></div>
<div class="t" style="left:772.50px;top:308.13px;font-size:4.2px;line-height:5.04px;color:#c4c4c4;">0.3</div>
<div style="left:767.50px;top:317.30px;width:1.50px;height:0.50px;background:#888;"></div>
<div class="t" style="left:772.50px;top:314.78px;font-size:4.2px;line-height:5.04px;color:#c4c4c4;">0.4</div>
<div style="left:767.50px;top:323.95px;width:1.50px;height:0.50px;background:#888;"></div>
<div class="t" style="left:772.50px;top:321.43px;font-size:4.2px;line-height:5.04px;color:#c4c4c4;">0.5</div>
<div style="left:767.50px;top:330.60px;width:1.50px;height:0.50px;background:#888;"></div>
<div class="t" style="left:772.50px;top:328.08px;font-size:4.2px;line-height:5.04px;color:#c4c4c4;">0.6</div>
<div style="left:767.50px;top:337.25px;width:1.50px;height:0.50px;background:#888;"></div>
<div class="t" style="left:772.50px;top:334.73px;font-size:4.2px;line-height:5.04px;color:#c4c4c4;">0.7</div>
<div style="left:767.50px;top:343.90px;width:1.50px;height:0.50px;background:#888;"></div>
<div class="t" style="left:772.50px;top:341.38px;font-size:4.2px;line-height:5.04px;color:#c4c4c4;">0.8</div>
<div style="left:767.50px;top:350.55px;width:1.50px;height:0.50px;background:#888;"></div>
<div class="t" style="left:772.50px;top:348.03px;font-size:4.2px;line-height:5.04px;color:#c4c4c4;">0.9</div>
<div style="left:767.50px;top:357.20px;width:1.50px;height:0.50px;background:#888;"></div>
<div class="t" style="left:772.50px;top:354.68px;font-size:4.2px;line-height:5.04px;color:#c4c4c4;">1.0</div>
<div class="t" style="left:667.00px;top:362.00px;font-size:4.0px;line-height:4.80px;color:#c4c4c4;">&minus;0.8</div>
<div class="t" style="left:677.85px;top:362.00px;font-size:4.0px;line-height:4.80px;color:#c4c4c4;">&minus;0.6</div>
<div class="t" style="left:688.70px;top:362.00px;font-size:4.0px;line-height:4.80px;color:#c4c4c4;">&minus;0.4</div>
<div class="t" style="left:699.55px;top:362.00px;font-size:4.0px;line-height:4.80px;color:#c4c4c4;">&minus;0.2</div>
<div class="t" style="left:710.40px;top:362.00px;font-size:4.0px;line-height:4.80px;color:#c4c4c4;">0.0</div>
<div class="t" style="left:721.25px;top:362.00px;font-size:4.0px;line-height:4.80px;color:#c4c4c4;">0.2</div>
<div class="t" style="left:732.10px;top:362.00px;font-size:4.0px;line-height:4.80px;color:#c4c4c4;">0.4</div>
<div class="t" style="left:742.95px;top:362.00px;font-size:4.0px;line-height:4.80px;color:#c4c4c4;">0.6</div>
<div class="t" style="left:753.80px;top:362.00px;font-size:4.0px;line-height:4.80px;color:#c4c4c4;">0.8</div>
<div class="t" style="left:764.65px;top:362.00px;font-size:4.0px;line-height:4.80px;color:#c4c4c4;">1.0</div>
<div style="left:659.00px;top:358.30px;width:0.50px;height:1.50px;background:#666;"></div>
<div style="left:664.40px;top:358.30px;width:0.50px;height:1.50px;background:#666;"></div>
<div style="left:669.80px;top:358.30px;width:0.50px;height:1.50px;background:#666;"></div>
<div style="left:675.20px;top:358.30px;width:0.50px;height:1.50px;background:#666;"></div>
<div style="left:680.60px;top:358.30px;width:0.50px;height:1.50px;background:#666;"></div>
<div style="left:686.00px;top:358.30px;width:0.50px;height:1.50px;background:#666;"></div>
<div style="left:691.40px;top:358.30px;width:0.50px;height:1.50px;background:#666;"></div>
<div style="left:696.80px;top:358.30px;width:0.50px;height:1.50px;background:#666;"></div>
<div style="left:702.20px;top:358.30px;width:0.50px;height:1.50px;background:#666;"></div>
<div style="left:707.60px;top:358.30px;width:0.50px;height:1.50px;background:#666;"></div>
<div style="left:713.00px;top:358.30px;width:0.50px;height:1.50px;background:#666;"></div>
<div style="left:718.40px;top:358.30px;width:0.50px;height:1.50px;background:#666;"></div>
<div style="left:723.80px;top:358.30px;width:0.50px;height:1.50px;background:#666;"></div>
<div style="left:729.20px;top:358.30px;width:0.50px;height:1.50px;background:#666;"></div>
<div style="left:734.60px;top:358.30px;width:0.50px;height:1.50px;background:#666;"></div>
<div style="left:740.00px;top:358.30px;width:0.50px;height:1.50px;background:#666;"></div>
<div style="left:745.40px;top:358.30px;width:0.50px;height:1.50px;background:#666;"></div>
<div style="left:750.80px;top:358.30px;width:0.50px;height:1.50px;background:#666;"></div>
<div style="left:756.20px;top:358.30px;width:0.50px;height:1.50px;background:#666;"></div>
<div style="left:761.60px;top:358.30px;width:0.50px;height:1.50px;background:#666;"></div>
<div style="left:767.00px;top:358.30px;width:0.50px;height:1.50px;background:#666;"></div>
<div class="t" style="left:665.00px;top:373.12px;font-size:4.8px;line-height:5.76px;color:#bdbdbd;">Mode:</div>
<div style="left:680.00px;top:372.00px;width:62.00px;height:8.00px;background:#1b1b1b;"></div>
<div class="t" style="left:682.00px;top:373.12px;font-size:4.8px;line-height:5.76px;color:#d0d0d0;">Histogram (Log Zoom)</div>
<svg style="position:absolute;left:737.50px;top:374.80px;overflow:visible" width="4" height="2.5" viewBox="0 0 4 2.5"><path d="M0.3 0.3 L2 2 L3.7 0.3" stroke="#aaa" stroke-width="0.8" fill="none"/></svg>
<div class="t" style="left:757.00px;top:372.62px;font-size:4.8px;line-height:5.76px;color:#bdbdbd;">Samples:</div>
<div style="left:777.00px;top:371.50px;width:9.00px;height:8.00px;background:#1b1b1b;"></div>
<div class="t" style="left:778.00px;top:372.62px;font-size:4.8px;line-height:5.76px;color:#d0d0d0;">102</div>
<div class="t" style="left:658.50px;top:385.32px;font-size:4.8px;line-height:5.76px;color:#bdbdbd;">Channel:</div>
<div style="left:680.00px;top:384.20px;width:62.00px;height:8.00px;background:#1b1b1b;"></div>
<div class="t" style="left:682.00px;top:385.32px;font-size:4.8px;line-height:5.76px;color:#d0d0d0;">Left</div>
<svg style="position:absolute;left:737.50px;top:387.00px;overflow:visible" width="4" height="2.5" viewBox="0 0 4 2.5"><path d="M0.3 0.3 L2 2 L3.7 0.3" stroke="#aaa" stroke-width="0.8" fill="none"/></svg>
<div class="t" style="left:747.00px;top:384.92px;font-size:4.8px;line-height:5.76px;color:#bdbdbd;">Compare To:</div>
<div style="left:776.00px;top:383.80px;width:10.00px;height:8.00px;background:#1b1b1b;"></div>
<div class="t" style="left:778.00px;top:384.92px;font-size:4.8px;line-height:5.76px;color:#d0d0d0;">Righ</div>
<div class="t" style="left:660.00px;top:403.24px;font-size:4.6px;line-height:5.52px;color:#ececec;">Phase Meter</div>
<div style="left:688.00px;top:404.20px;width:3.00px;height:3.50px;background:transparent;border-top:1px solid #777;border-bottom:1px solid #777;box-sizing:border-box"></div>
<div style="left:657.00px;top:416.00px;width:114.00px;height:23.00px;background:linear-gradient(90deg,#dc1410 0%,#dc2a10 9%,#dc5010 20%,#d87a10 30%,#cc9c10 42%,#bcae10 55%,#a8b410 65%,#70b010 75%,#30a810 86%,#10a818 96%);"></div>
<svg style="position:absolute;left:657.00px;top:416.00px;overflow:visible" width="114" height="23" viewBox="0 0 114 23"><rect x="12.5" y="0" width="0.8" height="23" fill="#ffffff" opacity="0.14"/><rect x="23.6" y="0" width="0.8" height="23" fill="#ffffff" opacity="0.14"/><rect x="34.7" y="0" width="0.8" height="23" fill="#ffffff" opacity="0.14"/><rect x="45.8" y="0" width="0.8" height="23" fill="#ffffff" opacity="0.14"/><rect x="56.9" y="0" width="0.8" height="23" fill="#ffffff" opacity="0.14"/><rect x="68.0" y="0" width="0.8" height="23" fill="#ffffff" opacity="0.14"/><rect x="79.1" y="0" width="0.8" height="23" fill="#ffffff" opacity="0.14"/><rect x="90.2" y="0" width="0.8" height="23" fill="#ffffff" opacity="0.14"/><rect x="101.3" y="0" width="0.8" height="23" fill="#ffffff" opacity="0.14"/><rect x="112.4" y="0" width="0.8" height="23" fill="#ffffff" opacity="0.14"/></svg>
<div style="left:767.50px;top:416.00px;width:3.50px;height:23.00px;background:#48e040;"></div>
<div class="t" style="left:775.50px;top:424.70px;font-size:5px;line-height:6.00px;color:#d8d8d8;">0.91</div>
<div class="t" style="left:665.10px;top:441.60px;font-size:4.0px;line-height:4.80px;color:#c4c4c4;">&minus;0.8</div>
<div class="t" style="left:676.17px;top:441.60px;font-size:4.0px;line-height:4.80px;color:#c4c4c4;">&minus;0.6</div>
<div class="t" style="left:687.24px;top:441.60px;font-size:4.0px;line-height:4.80px;color:#c4c4c4;">&minus;0.4</div>
<div class="t" style="left:698.31px;top:441.60px;font-size:4.0px;line-height:4.80px;color:#c4c4c4;">&minus;0.2</div>
<div class="t" style="left:709.38px;top:441.60px;font-size:4.0px;line-height:4.80px;color:#c4c4c4;">0.0</div>
<div class="t" style="left:720.45px;top:441.60px;font-size:4.0px;line-height:4.80px;color:#c4c4c4;">0.2</div>
<div class="t" style="left:731.52px;top:441.60px;font-size:4.0px;line-height:4.80px;color:#c4c4c4;">0.4</div>
<div class="t" style="left:742.59px;top:441.60px;font-size:4.0px;line-height:4.80px;color:#c4c4c4;">0.6</div>
<div class="t" style="left:753.66px;top:441.60px;font-size:4.0px;line-height:4.80px;color:#c4c4c4;">0.8</div>
<div class="t" style="left:764.73px;top:441.60px;font-size:4.0px;line-height:4.80px;color:#c4c4c4;">1.0</div>
<div class="t" style="left:794.00px;top:64.30px;font-size:5px;line-height:6.00px;color:#e0e0e0;font-weight:bold">Levels</div>
<div style="left:812.00px;top:65.50px;width:3.00px;height:3.50px;background:transparent;border-top:1px solid #777;border-bottom:1px solid #777;box-sizing:border-box"></div>
<div style="left:791.50px;top:74.50px;width:21.00px;height:371.00px;background:#0c0c0c;"></div>
<div style="left:792.30px;top:75.50px;width:9.10px;height:2.60px;background:#f07582;"></div>
<div style="left:792.30px;top:78.10px;width:9.10px;height:37.90px;background:#ee3340;"></div>
<div style="left:792.30px;top:116.00px;width:9.10px;height:73.00px;background:#f4cf2e;"></div>
<div style="left:792.30px;top:189.00px;width:9.10px;height:255.00px;background:#16ea30;"></div>
<div style="left:802.10px;top:75.50px;width:9.80px;height:2.60px;background:#f07582;"></div>
<div style="left:802.10px;top:78.10px;width:9.80px;height:37.90px;background:#ee3340;"></div>
<div style="left:802.10px;top:116.00px;width:9.80px;height:73.00px;background:#f4cf2e;"></div>
<div style="left:802.10px;top:189.00px;width:9.80px;height:255.00px;background:#16ea30;"></div>
<div class="t" style="left:816.00px;top:77.60px;font-size:4.0px;line-height:4.80px;color:#c4c4c4;">0</div>
<div class="t" style="left:816.00px;top:96.10px;font-size:4.0px;line-height:4.80px;color:#c4c4c4;">&minus;3</div>
<div class="t" style="left:816.00px;top:114.60px;font-size:4.0px;line-height:4.80px;color:#c4c4c4;">&minus;6</div>
<div class="t" style="left:816.00px;top:133.10px;font-size:4.0px;line-height:4.80px;color:#c4c4c4;">&minus;9</div>
<div class="t" style="left:816.00px;top:151.60px;font-size:4.0px;line-height:4.80px;color:#c4c4c4;">&minus;12</div>
<div class="t" style="left:816.00px;top:170.10px;font-size:4.0px;line-height:4.80px;color:#c4c4c4;">&minus;15</div>
<div class="t" style="left:816.00px;top:188.60px;font-size:4.0px;line-height:4.80px;color:#c4c4c4;">&minus;18</div>
<div class="t" style="left:816.00px;top:207.10px;font-size:4.0px;line-height:4.80px;color:#c4c4c4;">&minus;21</div>
<div class="t" style="left:816.00px;top:225.60px;font-size:4.0px;line-height:4.80px;color:#c4c4c4;">&minus;24</div>
<div class="t" style="left:816.00px;top:244.10px;font-size:4.0px;line-height:4.80px;color:#c4c4c4;">&minus;27</div>
<div class="t" style="left:816.00px;top:262.60px;font-size:4.0px;line-height:4.80px;color:#c4c4c4;">&minus;30</div>
<div class="t" style="left:816.00px;top:281.10px;font-size:4.0px;line-height:4.80px;color:#c4c4c4;">&minus;33</div>
<div class="t" style="left:816.00px;top:299.60px;font-size:4.0px;line-height:4.80px;color:#c4c4c4;">&minus;36</div>
<div class="t" style="left:816.00px;top:318.10px;font-size:4.0px;line-height:4.80px;color:#c4c4c4;">&minus;39</div>
<div class="t" style="left:816.00px;top:336.60px;font-size:4.0px;line-height:4.80px;color:#c4c4c4;">&minus;42</div>
<div class="t" style="left:816.00px;top:355.10px;font-size:4.0px;line-height:4.80px;color:#c4c4c4;">&minus;45</div>
<div class="t" style="left:816.00px;top:373.60px;font-size:4.0px;line-height:4.80px;color:#c4c4c4;">&minus;48</div>
<div class="t" style="left:816.00px;top:392.10px;font-size:4.0px;line-height:4.80px;color:#c4c4c4;">&minus;51</div>
<div class="t" style="left:816.00px;top:410.60px;font-size:4.0px;line-height:4.80px;color:#c4c4c4;">&minus;54</div>
<div class="t" style="left:816.00px;top:429.10px;font-size:4.0px;line-height:4.80px;color:#c4c4c4;">&minus;57</div>
<div class="t" style="left:816.00px;top:442.10px;font-size:4.0px;line-height:4.80px;color:#c4c4c4;">dB</div>
</div></body></html>
